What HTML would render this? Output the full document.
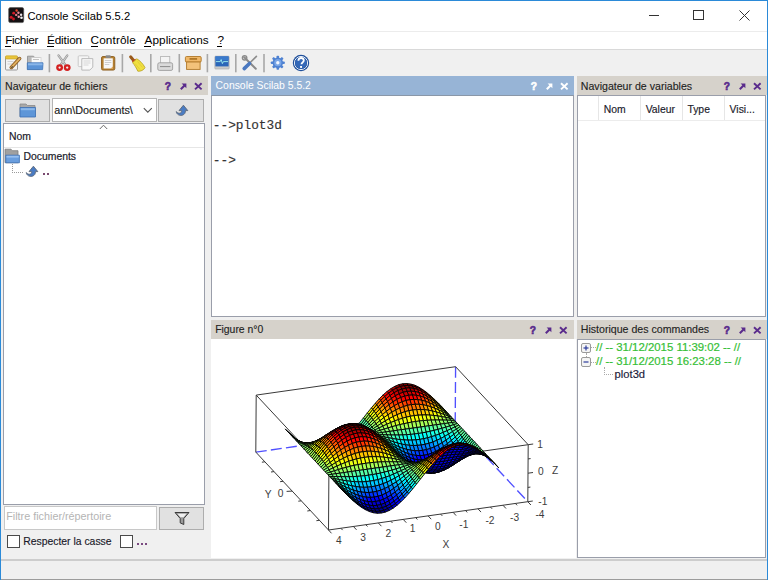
<!DOCTYPE html>
<html><head><meta charset="utf-8">
<style>
*{margin:0;padding:0;box-sizing:border-box}
html,body{width:768px;height:580px;overflow:hidden;background:#f0f0f0;font-family:"Liberation Sans",sans-serif}
body{position:relative}
.t{position:absolute;white-space:nowrap;line-height:1}
.b{position:absolute}
svg{position:absolute;overflow:visible}
</style></head><body>

<div class="b" style="left:0px;top:0px;width:768px;height:31px;background:#fff"></div>
<svg style="left:8px;top:6.5px" width="16" height="16" viewBox="0 0 16 16"><rect x="0.7" y="0.6" width="15" height="15" rx="1.6" fill="#141012" stroke="#5a5a5a" stroke-width="0.7"/><circle cx="5.7" cy="6.2" r="1.4" fill="#d81c28"/><circle cx="3.2" cy="10.2" r="1.5" fill="#d01824"/><circle cx="5.5" cy="12" r="1.4" fill="#c81420"/><circle cx="8.6" cy="3.5" r="1.2" fill="#e04a30"/><circle cx="10.4" cy="5.8" r="1.2" fill="#e88a98"/><circle cx="8.2" cy="7.9" r="1.2" fill="#e07888"/><circle cx="10.7" cy="9.7" r="1.2" fill="#eca0b0"/><circle cx="13.1" cy="7.7" r="1.2" fill="#e8e0e4"/><circle cx="13.5" cy="10.8" r="1.3" fill="#f4f4f4"/></svg>
<div class="t" style="left:27.50px;top:11.22px;font-size:11.20px;color:#000;font-family:'Liberation Sans',sans-serif;">Console Scilab 5.5.2</div>
<div class="b" style="left:649px;top:15px;width:10px;height:1px;background:#333"></div>
<div class="b" style="left:693px;top:10px;width:11px;height:10px;border:1px solid #333"></div>
<svg style="left:739px;top:10px" width="11" height="11" viewBox="0 0 11 11"><path d="M0.5 0.5L10.5 10.5M10.5 0.5L0.5 10.5" stroke="#333" stroke-width="1"/></svg>
<div class="b" style="left:0px;top:31px;width:768px;height:1px;background:#ececec"></div>
<div class="b" style="left:0px;top:32px;width:768px;height:17px;background:#fff"></div>
<div class="t" style="left:5.20px;top:34.61px;font-size:11.80px;color:#000;font-family:'Liberation Sans',sans-serif;letter-spacing:-0.38px">Fichier</div>
<div class="t" style="left:47.00px;top:34.61px;font-size:11.80px;color:#000;font-family:'Liberation Sans',sans-serif;letter-spacing:-0.16px">Édition</div>
<div class="t" style="left:90.60px;top:34.61px;font-size:11.80px;color:#000;font-family:'Liberation Sans',sans-serif;letter-spacing:0.1px">Contrôle</div>
<div class="t" style="left:144.50px;top:34.61px;font-size:11.80px;color:#000;font-family:'Liberation Sans',sans-serif;letter-spacing:0.05px">Applications</div>
<div class="t" style="left:217.50px;top:34.61px;font-size:11.80px;color:#000;font-family:'Liberation Sans',sans-serif;letter-spacing:0px">?</div>
<div class="b" style="left:5.2px;top:46px;width:6px;height:1px;background:#000"></div>
<div class="b" style="left:47px;top:46px;width:6.5px;height:1px;background:#000"></div>
<div class="b" style="left:90.6px;top:46px;width:7px;height:1px;background:#000"></div>
<div class="b" style="left:144.3px;top:46px;width:7px;height:1px;background:#000"></div>
<div class="b" style="left:217px;top:46px;width:5px;height:1px;background:#000"></div>
<div class="b" style="left:0px;top:49px;width:768px;height:1px;background:#d9d9d9"></div>
<svg class="abs" style="left:0;top:49px" width="320" height="27" viewBox="0 49 320 27">
<!-- new -->
<rect x="5.5" y="56.5" width="12" height="13.5" rx="1" fill="#f4f4f4" stroke="#9a9a9a"/>
<rect x="5.5" y="55.8" width="12" height="3.2" rx="1" fill="#e8c43a" stroke="#c8a020" stroke-width="0.6"/>
<path d="M7.5 61.5h6M7.5 64h5" stroke="#c8c8c8" stroke-width="0.8"/>
<path d="M19.6 58.6L11.3 67.4" stroke="#8a5a20" stroke-width="3.6" stroke-linecap="round"/>
<path d="M19.6 58.6L11.3 67.4" stroke="#e0b060" stroke-width="2" stroke-linecap="round"/>
<path d="M10.6 68.4l1.5-2.5 1 1z" fill="#333"/>
<!-- open -->
<path d="M27.5 56.2h6l1.5 1.5h4.5v11.8h-12z" fill="#b8b8b8" stroke="#8c8c8c" stroke-width="0.8"/>
<rect x="31.5" y="57.5" width="9.5" height="7" fill="#fafafa" stroke="#c8c8c8" stroke-width="0.6"/>
<path d="M33 59.5h6" stroke="#aaa" stroke-width="0.7"/>
<path d="M27.3 62.8h15.7l-0.4 6.8h-15.3z" fill="#5b93d6" stroke="#3e74b8" stroke-width="0.8"/>
<rect x="28" y="63.3" width="14.5" height="2" fill="#8ab6e8"/>
<!-- seps -->
<g fill="#a8a8a8"><rect x="48.6" y="54" width="1.6" height="18.3"/><rect x="121.6" y="54" width="1.6" height="18.3"/><rect x="150" y="54" width="1.6" height="18.3"/><rect x="178.5" y="54" width="1.6" height="18.3"/><rect x="206.6" y="54" width="1.6" height="18.3"/><rect x="235" y="54" width="1.6" height="18.3"/><rect x="263.2" y="54" width="1.6" height="18.3"/></g>
<!-- scissors -->
<path d="M58.5 55.5L65.5 65M67.3 55.5L60.5 65" stroke="#9a9a9a" stroke-width="2.2" stroke-linecap="round"/>
<path d="M58.5 55.5L65.5 65M67.3 55.5L60.5 65" stroke="#d8d8d8" stroke-width="0.9" stroke-linecap="round"/>
<circle cx="59.6" cy="67.6" r="2.3" fill="none" stroke="#d42020" stroke-width="2.3"/>
<circle cx="67.2" cy="67.6" r="2.3" fill="none" stroke="#d42020" stroke-width="2.3"/>
<!-- copy -->
<rect x="78.2" y="55.8" width="10.6" height="10.8" rx="1" fill="#f6f6f6" stroke="#c4c4c4" stroke-width="0.9"/>
<path d="M81.8 58.6h11v8.5l-3 3h-8z" fill="#f8f8f8" stroke="#b4b4b4" stroke-width="0.9"/>
<path d="M83.5 61h7M83.5 63h7M83.5 65h5" stroke="#c8c8c8" stroke-width="0.7"/>
<!-- paste -->
<rect x="101.5" y="56.5" width="13.3" height="13.6" rx="1.5" fill="#b58030" stroke="#8e6020" stroke-width="0.9"/>
<rect x="103.6" y="58.3" width="9.2" height="10.2" fill="#f8f8f8"/>
<rect x="105.5" y="55.3" width="5.3" height="2.8" rx="1" fill="#8a8a8a"/>
<path d="M104.8 60.5h6.5M104.8 62.5h6.5M104.8 64.5h4.5" stroke="#bbb" stroke-width="0.7"/>
<path d="M110.8 68.5l2-2v2z" fill="#e09030"/>
<!-- broom -->
<path d="M130.6 56.8L134.2 61.2" stroke="#9a5a1a" stroke-width="3" stroke-linecap="round"/>
<path d="M132 61.6l3.2-2.8 1.4 1.4-3.2 2.8z" fill="#c83820"/>
<path d="M132.6 62.6L136.8 58.8C139.6 60.4 143 63.6 145 67.6C144 70 140.6 71.6 137.8 71.2C136.6 68.4 134.6 65 132.6 62.6z" fill="#f0e040" stroke="#b8a020" stroke-width="0.8"/>
<path d="M135 63.5L140 69.5M137.5 61.5L142.5 67.5" stroke="#d8c030" stroke-width="0.6"/>
<!-- printer -->
<rect x="160.6" y="56.4" width="9.2" height="7" fill="#f4f4f4" stroke="#b0b0b0" stroke-width="0.8"/>
<rect x="157.8" y="62.8" width="14.8" height="7.6" rx="1.5" fill="#dadada" stroke="#9c9c9c" stroke-width="0.9"/>
<path d="M160 66.6h10.4" stroke="#8a8a8a" stroke-width="1"/>
<!-- box -->
<rect x="185.4" y="56.5" width="15.8" height="5.6" rx="1.2" fill="#f0b868" stroke="#b07828" stroke-width="0.9"/>
<rect x="186.6" y="62" width="13.5" height="7.4" fill="#f3c27a" stroke="#b07828" stroke-width="0.9"/>
<rect x="189.5" y="58" width="7.6" height="1.8" fill="#b07828"/>
<!-- monitor -->
<rect x="214.8" y="56.2" width="14.4" height="12.8" rx="0.8" fill="#c9c9c9" stroke="#a8a8a8" stroke-width="0.6"/>
<rect x="215.4" y="56.4" width="13.2" height="10" fill="#2c66b8"/>
<rect x="215.4" y="56.4" width="13.2" height="4" fill="#3a7acc"/>
<path d="M216 61.6h4.2l1-2 1.2 4 1-2h4.6" fill="none" stroke="#a0f0f0" stroke-width="0.9"/>
<!-- tools -->
<path d="M244.2 57.2L255.8 68.8" stroke="#8a8a8a" stroke-width="2" stroke-linecap="round"/>
<circle cx="244.6" cy="57.8" r="2.2" fill="none" stroke="#8a8a8a" stroke-width="1.4"/>
<path d="M256.4 56.4L250 62.8" stroke="#8c8c8c" stroke-width="1.6" stroke-linecap="round"/>
<path d="M249.5 63.5L244.2 68.6" stroke="#4a78c0" stroke-width="3.6" stroke-linecap="round"/>
<!-- gear -->
<g transform="translate(277.8 62.7)">
<circle r="5.2" fill="#4f82d2"/>
<g fill="#4f82d2"><rect x="-1.3" y="-7" width="2.6" height="14" rx="0.8"/><rect x="-1.3" y="-7" width="2.6" height="14" rx="0.8" transform="rotate(45)"/><rect x="-1.3" y="-7" width="2.6" height="14" rx="0.8" transform="rotate(90)"/><rect x="-1.3" y="-7" width="2.6" height="14" rx="0.8" transform="rotate(135)"/></g>
<circle r="3.6" fill="#7aa6e6"/>
<circle r="1.7" fill="#f2f6ff"/>
</g>
<!-- help -->
<circle cx="301" cy="63" r="8.2" fill="#1f4f9a"/>
<circle cx="301" cy="63" r="6.6" fill="none" stroke="#e8eef8" stroke-width="1"/>
<circle cx="301" cy="63" r="5.8" fill="#3468b8"/>
<path d="M298.4 60.8c0-1.8 1.2-2.8 2.7-2.8s2.7 1 2.7 2.5c0 1.8-2.3 2-2.3 3.8" fill="none" stroke="#fff" stroke-width="1.8"/>
<rect x="300.1" y="66" width="1.9" height="1.9" fill="#fff"/>
</svg>

<div class="b" style="left:1px;top:76px;width:207px;height:19px;background:#d6d2cb"></div>
<div class="t" style="left:5.00px;top:80.53px;font-size:10.60px;color:#222;font-family:'Liberation Sans',sans-serif;-webkit-text-stroke:0.12px #222">Navigateur de fichiers</div>
<svg style="left:163px;top:76px" width="42" height="19" viewBox="0 0 42 19"><text x="4.8" y="13.7" font-family="Liberation Sans" font-weight="bold" font-size="10.2" text-anchor="middle" fill="#5a2b8c" stroke="#5a2b8c" stroke-width="0.6">?</text><path d="M17.8 13.2L21.8 9.2" stroke="#5a2b8c" stroke-width="2"/><path d="M18.6 7.4h4.8v4.8z" fill="#5a2b8c"/><path d="M32 7.2L38.6 13.4M38.6 7.2L32 13.4" stroke="#5a2b8c" stroke-width="1.9"/></svg>
<div class="b" style="left:5px;top:99px;width:45px;height:23px;background:#e1e1e1;border:1px solid #adadad"></div>
<svg style="left:19px;top:103px" width="18" height="15" viewBox="0 0 18 15"><path d="M1 1h6l1.5 1.5H16v11H1z" fill="#a8a8a8" stroke="#8a8a8a" stroke-width="0.8"/><path d="M1 4.5h15.5v9.5H1z" fill="#5e96d8" stroke="#3c70b4" stroke-width="0.8"/><rect x="1.8" y="5.2" width="14" height="2" fill="#8cb8ea"/></svg>
<div class="b" style="left:52px;top:98px;width:105px;height:24px;background:#fff;border:1px solid #b4b4b4"></div>
<div class="t" style="left:54.20px;top:104.86px;font-size:10.80px;color:#1a1a1a;font-family:'Liberation Sans',sans-serif;-webkit-text-stroke:0.15px #1a1a1a">ann\Documents\</div>
<svg style="left:143px;top:107px" width="10" height="7" viewBox="0 0 10 7"><path d="M0.8 1.2L4.8 5.2L8.8 1.2" fill="none" stroke="#555" stroke-width="1.1"/></svg>
<div class="b" style="left:158px;top:99px;width:46px;height:23px;background:#e1e1e1;border:1px solid #adadad"></div>
<svg style="left:174px;top:103px" width="16" height="15" viewBox="0 0 16 15"><path d="M2.2 8.6c0.6 3 3.4 4.4 6.2 3.6c2-0.6 3.2-2.4 3-4.6h2.4L9.4 2.2L5 7.6h2.6c0.2 1.4-0.6 2.4-1.8 2.6c-1.4 0.2-2.6-0.4-3.6-1.6z" fill="#4a7cc4" stroke="#5c6878" stroke-width="0.9"/></svg>
<div class="b" style="left:3px;top:122.5px;width:202px;height:382.5px;background:#fff;border:1px solid #9a9eaa"></div>
<div class="b" style="left:4px;top:147px;width:200px;height:1px;background:#e6e6e6"></div>
<svg style="left:99px;top:124px" width="9" height="6" viewBox="0 0 9 6"><path d="M0.8 5L4.5 1.2L8.2 5" fill="none" stroke="#6a6a6a" stroke-width="1"/></svg>
<div class="t" style="left:9.00px;top:131.80px;font-size:10.40px;color:#1a1a2a;font-family:'Liberation Sans',sans-serif;-webkit-text-stroke:0.2px #1a1a2a">Nom</div>
<svg style="left:4px;top:148px" width="16" height="16" viewBox="0 0 16 16"><path d="M1 1.2h6l1.5 1.5H14v12H1z" fill="#a0a0a0" stroke="#7c7c7c" stroke-width="0.8"/><path d="M1.8 7.2h13.6v7.6H1.8z" fill="#6a9ede" stroke="#3c70b4" stroke-width="0.8"/><rect x="2.5" y="7.8" width="12.2" height="1.8" fill="#96bff0"/></svg>
<div class="t" style="left:23.50px;top:151.80px;font-size:10.40px;color:#1a1a2a;font-family:'Liberation Sans',sans-serif;-webkit-text-stroke:0.2px #1a1a2a">Documents</div>
<div class="b" style="left:12px;top:164px;width:11px;height:9px;border-left:1px dotted #9a9a9a;border-bottom:1px dotted #9a9a9a"></div>
<svg style="left:24px;top:164px" width="16" height="15" viewBox="0 0 16 15"><path d="M2.2 8.6c0.6 3 3.4 4.4 6.2 3.6c2-0.6 3.2-2.4 3-4.6h2.4L9.4 2.2L5 7.6h2.6c0.2 1.4-0.6 2.4-1.8 2.6c-1.4 0.2-2.6-0.4-3.6-1.6z" fill="#4a7cc4" stroke="#5c6878" stroke-width="0.9"/></svg>
<div class="b" style="left:43px;top:173.4px;width:2px;height:2px;background:#7a4a70"></div>
<div class="b" style="left:46.8px;top:173.4px;width:2px;height:2px;background:#7a4a70"></div>
<div class="b" style="left:4px;top:506px;width:153px;height:24px;background:#fff;border:1px solid #c8c8c8"></div>
<div class="t" style="left:6.20px;top:511.36px;font-size:10.80px;color:#b4b4b4;font-family:'Liberation Sans',sans-serif;">Filtre fichier/répertoire</div>
<div class="b" style="left:159px;top:507px;width:45px;height:23px;background:#e1e1e1;border:1px solid #adadad"></div>
<svg style="left:174px;top:511px" width="16" height="15" viewBox="0 0 16 15"><path d="M1 1.5h14l-5.2 6v6l-3.6-1.6v-4.4z" fill="#9a9a9a" stroke="#3c3c3c" stroke-width="1"/><path d="M3.5 2.8h9l-3 3.4h-3z" fill="#f0f0f0"/></svg>
<div class="b" style="left:7px;top:535px;width:13px;height:13px;background:#fff;border:1px solid #4a4a4a"></div>
<div class="t" style="left:23.20px;top:536.60px;font-size:10.40px;color:#1a1a2a;font-family:'Liberation Sans',sans-serif;-webkit-text-stroke:0.15px #1a1a2a">Respecter la casse</div>
<div class="b" style="left:120px;top:535px;width:13px;height:13px;background:#fff;border:1px solid #4a4a4a"></div>
<div class="b" style="left:137px;top:543px;width:2px;height:2px;background:#7a4a80"></div>
<div class="b" style="left:141px;top:543px;width:2px;height:2px;background:#7a4a80"></div>
<div class="b" style="left:145px;top:543px;width:2px;height:2px;background:#7a4a80"></div>
<div class="b" style="left:211px;top:76px;width:363px;height:19px;background:#97b4d6"></div>
<div class="t" style="left:215.60px;top:81.30px;font-size:10.40px;color:#fff;font-family:'Liberation Sans',sans-serif;">Console Scilab 5.5.2</div>
<svg style="left:529px;top:76px" width="42" height="19" viewBox="0 0 42 19"><text x="4.8" y="13.7" font-family="Liberation Sans" font-weight="bold" font-size="10.2" text-anchor="middle" fill="#ffffff" stroke="#ffffff" stroke-width="0.6">?</text><path d="M17.8 13.2L21.8 9.2" stroke="#ffffff" stroke-width="2"/><path d="M18.6 7.4h4.8v4.8z" fill="#ffffff"/><path d="M32 7.2L38.6 13.4M38.6 7.2L32 13.4" stroke="#ffffff" stroke-width="1.9"/></svg>
<div class="b" style="left:211px;top:95px;width:363px;height:222px;background:#fff;border:1px solid #9a9eaa;border-top:1px solid #8a97a8"></div>
<div class="t" style="left:212.80px;top:119.96px;font-size:12.80px;color:#333;font-family:'Liberation Mono',monospace;-webkit-text-stroke:0.15px #333">--&gt;plot3d</div>
<div class="t" style="left:212.80px;top:154.86px;font-size:12.80px;color:#333;font-family:'Liberation Mono',monospace;-webkit-text-stroke:0.15px #333">--&gt;</div>
<div class="b" style="left:577px;top:76px;width:190px;height:19px;background:#d6d2cb"></div>
<div class="t" style="left:580.80px;top:80.53px;font-size:10.60px;color:#222;font-family:'Liberation Sans',sans-serif;-webkit-text-stroke:0.12px #222">Navigateur de variables</div>
<svg style="left:722px;top:76px" width="42" height="19" viewBox="0 0 42 19"><text x="4.8" y="13.7" font-family="Liberation Sans" font-weight="bold" font-size="10.2" text-anchor="middle" fill="#5a2b8c" stroke="#5a2b8c" stroke-width="0.6">?</text><path d="M17.8 13.2L21.8 9.2" stroke="#5a2b8c" stroke-width="2"/><path d="M18.6 7.4h4.8v4.8z" fill="#5a2b8c"/><path d="M32 7.2L38.6 13.4M38.6 7.2L32 13.4" stroke="#5a2b8c" stroke-width="1.9"/></svg>
<div class="b" style="left:577px;top:95px;width:189px;height:222px;background:#fff;border:1px solid #9a9eaa"></div>
<div class="b" style="left:578px;top:120px;width:187px;height:1px;background:#ececec"></div>
<div class="b" style="left:598px;top:96px;width:1px;height:24px;background:#e6e6e6"></div>
<div class="b" style="left:640px;top:96px;width:1px;height:24px;background:#e6e6e6"></div>
<div class="b" style="left:682px;top:96px;width:1px;height:24px;background:#e6e6e6"></div>
<div class="b" style="left:724px;top:96px;width:1px;height:24px;background:#e6e6e6"></div>
<div class="t" style="left:603.70px;top:104.60px;font-size:10.40px;color:#1a1a2a;font-family:'Liberation Sans',sans-serif;-webkit-text-stroke:0.15px #1a1a2a">Nom</div>
<div class="t" style="left:645.70px;top:104.60px;font-size:10.40px;color:#1a1a2a;font-family:'Liberation Sans',sans-serif;-webkit-text-stroke:0.15px #1a1a2a">Valeur</div>
<div class="t" style="left:687.40px;top:104.60px;font-size:10.40px;color:#1a1a2a;font-family:'Liberation Sans',sans-serif;-webkit-text-stroke:0.15px #1a1a2a">Type</div>
<div class="t" style="left:729.60px;top:104.60px;font-size:10.40px;color:#1a1a2a;font-family:'Liberation Sans',sans-serif;-webkit-text-stroke:0.15px #1a1a2a">Visi...</div>
<div class="b" style="left:211px;top:320px;width:363px;height:19px;background:#d6d2cb"></div>
<div class="t" style="left:215.20px;top:324.80px;font-size:10.40px;color:#222;font-family:'Liberation Sans',sans-serif;-webkit-text-stroke:0.12px #222">Figure n°0</div>
<svg style="left:528px;top:320px" width="42" height="19" viewBox="0 0 42 19"><text x="4.8" y="13.7" font-family="Liberation Sans" font-weight="bold" font-size="10.2" text-anchor="middle" fill="#5a2b8c" stroke="#5a2b8c" stroke-width="0.6">?</text><path d="M17.8 13.2L21.8 9.2" stroke="#5a2b8c" stroke-width="2"/><path d="M18.6 7.4h4.8v4.8z" fill="#5a2b8c"/><path d="M32 7.2L38.6 13.4M38.6 7.2L32 13.4" stroke="#5a2b8c" stroke-width="1.9"/></svg>
<div class="b" style="left:211px;top:339px;width:365px;height:219px;background:#fff;overflow:hidden"><svg width="365" height="219" viewBox="211 339 365 219" style="left:0;top:0;overflow:hidden">
<g stroke="#5050ff" stroke-width="1.35" stroke-dasharray="11 4.2" fill="none"><path d="M255.8 452.1L455.2 423.7"/><path d="M455.2 423.7L527.8 501.7"/><path d="M455.6 366.7L455.2 423.7"/></g><g stroke="#3a3a3a" stroke-width="1" fill="none"><path d="M256.2 395.1L455.6 366.7"/><path d="M455.6 366.7L528.2 444.7"/><path d="M256.2 395.1L255.8 452.1"/><path d="M256.2 395.1L328.9 473.0"/><path d="M528.2 444.7L328.9 473.0"/><path d="M328.5 530.0L328.9 473.0"/></g>
<g stroke="#000" stroke-width="0.9" stroke-linejoin="round"><path d="M441.8 406.6L437.9 402.7L439.3 404.3L443.2 408.2Z" fill="#a8ff57"/><path d="M437.9 402.7L434.0 398.9L435.4 400.6L439.3 404.3Z" fill="#f9ff06"/><path d="M443.2 408.2L439.3 404.3L440.7 406.0L444.6 409.7Z" fill="#a8ff57"/><path d="M434.0 398.9L430.1 395.4L431.5 397.1L435.4 400.6Z" fill="#ffc400"/><path d="M439.3 404.3L435.4 400.6L436.9 402.4L440.7 406.0Z" fill="#f9ff06"/><path d="M444.6 409.7L440.7 406.0L442.2 407.8L446.1 411.2Z" fill="#a8ff57"/><path d="M430.1 395.4L426.2 392.1L427.7 393.9L431.5 397.1Z" fill="#ff7300"/><path d="M435.4 400.6L431.5 397.1L433.0 399.1L436.9 402.4Z" fill="#ffc400"/><path d="M440.7 406.0L436.9 402.4L438.3 404.5L442.2 407.8Z" fill="#e9ff16"/><path d="M426.2 392.1L422.3 389.3L423.8 391.0L427.7 393.9Z" fill="#ff3300"/><path d="M446.1 411.2L442.2 407.8L443.6 409.7L447.5 412.8Z" fill="#a8ff57"/><path d="M431.5 397.1L427.7 393.9L429.1 396.0L433.0 399.1Z" fill="#ff8400"/><path d="M436.9 402.4L433.0 399.1L434.4 401.4L438.3 404.5Z" fill="#ffc400"/><path d="M422.3 389.3L418.4 386.9L419.9 388.7L423.8 391.0Z" fill="#ff0200"/><path d="M442.2 407.8L438.3 404.5L439.7 406.7L443.6 409.7Z" fill="#e9ff16"/><path d="M427.7 393.9L423.8 391.0L425.2 393.3L429.1 396.0Z" fill="#ff4300"/><path d="M447.5 412.8L443.6 409.7L445.0 411.7L448.9 414.3Z" fill="#98ff67"/><path d="M433.0 399.1L429.1 396.0L430.5 398.5L434.4 401.4Z" fill="#ff8400"/><path d="M418.4 386.9L414.6 385.1L416.0 387.0L419.9 388.7Z" fill="#d00000"/><path d="M438.3 404.5L434.4 401.4L435.8 404.0L439.7 406.7Z" fill="#ffd500"/><path d="M423.8 391.0L419.9 388.7L421.3 391.1L425.2 393.3Z" fill="#ff0200"/><path d="M443.6 409.7L439.7 406.7L441.1 409.2L445.0 411.7Z" fill="#d9ff26"/><path d="M414.6 385.1L410.6 384.0L412.1 385.9L416.0 387.0Z" fill="#b00000"/><path d="M429.1 396.0L425.2 393.3L426.6 396.1L430.5 398.5Z" fill="#ff5300"/><path d="M448.9 414.3L445.0 411.7L446.4 413.8L450.3 415.8Z" fill="#98ff67"/><path d="M434.4 401.4L430.5 398.5L431.9 401.4L435.8 404.0Z" fill="#ffa400"/><path d="M419.9 388.7L416.0 387.0L417.4 389.4L421.3 391.1Z" fill="#e10000"/><path d="M410.6 384.0L406.7 383.5L408.2 385.4L412.1 385.9Z" fill="#900000"/><path d="M439.7 406.7L435.8 404.0L437.2 406.8L441.1 409.2Z" fill="#ffe500"/><path d="M425.2 393.3L421.3 391.1L422.7 394.0L426.6 396.1Z" fill="#ff2200"/><path d="M445.0 411.7L441.1 409.2L442.5 411.8L446.4 413.8Z" fill="#c8ff37"/><path d="M406.7 383.5L402.8 383.7L404.3 385.6L408.2 385.4Z" fill="#800000"/><path d="M416.0 387.0L412.1 385.9L413.5 388.4L417.4 389.4Z" fill="#b00000"/><path d="M430.5 398.5L426.6 396.1L428.0 399.2L431.9 401.4Z" fill="#ff6300"/><path d="M435.8 404.0L431.9 401.4L433.3 404.7L437.2 406.8Z" fill="#ffb400"/><path d="M450.3 415.8L446.4 413.8L447.9 415.9L451.8 417.4Z" fill="#98ff67"/><path d="M402.8 383.7L398.9 384.6L400.3 386.5L404.3 385.6Z" fill="#800000"/><path d="M421.3 391.1L417.4 389.4L418.8 392.5L422.7 394.0Z" fill="#f10000"/><path d="M412.1 385.9L408.2 385.4L409.6 387.9L413.5 388.4Z" fill="#a00000"/><path d="M441.1 409.2L437.2 406.8L438.6 409.9L442.5 411.8Z" fill="#f9ff06"/><path d="M398.9 384.6L395.0 386.2L396.4 388.1L400.3 386.5Z" fill="#900000"/><path d="M426.6 396.1L422.7 394.0L424.1 397.4L428.0 399.2Z" fill="#ff3300"/><path d="M417.4 389.4L413.5 388.4L414.9 391.5L418.8 392.5Z" fill="#d00000"/><path d="M446.4 413.8L442.5 411.8L444.0 414.5L447.9 415.9Z" fill="#b8ff47"/><path d="M395.0 386.2L391.1 388.5L392.5 390.3L396.4 388.1Z" fill="#b00000"/><path d="M431.9 401.4L428.0 399.2L429.4 402.8L433.3 404.7Z" fill="#ff8400"/><path d="M408.2 385.4L404.3 385.6L405.7 388.2L409.6 387.9Z" fill="#900000"/><path d="M391.1 388.5L387.1 391.4L388.6 393.2L392.5 390.3Z" fill="#d00000"/><path d="M437.2 406.8L433.3 404.7L434.7 408.2L438.6 409.9Z" fill="#ffd500"/><path d="M422.7 394.0L418.8 392.5L420.2 396.1L424.1 397.4Z" fill="#ff1200"/><path d="M387.1 391.4L383.2 394.8L384.6 396.6L388.6 393.2Z" fill="#ff0200"/><path d="M404.3 385.6L400.3 386.5L401.8 389.1L405.7 388.2Z" fill="#900000"/><path d="M451.8 417.4L447.9 415.9L449.3 418.1L453.2 418.9Z" fill="#88ff77"/><path d="M383.2 394.8L379.3 398.8L380.7 400.5L384.6 396.6Z" fill="#ff3300"/><path d="M413.5 388.4L409.6 387.9L411.0 391.2L414.9 391.5Z" fill="#b00000"/><path d="M359.5 422.8L355.6 427.7L357.0 429.1L361.0 424.3Z" fill="#06fff9"/><path d="M355.6 427.7L351.7 432.4L353.1 433.8L357.0 429.1Z" fill="#00c4ff"/><path d="M379.3 398.8L375.3 403.2L376.7 404.9L380.7 400.5Z" fill="#ff7300"/><path d="M363.5 417.8L359.5 422.8L361.0 424.3L364.9 419.3Z" fill="#57ffa8"/><path d="M367.4 412.8L363.5 417.8L364.9 419.3L368.9 414.3Z" fill="#a8ff57"/><path d="M351.7 432.4L347.7 436.8L349.1 438.1L353.1 433.8Z" fill="#0073ff"/><path d="M375.3 403.2L371.4 407.9L372.8 409.5L376.7 404.9Z" fill="#ffc400"/><path d="M371.4 407.9L367.4 412.8L368.9 414.3L372.8 409.5Z" fill="#f9ff06"/><path d="M442.5 411.8L438.6 409.9L440.1 413.1L444.0 414.5Z" fill="#e9ff16"/><path d="M347.7 436.8L343.8 440.7L345.2 442.0L349.1 438.1Z" fill="#0033ff"/><path d="M428.0 399.2L424.1 397.4L425.5 401.3L429.4 402.8Z" fill="#ff5300"/><path d="M343.8 440.7L339.8 444.2L341.3 445.4L345.2 442.0Z" fill="#0002ff"/><path d="M400.3 386.5L396.4 388.1L397.8 390.6L401.8 389.1Z" fill="#a00000"/><path d="M339.8 444.2L335.9 447.1L337.3 448.3L341.3 445.4Z" fill="#0000d0"/><path d="M433.3 404.7L429.4 402.8L430.8 406.8L434.7 408.2Z" fill="#ffa400"/><path d="M418.8 392.5L414.9 391.5L416.3 395.3L420.2 396.1Z" fill="#f10000"/><path d="M409.6 387.9L405.7 388.2L407.1 391.4L411.0 391.2Z" fill="#b00000"/><path d="M447.9 415.9L444.0 414.5L445.4 417.3L449.3 418.1Z" fill="#a8ff57"/><path d="M396.4 388.1L392.5 390.3L393.9 392.8L397.8 390.6Z" fill="#b00000"/><path d="M335.9 447.1L332.0 449.3L333.4 450.5L337.3 448.3Z" fill="#0000b0"/><path d="M438.6 409.9L434.7 408.2L436.2 412.0L440.1 413.1Z" fill="#fff500"/><path d="M424.1 397.4L420.2 396.1L421.6 400.2L425.5 401.3Z" fill="#ff3300"/><path d="M392.5 390.3L388.6 393.2L390.0 395.6L393.9 392.8Z" fill="#e10000"/><path d="M332.0 449.3L328.1 450.9L329.5 452.1L333.4 450.5Z" fill="#000090"/><path d="M405.7 388.2L401.8 389.1L403.2 392.3L407.1 391.4Z" fill="#b00000"/><path d="M388.6 393.2L384.6 396.6L386.0 398.9L390.0 395.6Z" fill="#ff0200"/><path d="M414.9 391.5L411.0 391.2L412.4 395.0L416.3 395.3Z" fill="#e10000"/><path d="M453.2 418.9L449.3 418.1L450.7 420.3L454.6 420.4Z" fill="#88ff77"/><path d="M429.4 402.8L425.5 401.3L426.9 405.6L430.8 406.8Z" fill="#ff8400"/><path d="M384.6 396.6L380.7 400.5L382.1 402.7L386.0 398.9Z" fill="#ff4300"/><path d="M444.0 414.5L440.1 413.1L441.5 416.6L445.4 417.3Z" fill="#c8ff37"/><path d="M380.7 400.5L376.7 404.9L378.2 406.9L382.1 402.7Z" fill="#ff8400"/><path d="M376.7 404.9L372.8 409.5L374.2 411.3L378.2 406.9Z" fill="#ffc400"/><path d="M361.0 424.3L357.0 429.1L358.5 430.3L362.4 425.6Z" fill="#06fff9"/><path d="M364.9 419.3L361.0 424.3L362.4 425.6L366.3 420.8Z" fill="#57ffa8"/><path d="M368.9 414.3L364.9 419.3L366.3 420.8L370.3 416.0Z" fill="#a8ff57"/><path d="M372.8 409.5L368.9 414.3L370.3 416.0L374.2 411.3Z" fill="#f9ff06"/><path d="M357.0 429.1L353.1 433.8L354.5 434.8L358.5 430.3Z" fill="#00c4ff"/><path d="M353.1 433.8L349.1 438.1L350.6 439.0L354.5 434.8Z" fill="#0084ff"/><path d="M328.1 450.9L324.1 451.8L325.6 453.0L329.5 452.1Z" fill="#000080"/><path d="M401.8 389.1L397.8 390.6L399.2 393.8L403.2 392.3Z" fill="#b00000"/><path d="M349.1 438.1L345.2 442.0L346.6 442.8L350.6 439.0Z" fill="#0043ff"/><path d="M420.2 396.1L416.3 395.3L417.7 399.6L421.6 400.2Z" fill="#ff2200"/><path d="M434.7 408.2L430.8 406.8L432.3 411.0L436.2 412.0Z" fill="#ffd500"/><path d="M345.2 442.0L341.3 445.4L342.7 446.1L346.6 442.8Z" fill="#0002ff"/><path d="M411.0 391.2L407.1 391.4L408.5 395.3L412.4 395.0Z" fill="#d00000"/><path d="M449.3 418.1L445.4 417.3L446.8 420.1L450.7 420.3Z" fill="#98ff67"/><path d="M397.8 390.6L393.9 392.8L395.3 395.8L399.2 393.8Z" fill="#d00000"/><path d="M341.3 445.4L337.3 448.3L338.8 448.9L342.7 446.1Z" fill="#0000e1"/><path d="M425.5 401.3L421.6 400.2L423.0 404.8L426.9 405.6Z" fill="#ff6300"/><path d="M324.1 451.8L320.2 452.0L321.7 453.2L325.6 453.0Z" fill="#000080"/><path d="M440.1 413.1L436.2 412.0L437.6 415.9L441.5 416.6Z" fill="#e9ff16"/><path d="M393.9 392.8L390.0 395.6L391.4 398.5L395.3 395.8Z" fill="#f10000"/><path d="M337.3 448.3L333.4 450.5L334.8 451.1L338.8 448.9Z" fill="#0000b0"/><path d="M416.3 395.3L412.4 395.0L413.8 399.4L417.7 399.6Z" fill="#ff0200"/><path d="M407.1 391.4L403.2 392.3L404.6 396.1L408.5 395.3Z" fill="#d00000"/><path d="M430.8 406.8L426.9 405.6L428.3 410.2L432.3 411.0Z" fill="#ffb400"/><path d="M390.0 395.6L386.0 398.9L387.5 401.6L391.4 398.5Z" fill="#ff2200"/><path d="M445.4 417.3L441.5 416.6L442.9 420.1L446.8 420.1Z" fill="#a8ff57"/><path d="M333.4 450.5L329.5 452.1L330.9 452.6L334.8 451.1Z" fill="#0000a0"/><path d="M386.0 398.9L382.1 402.7L383.5 405.2L387.5 401.6Z" fill="#ff5300"/><path d="M454.6 420.4L450.7 420.3L452.1 422.5L456.0 421.9Z" fill="#88ff77"/><path d="M320.2 452.0L316.3 451.6L317.8 452.8L321.7 453.2Z" fill="#000090"/><path d="M421.6 400.2L417.7 399.6L419.1 404.3L423.0 404.8Z" fill="#ff5300"/><path d="M382.1 402.7L378.2 406.9L379.6 409.2L383.5 405.2Z" fill="#ff8400"/><path d="M403.2 392.3L399.2 393.8L400.7 397.5L404.6 396.1Z" fill="#e10000"/><path d="M436.2 412.0L432.3 411.0L433.7 415.4L437.6 415.9Z" fill="#f9ff06"/><path d="M378.2 406.9L374.2 411.3L375.7 413.4L379.6 409.2Z" fill="#ffc400"/><path d="M374.2 411.3L370.3 416.0L371.7 417.8L375.7 413.4Z" fill="#e9ff16"/><path d="M370.3 416.0L366.3 420.8L367.8 422.4L371.7 417.8Z" fill="#a8ff57"/><path d="M412.4 395.0L408.5 395.3L409.9 399.7L413.8 399.4Z" fill="#ff0200"/><path d="M366.3 420.8L362.4 425.6L363.8 426.9L367.8 422.4Z" fill="#57ffa8"/><path d="M362.4 425.6L358.5 430.3L359.9 431.3L363.8 426.9Z" fill="#16ffe9"/><path d="M358.5 430.3L354.5 434.8L355.9 435.6L359.9 431.3Z" fill="#00c4ff"/><path d="M354.5 434.8L350.6 439.0L352.0 439.5L355.9 435.6Z" fill="#0084ff"/><path d="M329.5 452.1L325.6 453.0L327.0 453.5L330.9 452.6Z" fill="#000090"/><path d="M426.9 405.6L423.0 404.8L424.4 409.7L428.3 410.2Z" fill="#ffa400"/><path d="M399.2 393.8L395.3 395.8L396.7 399.5L400.7 397.5Z" fill="#f10000"/><path d="M350.6 439.0L346.6 442.8L348.1 443.1L352.0 439.5Z" fill="#0053ff"/><path d="M441.5 416.6L437.6 415.9L439.0 420.0L442.9 420.1Z" fill="#b8ff47"/><path d="M450.7 420.3L446.8 420.1L448.2 423.1L452.1 422.5Z" fill="#88ff77"/><path d="M346.6 442.8L342.7 446.1L344.1 446.2L348.1 443.1Z" fill="#0022ff"/><path d="M417.7 399.6L413.8 399.4L415.2 404.3L419.1 404.3Z" fill="#ff4300"/><path d="M316.3 451.6L312.4 450.4L313.9 451.6L317.8 452.8Z" fill="#0000b0"/><path d="M408.5 395.3L404.6 396.1L406.0 400.5L409.9 399.7Z" fill="#ff0200"/><path d="M432.3 411.0L428.3 410.2L429.7 415.1L433.7 415.4Z" fill="#ffe500"/><path d="M395.3 395.8L391.4 398.5L392.8 401.9L396.7 399.5Z" fill="#ff1200"/><path d="M342.7 446.1L338.8 448.9L340.2 448.9L344.1 446.2Z" fill="#0000f1"/><path d="M325.6 453.0L321.7 453.2L323.1 453.7L327.0 453.5Z" fill="#000090"/><path d="M391.4 398.5L387.5 401.6L388.9 404.8L392.8 401.9Z" fill="#ff3300"/><path d="M423.0 404.8L419.1 404.3L420.5 409.5L424.4 409.7Z" fill="#ff8400"/><path d="M446.8 420.1L442.9 420.1L444.3 423.6L448.2 423.1Z" fill="#88ff77"/><path d="M338.8 448.9L334.8 451.1L336.3 451.0L340.2 448.9Z" fill="#0000d0"/><path d="M437.6 415.9L433.7 415.4L435.1 420.0L439.0 420.0Z" fill="#c8ff37"/><path d="M404.6 396.1L400.7 397.5L402.1 401.8L406.0 400.5Z" fill="#ff0200"/><path d="M387.5 401.6L383.5 405.2L384.9 408.1L388.9 404.8Z" fill="#ff6300"/><path d="M413.8 399.4L409.9 399.7L411.3 404.6L415.2 404.3Z" fill="#ff3300"/><path d="M383.5 405.2L379.6 409.2L381.0 411.8L384.9 408.1Z" fill="#ffa400"/><path d="M456.0 421.9L452.1 422.5L453.5 424.7L457.5 423.5Z" fill="#77ff88"/><path d="M428.3 410.2L424.4 409.7L425.8 414.9L429.7 415.1Z" fill="#ffd500"/><path d="M312.4 450.4L308.5 448.6L310.0 449.9L313.9 451.6Z" fill="#0000d0"/><path d="M379.6 409.2L375.7 413.4L377.1 415.7L381.0 411.8Z" fill="#ffd500"/><path d="M321.7 453.2L317.8 452.8L319.2 453.3L323.1 453.7Z" fill="#0000a0"/><path d="M334.8 451.1L330.9 452.6L332.4 452.5L336.3 451.0Z" fill="#0000b0"/><path d="M375.7 413.4L371.7 417.8L373.1 419.7L377.1 415.7Z" fill="#e9ff16"/><path d="M400.7 397.5L396.7 399.5L398.1 403.6L402.1 401.8Z" fill="#ff2200"/><path d="M371.7 417.8L367.8 422.4L369.2 423.9L373.1 419.7Z" fill="#a8ff57"/><path d="M419.1 404.3L415.2 404.3L416.6 409.6L420.5 409.5Z" fill="#ff8400"/><path d="M367.8 422.4L363.8 426.9L365.3 428.1L369.2 423.9Z" fill="#57ffa8"/><path d="M442.9 420.1L439.0 420.0L440.4 424.2L444.3 423.6Z" fill="#98ff67"/><path d="M363.8 426.9L359.9 431.3L361.3 432.1L365.3 428.1Z" fill="#16ffe9"/><path d="M409.9 399.7L406.0 400.5L407.4 405.4L411.3 404.6Z" fill="#ff3300"/><path d="M433.7 415.4L429.7 415.1L431.1 420.1L435.1 420.0Z" fill="#d9ff26"/><path d="M359.9 431.3L355.9 435.6L357.4 436.0L361.3 432.1Z" fill="#00d4ff"/><path d="M452.1 422.5L448.2 423.1L449.6 426.0L453.5 424.7Z" fill="#77ff88"/><path d="M355.9 435.6L352.0 439.5L353.4 439.7L357.4 436.0Z" fill="#00a4ff"/><path d="M396.7 399.5L392.8 401.9L394.2 405.8L398.1 403.6Z" fill="#ff3300"/><path d="M330.9 452.6L327.0 453.5L328.4 453.3L332.4 452.5Z" fill="#0000b0"/><path d="M424.4 409.7L420.5 409.5L421.9 415.0L425.8 414.9Z" fill="#ffc400"/><path d="M352.0 439.5L348.1 443.1L349.5 443.0L353.4 439.7Z" fill="#0063ff"/><path d="M317.8 452.8L313.9 451.6L315.3 452.2L319.2 453.3Z" fill="#0000b0"/><path d="M392.8 401.9L388.9 404.8L390.3 408.4L394.2 405.8Z" fill="#ff5300"/><path d="M415.2 404.3L411.3 404.6L412.7 410.0L416.6 409.6Z" fill="#ff7300"/><path d="M406.0 400.5L402.1 401.8L403.5 406.6L407.4 405.4Z" fill="#ff4300"/><path d="M439.0 420.0L435.1 420.0L436.5 424.7L440.4 424.2Z" fill="#98ff67"/><path d="M348.1 443.1L344.1 446.2L345.6 445.9L349.5 443.0Z" fill="#0033ff"/><path d="M308.5 448.6L304.6 446.3L306.1 447.6L310.0 449.9Z" fill="#0002ff"/><path d="M448.2 423.1L444.3 423.6L445.7 427.2L449.6 426.0Z" fill="#77ff88"/><path d="M429.7 415.1L425.8 414.9L427.2 420.3L431.1 420.1Z" fill="#e9ff16"/><path d="M388.9 404.8L384.9 408.1L386.4 411.4L390.3 408.4Z" fill="#ff8400"/><path d="M327.0 453.5L323.1 453.7L324.5 453.6L328.4 453.3Z" fill="#0000e6"/><path d="M344.1 446.2L340.2 448.9L341.6 448.3L345.6 445.9Z" fill="#0012ff"/><path d="M420.5 409.5L416.6 409.6L418.0 415.2L421.9 415.0Z" fill="#ffc400"/><path d="M384.9 408.1L381.0 411.8L382.4 414.6L386.4 411.4Z" fill="#ffb400"/><path d="M402.1 401.8L398.1 403.6L399.6 408.1L403.5 406.6Z" fill="#ff5300"/><path d="M411.3 404.6L407.4 405.4L408.8 410.7L412.7 410.0Z" fill="#ff7300"/><path d="M457.5 423.5L453.5 424.7L455.0 426.9L458.9 425.0Z" fill="#77ff88"/><path d="M381.0 411.8L377.1 415.7L378.5 418.1L382.4 414.6Z" fill="#ffe500"/><path d="M435.1 420.0L431.1 420.1L432.6 425.3L436.5 424.7Z" fill="#98ff67"/><path d="M340.2 448.9L336.3 451.0L337.7 450.3L341.6 448.3Z" fill="#0000f1"/><path d="M444.3 423.6L440.4 424.2L441.8 428.3L445.7 427.2Z" fill="#67ff98"/><path d="M377.1 415.7L373.1 419.7L374.6 421.7L378.5 418.1Z" fill="#d9ff26"/><path d="M313.9 451.6L310.0 449.9L311.4 450.6L315.3 452.2Z" fill="#0000e1"/><path d="M425.8 414.9L421.9 415.0L423.3 420.6L427.2 420.3Z" fill="#e9ff16"/><path d="M373.1 419.7L369.2 423.9L370.6 425.4L374.6 421.7Z" fill="#98ff67"/><path d="M398.1 403.6L394.2 405.8L395.6 410.1L399.6 408.1Z" fill="#ff6300"/><path d="M323.1 453.7L319.2 453.3L320.6 453.2L324.5 453.6Z" fill="#0000e6"/><path d="M369.2 423.9L365.3 428.1L366.7 429.1L370.6 425.4Z" fill="#67ff98"/><path d="M453.5 424.7L449.6 426.0L451.0 428.8L455.0 426.9Z" fill="#67ff98"/><path d="M416.6 409.6L412.7 410.0L414.1 415.6L418.0 415.2Z" fill="#ffc400"/><path d="M336.3 451.0L332.4 452.5L333.8 451.7L337.7 450.3Z" fill="#0000e6"/><path d="M304.6 446.3L300.7 443.4L302.2 444.8L306.1 447.6Z" fill="#0033ff"/><path d="M365.3 428.1L361.3 432.1L362.7 432.8L366.7 429.1Z" fill="#26ffd9"/><path d="M407.4 405.4L403.5 406.6L404.9 411.7L408.8 410.7Z" fill="#ff8400"/><path d="M440.4 424.2L436.5 424.7L437.9 429.4L441.8 428.3Z" fill="#67ff98"/><path d="M394.2 405.8L390.3 408.4L391.7 412.3L395.6 410.1Z" fill="#ff8400"/><path d="M431.1 420.1L427.2 420.3L428.6 425.8L432.6 425.3Z" fill="#a8ff57"/><path d="M361.3 432.1L357.4 436.0L358.8 436.2L362.7 432.8Z" fill="#00e5ff"/><path d="M357.4 436.0L353.4 439.7L354.9 439.5L358.8 436.2Z" fill="#00b4ff"/><path d="M421.9 415.0L418.0 415.2L419.4 421.0L423.3 420.6Z" fill="#f9ff06"/><path d="M449.6 426.0L445.7 427.2L447.1 430.7L451.0 428.8Z" fill="#57ffa8"/><path d="M390.3 408.4L386.4 411.4L387.8 414.9L391.7 412.3Z" fill="#ffa400"/><path d="M332.4 452.5L328.4 453.3L329.9 452.5L333.8 451.7Z" fill="#0000e6"/><path d="M403.5 406.6L399.6 408.1L401.0 413.1L404.9 411.7Z" fill="#ff8400"/><path d="M353.4 439.7L349.5 443.0L350.9 442.5L354.9 439.5Z" fill="#0084ff"/><path d="M412.7 410.0L408.8 410.7L410.2 416.3L414.1 415.6Z" fill="#ffc400"/><path d="M319.2 453.3L315.3 452.2L316.7 452.2L320.6 453.2Z" fill="#0000e6"/><path d="M310.0 449.9L306.1 447.6L307.5 448.3L311.4 450.6Z" fill="#0000e6"/><path d="M436.5 424.7L432.6 425.3L434.0 430.4L437.9 429.4Z" fill="#67ff98"/><path d="M386.4 411.4L382.4 414.6L383.8 417.7L387.8 414.9Z" fill="#ffd500"/><path d="M427.2 420.3L423.3 420.6L424.7 426.4L428.6 425.8Z" fill="#a8ff57"/><path d="M349.5 443.0L345.6 445.9L347.0 445.1L350.9 442.5Z" fill="#0053ff"/><path d="M445.7 427.2L441.8 428.3L443.2 432.4L447.1 430.7Z" fill="#47ffb8"/><path d="M382.4 414.6L378.5 418.1L379.9 420.7L383.8 417.7Z" fill="#f9ff06"/><path d="M399.6 408.1L395.6 410.1L397.0 414.7L401.0 413.1Z" fill="#ffa400"/><path d="M418.0 415.2L414.1 415.6L415.5 421.5L419.4 421.0Z" fill="#f9ff06"/><path d="M458.9 425.0L455.0 426.9L456.4 429.1L460.3 426.5Z" fill="#77ff88"/><path d="M328.4 453.3L324.5 453.6L326.0 452.8L329.9 452.5Z" fill="#0000e6"/><path d="M300.7 443.4L296.9 440.2L298.3 441.5L302.2 444.8Z" fill="#0073ff"/><path d="M408.8 410.7L404.9 411.7L406.3 417.2L410.2 416.3Z" fill="#ffc400"/><path d="M345.6 445.9L341.6 448.3L343.1 447.3L347.0 445.1Z" fill="#0000e6"/><path d="M378.5 418.1L374.6 421.7L376.0 423.8L379.9 420.7Z" fill="#c8ff37"/><path d="M432.6 425.3L428.6 425.8L430.0 431.3L434.0 430.4Z" fill="#57ffa8"/><path d="M441.8 428.3L437.9 429.4L439.3 434.0L443.2 432.4Z" fill="#37ffc8"/><path d="M374.6 421.7L370.6 425.4L372.0 427.0L376.0 423.8Z" fill="#98ff67"/><path d="M395.6 410.1L391.7 412.3L393.1 416.6L397.0 414.7Z" fill="#ffb400"/><path d="M423.3 420.6L419.4 421.0L420.8 427.0L424.7 426.4Z" fill="#a8ff57"/><path d="M455.0 426.9L451.0 428.8L452.5 431.6L456.4 429.1Z" fill="#57ffa8"/><path d="M315.3 452.2L311.4 450.6L312.8 450.7L316.7 452.2Z" fill="#0000e6"/><path d="M341.6 448.3L337.7 450.3L339.2 449.0L343.1 447.3Z" fill="#0000e6"/><path d="M370.6 425.4L366.7 429.1L368.1 430.1L372.0 427.0Z" fill="#67ff98"/><path d="M414.1 415.6L410.2 416.3L411.6 422.1L415.5 421.5Z" fill="#f9ff06"/><path d="M404.9 411.7L401.0 413.1L402.4 418.3L406.3 417.2Z" fill="#ffc400"/><path d="M306.1 447.6L302.2 444.8L303.6 445.7L307.5 448.3Z" fill="#0000e6"/><path d="M391.7 412.3L387.8 414.9L389.2 418.7L393.1 416.6Z" fill="#ffd500"/><path d="M366.7 429.1L362.7 432.8L364.2 433.2L368.1 430.1Z" fill="#37ffc8"/><path d="M324.5 453.6L320.6 453.2L322.1 452.5L326.0 452.8Z" fill="#0000e6"/><path d="M451.0 428.8L447.1 430.7L448.5 434.1L452.5 431.6Z" fill="#37ffc8"/><path d="M428.6 425.8L424.7 426.4L426.1 432.2L430.0 431.3Z" fill="#57ffa8"/><path d="M437.9 429.4L434.0 430.4L435.4 435.5L439.3 434.0Z" fill="#26ffd9"/><path d="M362.7 432.8L358.8 436.2L360.2 436.2L364.2 433.2Z" fill="#06fff9"/><path d="M337.7 450.3L333.8 451.7L335.3 450.3L339.2 449.0Z" fill="#0000e6"/><path d="M419.4 421.0L415.5 421.5L416.9 427.5L420.8 427.0Z" fill="#a8ff57"/><path d="M387.8 414.9L383.8 417.7L385.3 420.9L389.2 418.7Z" fill="#fff500"/><path d="M401.0 413.1L397.0 414.7L398.4 419.6L402.4 418.3Z" fill="#ffd500"/><path d="M410.2 416.3L406.3 417.2L407.7 422.9L411.6 422.1Z" fill="#f9ff06"/><path d="M447.1 430.7L443.2 432.4L444.6 436.4L448.5 434.1Z" fill="#16ffe9"/><path d="M358.8 436.2L354.9 439.5L356.3 439.0L360.2 436.2Z" fill="#00d4ff"/><path d="M296.9 440.2L293.0 436.6L294.4 438.0L298.3 441.5Z" fill="#00c4ff"/><path d="M434.0 430.4L430.0 431.3L431.4 436.7L435.4 435.5Z" fill="#16ffe9"/><path d="M383.8 417.7L379.9 420.7L381.3 423.4L385.3 420.9Z" fill="#e9ff16"/><path d="M424.7 426.4L420.8 427.0L422.2 432.9L426.1 432.2Z" fill="#57ffa8"/><path d="M311.4 450.6L307.5 448.3L308.9 448.7L312.8 450.7Z" fill="#0000e6"/><path d="M354.9 439.5L350.9 442.5L352.4 441.6L356.3 439.0Z" fill="#00a4ff"/><path d="M333.8 451.7L329.9 452.5L331.3 451.1L335.3 450.3Z" fill="#0000e6"/><path d="M320.6 453.2L316.7 452.2L318.2 451.7L322.1 452.5Z" fill="#0000e6"/><path d="M397.0 414.7L393.1 416.6L394.5 421.0L398.4 419.6Z" fill="#ffe500"/><path d="M443.2 432.4L439.3 434.0L440.7 438.5L444.6 436.4Z" fill="#06fff9"/><path d="M415.5 421.5L411.6 422.1L413.0 428.1L416.9 427.5Z" fill="#a8ff57"/><path d="M460.3 426.5L456.4 429.1L457.8 431.2L461.7 428.1Z" fill="#67ff98"/><path d="M379.9 420.7L376.0 423.8L377.4 425.9L381.3 423.4Z" fill="#b8ff47"/><path d="M406.3 417.2L402.4 418.3L403.8 423.7L407.7 422.9Z" fill="#e9ff16"/><path d="M350.9 442.5L347.0 445.1L348.5 443.8L352.4 441.6Z" fill="#0000e6"/><path d="M302.2 444.8L298.3 441.5L299.7 442.6L303.6 445.7Z" fill="#0000e6"/><path d="M430.0 431.3L426.1 432.2L427.5 437.8L431.4 436.7Z" fill="#16ffe9"/><path d="M456.4 429.1L452.5 431.6L453.9 434.4L457.8 431.2Z" fill="#47ffb8"/><path d="M376.0 423.8L372.0 427.0L373.5 428.5L377.4 425.9Z" fill="#98ff67"/><path d="M420.8 427.0L416.9 427.5L418.3 433.5L422.2 432.9Z" fill="#57ffa8"/><path d="M393.1 416.6L389.2 418.7L390.6 422.6L394.5 421.0Z" fill="#f9ff06"/><path d="M439.3 434.0L435.4 435.5L436.8 440.3L440.7 438.5Z" fill="#00e5ff"/><path d="M329.9 452.5L326.0 452.8L327.4 451.5L331.3 451.1Z" fill="#0000e6"/><path d="M347.0 445.1L343.1 447.3L344.5 445.8L348.5 443.8Z" fill="#0000e6"/><path d="M411.6 422.1L407.7 422.9L409.1 428.6L413.0 428.1Z" fill="#a8ff57"/><path d="M452.5 431.6L448.5 434.1L449.9 437.3L453.9 434.4Z" fill="#16ffe9"/><path d="M372.0 427.0L368.1 430.1L369.5 431.1L373.5 428.5Z" fill="#67ff98"/><path d="M402.4 418.3L398.4 419.6L399.8 424.6L403.8 423.7Z" fill="#e9ff16"/><path d="M316.7 452.2L312.8 450.7L314.3 450.3L318.2 451.7Z" fill="#0000e6"/><path d="M389.2 418.7L385.3 420.9L386.7 424.3L390.6 422.6Z" fill="#e9ff16"/><path d="M426.1 432.2L422.2 432.9L423.6 438.7L427.5 437.8Z" fill="#06fff9"/><path d="M307.5 448.3L303.6 445.7L305.0 446.2L308.9 448.7Z" fill="#0000e6"/><path d="M293.0 436.6L289.1 432.8L290.5 434.3L294.4 438.0Z" fill="#06fff9"/><path d="M435.4 435.5L431.4 436.7L432.8 442.0L436.8 440.3Z" fill="#00d4ff"/><path d="M368.1 430.1L364.2 433.2L365.6 433.6L369.5 431.1Z" fill="#47ffb8"/><path d="M448.5 434.1L444.6 436.4L446.0 440.1L449.9 437.3Z" fill="#00f5ff"/><path d="M343.1 447.3L339.2 449.0L340.6 447.3L344.5 445.8Z" fill="#0000e6"/><path d="M416.9 427.5L413.0 428.1L414.4 434.0L418.3 433.5Z" fill="#57ffa8"/><path d="M326.0 452.8L322.1 452.5L323.5 451.3L327.4 451.5Z" fill="#0000e6"/><path d="M398.4 419.6L394.5 421.0L395.9 425.6L399.8 424.6Z" fill="#d9ff26"/><path d="M407.7 422.9L403.8 423.7L405.2 429.2L409.1 428.6Z" fill="#a8ff57"/><path d="M364.2 433.2L360.2 436.2L361.7 436.0L365.6 433.6Z" fill="#16ffe9"/><path d="M385.3 420.9L381.3 423.4L382.7 426.2L386.7 424.3Z" fill="#c8ff37"/><path d="M444.6 436.4L440.7 438.5L442.1 442.7L446.0 440.1Z" fill="#00d4ff"/><path d="M298.3 441.5L294.4 438.0L295.8 439.2L299.7 442.6Z" fill="#0000e6"/><path d="M431.4 436.7L427.5 437.8L428.9 443.3L432.8 442.0Z" fill="#00c4ff"/><path d="M422.2 432.9L418.3 433.5L419.7 439.4L423.6 438.7Z" fill="#06fff9"/><path d="M339.2 449.0L335.3 450.3L336.7 448.5L340.6 447.3Z" fill="#0000e6"/><path d="M360.2 436.2L356.3 439.0L357.8 438.3L361.7 436.0Z" fill="#00f5ff"/><path d="M381.3 423.4L377.4 425.9L378.8 428.1L382.7 426.2Z" fill="#a8ff57"/><path d="M413.0 428.1L409.1 428.6L410.5 434.4L414.4 434.0Z" fill="#57ffa8"/><path d="M440.7 438.5L436.8 440.3L438.2 445.0L442.1 442.7Z" fill="#00b4ff"/><path d="M461.7 428.1L457.8 431.2L459.2 433.3L463.2 429.6Z" fill="#67ff98"/><path d="M394.5 421.0L390.6 422.6L392.0 426.7L395.9 425.6Z" fill="#c8ff37"/><path d="M312.8 450.7L308.9 448.7L310.4 448.5L314.3 450.3Z" fill="#0000e6"/><path d="M403.8 423.7L399.8 424.6L401.2 429.7L405.2 429.2Z" fill="#a8ff57"/><path d="M356.3 439.0L352.4 441.6L353.8 440.4L357.8 438.3Z" fill="#0000e6"/><path d="M457.8 431.2L453.9 434.4L455.3 436.9L459.2 433.3Z" fill="#37ffc8"/><path d="M427.5 437.8L423.6 438.7L425.0 444.3L428.9 443.3Z" fill="#00c4ff"/><path d="M322.1 452.5L318.2 451.7L319.6 450.6L323.5 451.3Z" fill="#0000e6"/><path d="M303.6 445.7L299.7 442.6L301.1 443.4L305.0 446.2Z" fill="#0000e6"/><path d="M377.4 425.9L373.5 428.5L374.9 430.0L378.8 428.1Z" fill="#88ff77"/><path d="M335.3 450.3L331.3 451.1L332.8 449.3L336.7 448.5Z" fill="#0000e6"/><path d="M418.3 433.5L414.4 434.0L415.8 439.8L419.7 439.4Z" fill="#06fff9"/><path d="M436.8 440.3L432.8 442.0L434.2 446.9L438.2 445.0Z" fill="#00a4ff"/><path d="M453.9 434.4L449.9 437.3L451.4 440.4L455.3 436.9Z" fill="#06fff9"/><path d="M289.1 432.8L285.2 428.9L286.6 430.4L290.5 434.3Z" fill="#57ffa8"/><path d="M390.6 422.6L386.7 424.3L388.1 427.9L392.0 426.7Z" fill="#b8ff47"/><path d="M352.4 441.6L348.5 443.8L349.9 442.3L353.8 440.4Z" fill="#0000e6"/><path d="M409.1 428.6L405.2 429.2L406.6 434.7L410.5 434.4Z" fill="#57ffa8"/><path d="M449.9 437.3L446.0 440.1L447.4 443.7L451.4 440.4Z" fill="#00d4ff"/><path d="M373.5 428.5L369.5 431.1L371.0 432.0L374.9 430.0Z" fill="#77ff88"/><path d="M399.8 424.6L395.9 425.6L397.3 430.3L401.2 429.7Z" fill="#98ff67"/><path d="M423.6 438.7L419.7 439.4L421.1 445.0L425.0 444.3Z" fill="#00c4ff"/><path d="M432.8 442.0L428.9 443.3L430.3 448.5L434.2 446.9Z" fill="#0084ff"/><path d="M294.4 438.0L290.5 434.3L291.9 435.7L295.8 439.2Z" fill="#0000e6"/><path d="M446.0 440.1L442.1 442.7L443.5 446.6L447.4 443.7Z" fill="#00a4ff"/><path d="M331.3 451.1L327.4 451.5L328.9 449.6L332.8 449.3Z" fill="#0000e6"/><path d="M348.5 443.8L344.5 445.8L346.0 443.9L349.9 442.3Z" fill="#0000e6"/><path d="M386.7 424.3L382.7 426.2L384.2 429.1L388.1 427.9Z" fill="#a8ff57"/><path d="M414.4 434.0L410.5 434.4L411.9 440.1L415.8 439.8Z" fill="#06fff9"/><path d="M369.5 431.1L365.6 433.6L367.1 433.9L371.0 432.0Z" fill="#57ffa8"/><path d="M308.9 448.7L305.0 446.2L306.5 446.4L310.4 448.5Z" fill="#0000e6"/><path d="M318.2 451.7L314.3 450.3L315.7 449.5L319.6 450.6Z" fill="#0000e6"/><path d="M405.2 429.2L401.2 429.7L402.6 434.9L406.6 434.7Z" fill="#57ffa8"/><path d="M442.1 442.7L438.2 445.0L439.6 449.2L443.5 446.6Z" fill="#0084ff"/><path d="M395.9 425.6L392.0 426.7L393.4 430.9L397.3 430.3Z" fill="#98ff67"/><path d="M428.9 443.3L425.0 444.3L426.4 449.6L430.3 448.5Z" fill="#0084ff"/><path d="M365.6 433.6L361.7 436.0L363.1 435.7L367.1 433.9Z" fill="#37ffc8"/><path d="M299.7 442.6L295.8 439.2L297.3 440.2L301.1 443.4Z" fill="#0000e6"/><path d="M419.7 439.4L415.8 439.8L417.2 445.4L421.1 445.0Z" fill="#00c4ff"/><path d="M344.5 445.8L340.6 447.3L342.1 445.2L346.0 443.9Z" fill="#0000e6"/><path d="M382.7 426.2L378.8 428.1L380.2 430.3L384.2 429.1Z" fill="#98ff67"/><path d="M327.4 451.5L323.5 451.3L325.0 449.6L328.9 449.6Z" fill="#0000e6"/><path d="M438.2 445.0L434.2 446.9L435.6 451.5L439.6 449.2Z" fill="#0063ff"/><path d="M463.2 429.6L459.2 433.3L460.7 435.3L464.6 431.1Z" fill="#67ff98"/><path d="M410.5 434.4L406.6 434.7L407.9 440.1L411.9 440.1Z" fill="#16ffe9"/><path d="M459.2 433.3L455.3 436.9L456.7 439.4L460.7 435.3Z" fill="#26ffd9"/><path d="M361.7 436.0L357.8 438.3L359.2 437.4L363.1 435.7Z" fill="#16ffe9"/><path d="M392.0 426.7L388.1 427.9L389.5 431.4L393.4 430.9Z" fill="#98ff67"/><path d="M401.2 429.7L397.3 430.3L398.7 435.0L402.6 434.9Z" fill="#67ff98"/><path d="M455.3 436.9L451.4 440.4L452.8 443.3L456.7 439.4Z" fill="#00e5ff"/><path d="M378.8 428.1L374.9 430.0L376.3 431.5L380.2 430.3Z" fill="#88ff77"/><path d="M425.0 444.3L421.1 445.0L422.5 450.4L426.4 449.6Z" fill="#0073ff"/><path d="M340.6 447.3L336.7 448.5L338.2 446.3L342.1 445.2Z" fill="#0000e6"/><path d="M314.3 450.3L310.4 448.5L311.8 448.0L315.7 449.5Z" fill="#0000e6"/><path d="M434.2 446.9L430.3 448.5L431.7 453.2L435.6 451.5Z" fill="#0053ff"/><path d="M451.4 440.4L447.4 443.7L448.8 446.9L452.8 443.3Z" fill="#00b4ff"/><path d="M415.8 439.8L411.9 440.1L413.3 445.5L417.2 445.4Z" fill="#00c4ff"/><path d="M305.0 446.2L301.1 443.4L302.6 443.8L306.5 446.4Z" fill="#0000e6"/><path d="M290.5 434.3L286.6 430.4L288.1 432.0L291.9 435.7Z" fill="#57ffa8"/><path d="M357.8 438.3L353.8 440.4L355.3 439.0L359.2 437.4Z" fill="#0000e6"/><path d="M447.4 443.7L443.5 446.6L444.9 450.2L448.8 446.9Z" fill="#0084ff"/><path d="M406.6 434.7L402.6 434.9L404.0 439.9L407.9 440.1Z" fill="#16ffe9"/><path d="M323.5 451.3L319.6 450.6L321.1 449.1L325.0 449.6Z" fill="#0000e6"/><path d="M374.9 430.0L371.0 432.0L372.4 432.8L376.3 431.5Z" fill="#77ff88"/><path d="M388.1 427.9L384.2 429.1L385.6 432.0L389.5 431.4Z" fill="#88ff77"/><path d="M336.7 448.5L332.8 449.3L334.2 447.0L338.2 446.3Z" fill="#0000e6"/><path d="M397.3 430.3L393.4 430.9L394.8 435.0L398.7 435.0Z" fill="#67ff98"/><path d="M430.3 448.5L426.4 449.6L427.8 454.5L431.7 453.2Z" fill="#0043ff"/><path d="M421.1 445.0L417.2 445.4L418.6 450.7L422.5 450.4Z" fill="#0073ff"/><path d="M443.5 446.6L439.6 449.2L441.0 453.1L444.9 450.2Z" fill="#0053ff"/><path d="M295.8 439.2L291.9 435.7L293.4 436.9L297.3 440.2Z" fill="#0000e6"/><path d="M353.8 440.4L349.9 442.3L351.4 440.5L355.3 439.0Z" fill="#0000e6"/><path d="M411.9 440.1L407.9 440.1L409.4 445.3L413.3 445.5Z" fill="#00c4ff"/><path d="M371.0 432.0L367.1 433.9L368.5 434.0L372.4 432.8Z" fill="#67ff98"/><path d="M439.6 449.2L435.6 451.5L437.1 455.6L441.0 453.1Z" fill="#0033ff"/><path d="M310.4 448.5L306.5 446.4L307.9 446.2L311.8 448.0Z" fill="#0000e6"/><path d="M384.2 429.1L380.2 430.3L381.7 432.5L385.6 432.0Z" fill="#88ff77"/><path d="M402.6 434.9L398.7 435.0L400.1 439.6L404.0 439.9Z" fill="#26ffd9"/><path d="M426.4 449.6L422.5 450.4L423.9 455.3L427.8 454.5Z" fill="#0033ff"/><path d="M332.8 449.3L328.9 449.6L330.3 447.4L334.2 447.0Z" fill="#0000e6"/><path d="M349.9 442.3L346.0 443.9L347.4 441.8L351.4 440.5Z" fill="#0000e6"/><path d="M319.6 450.6L315.7 449.5L317.2 448.3L321.1 449.1Z" fill="#0000e6"/><path d="M393.4 430.9L389.5 431.4L390.9 435.0L394.8 435.0Z" fill="#67ff98"/><path d="M417.2 445.4L413.3 445.5L414.7 450.7L418.6 450.7Z" fill="#0084ff"/><path d="M301.1 443.4L297.3 440.2L298.7 441.0L302.6 443.8Z" fill="#0000e6"/><path d="M464.6 431.1L460.7 435.3L462.1 437.2L466.0 432.7Z" fill="#57ffa8"/><path d="M435.6 451.5L431.7 453.2L433.1 457.5L437.1 455.6Z" fill="#0022ff"/><path d="M367.1 433.9L363.1 435.7L364.6 435.2L368.5 434.0Z" fill="#57ffa8"/><path d="M460.7 435.3L456.7 439.4L458.1 441.6L462.1 437.2Z" fill="#16ffe9"/><path d="M456.7 439.4L452.8 443.3L454.2 445.9L458.1 441.6Z" fill="#00d4ff"/><path d="M407.9 440.1L404.0 439.9L405.4 444.8L409.4 445.3Z" fill="#00d4ff"/><path d="M380.2 430.3L376.3 431.5L377.8 433.1L381.7 432.5Z" fill="#88ff77"/><path d="M452.8 443.3L448.8 446.9L450.3 449.8L454.2 445.9Z" fill="#00a4ff"/><path d="M346.0 443.9L342.1 445.2L343.5 442.8L347.4 441.8Z" fill="#0000e6"/><path d="M422.5 450.4L418.6 450.7L420.0 455.6L423.9 455.3Z" fill="#0033ff"/><path d="M448.8 446.9L444.9 450.2L446.3 453.4L450.3 449.8Z" fill="#0063ff"/><path d="M431.7 453.2L427.8 454.5L429.2 458.9L433.1 457.5Z" fill="#0002ff"/><path d="M398.7 435.0L394.8 435.0L396.2 439.1L400.1 439.6Z" fill="#37ffc8"/><path d="M328.9 449.6L325.0 449.6L326.4 447.5L330.3 447.4Z" fill="#0000e6"/><path d="M363.1 435.7L359.2 437.4L360.7 436.4L364.6 435.2Z" fill="#0000e6"/><path d="M291.9 435.7L288.1 432.0L289.5 433.5L293.4 436.9Z" fill="#57ffa8"/><path d="M389.5 431.4L385.6 432.0L387.0 434.9L390.9 435.0Z" fill="#77ff88"/><path d="M413.3 445.5L409.4 445.3L410.8 450.2L414.7 450.7Z" fill="#0084ff"/><path d="M444.9 450.2L441.0 453.1L442.4 456.5L446.3 453.4Z" fill="#0033ff"/><path d="M306.5 446.4L302.6 443.8L304.0 444.0L307.9 446.2Z" fill="#0000e6"/><path d="M315.7 449.5L311.8 448.0L313.2 447.2L317.2 448.3Z" fill="#0000e6"/><path d="M376.3 431.5L372.4 432.8L373.8 433.6L377.8 433.1Z" fill="#77ff88"/><path d="M342.1 445.2L338.2 446.3L339.6 443.7L343.5 442.8Z" fill="#0000e6"/><path d="M441.0 453.1L437.1 455.6L438.5 459.2L442.4 456.5Z" fill="#0012ff"/><path d="M404.0 439.9L400.1 439.6L401.5 444.0L405.4 444.8Z" fill="#00e5ff"/><path d="M427.8 454.5L423.9 455.3L425.3 459.8L429.2 458.9Z" fill="#0002ff"/><path d="M359.2 437.4L355.3 439.0L356.7 437.5L360.7 436.4Z" fill="#0000e6"/><path d="M297.3 440.2L293.4 436.9L294.8 438.1L298.7 441.0Z" fill="#0000e6"/><path d="M418.6 450.7L414.7 450.7L416.1 455.4L420.0 455.6Z" fill="#0043ff"/><path d="M385.6 432.0L381.7 432.5L383.1 434.7L387.0 434.9Z" fill="#77ff88"/><path d="M325.0 449.6L321.1 449.1L322.5 447.3L326.4 447.5Z" fill="#0000e6"/><path d="M394.8 435.0L390.9 435.0L392.3 438.5L396.2 439.1Z" fill="#47ffb8"/><path d="M437.1 455.6L433.1 457.5L434.5 461.3L438.5 459.2Z" fill="#0000f1"/><path d="M372.4 432.8L368.5 434.0L369.9 434.2L373.8 433.6Z" fill="#77ff88"/><path d="M409.4 445.3L405.4 444.8L406.8 449.4L410.8 450.2Z" fill="#00a4ff"/><path d="M338.2 446.3L334.2 447.0L335.7 444.4L339.6 443.7Z" fill="#0000e6"/><path d="M355.3 439.0L351.4 440.5L352.8 438.5L356.7 437.5Z" fill="#0000e6"/><path d="M423.9 455.3L420.0 455.6L421.4 460.0L425.3 459.8Z" fill="#0002ff"/><path d="M466.0 432.7L462.1 437.2L463.5 439.0L467.4 434.2Z" fill="#57ffa8"/><path d="M311.8 448.0L307.9 446.2L309.3 445.7L313.2 447.2Z" fill="#0000e6"/><path d="M462.1 437.2L458.1 441.6L459.6 443.7L463.5 439.0Z" fill="#16ffe9"/><path d="M458.1 441.6L454.2 445.9L455.6 448.2L459.6 443.7Z" fill="#00c4ff"/><path d="M302.6 443.8L298.7 441.0L300.1 441.7L304.0 444.0Z" fill="#0000e6"/><path d="M400.1 439.6L396.2 439.1L397.6 443.0L401.5 444.0Z" fill="#06fff9"/><path d="M433.1 457.5L429.2 458.9L430.6 462.7L434.5 461.3Z" fill="#0000e1"/><path d="M454.2 445.9L450.3 449.8L451.7 452.3L455.6 448.2Z" fill="#0084ff"/><path d="M414.7 450.7L410.8 450.2L412.2 454.8L416.1 455.4Z" fill="#0053ff"/><path d="M381.7 432.5L377.8 433.1L379.2 434.6L383.1 434.7Z" fill="#77ff88"/><path d="M450.3 449.8L446.3 453.4L447.7 456.1L451.7 452.3Z" fill="#0053ff"/><path d="M368.5 434.0L364.6 435.2L366.0 434.7L369.9 434.2Z" fill="#77ff88"/><path d="M390.9 435.0L387.0 434.9L388.4 437.7L392.3 438.5Z" fill="#57ffa8"/><path d="M321.1 449.1L317.2 448.3L318.6 446.7L322.5 447.3Z" fill="#0000e6"/><path d="M351.4 440.5L347.4 441.8L348.9 439.4L352.8 438.5Z" fill="#0000e6"/><path d="M334.2 447.0L330.3 447.4L331.8 444.8L335.7 444.4Z" fill="#0000e6"/><path d="M446.3 453.4L442.4 456.5L443.8 459.5L447.7 456.1Z" fill="#0022ff"/><path d="M293.4 436.9L289.5 433.5L290.9 435.0L294.8 438.1Z" fill="#57ffa8"/><path d="M405.4 444.8L401.5 444.0L402.9 448.3L406.8 449.4Z" fill="#00b4ff"/><path d="M429.2 458.9L425.3 459.8L426.7 463.6L430.6 462.7Z" fill="#0000d0"/><path d="M420.0 455.6L416.1 455.4L417.5 459.7L421.4 460.0Z" fill="#0002ff"/><path d="M442.4 456.5L438.5 459.2L439.9 462.2L443.8 459.5Z" fill="#0000f1"/><path d="M364.6 435.2L360.7 436.4L362.1 435.3L366.0 434.7Z" fill="#0000e6"/><path d="M377.8 433.1L373.8 433.6L375.3 434.5L379.2 434.6Z" fill="#88ff77"/><path d="M396.2 439.1L392.3 438.5L393.7 441.9L397.6 443.0Z" fill="#16ffe9"/><path d="M347.4 441.8L343.5 442.8L345.0 440.2L348.9 439.4Z" fill="#0000e6"/><path d="M307.9 446.2L304.0 444.0L305.5 444.0L309.3 445.7Z" fill="#0000e6"/><path d="M410.8 450.2L406.8 449.4L408.3 453.7L412.2 454.8Z" fill="#0063ff"/><path d="M438.5 459.2L434.5 461.3L436.0 464.4L439.9 462.2Z" fill="#0000d0"/><path d="M330.3 447.4L326.4 447.5L327.9 445.1L331.8 444.8Z" fill="#0000e6"/><path d="M387.0 434.9L383.1 434.7L384.5 437.0L388.4 437.7Z" fill="#67ff98"/><path d="M317.2 448.3L313.2 447.2L314.7 446.0L318.6 446.7Z" fill="#0000e6"/><path d="M298.7 441.0L294.8 438.1L296.2 439.2L300.1 441.7Z" fill="#0000e6"/><path d="M425.3 459.8L421.4 460.0L422.8 463.9L426.7 463.6Z" fill="#0000d0"/><path d="M401.5 444.0L397.6 443.0L399.0 446.8L402.9 448.3Z" fill="#00d4ff"/><path d="M416.1 455.4L412.2 454.8L413.6 458.9L417.5 459.7Z" fill="#0022ff"/><path d="M360.7 436.4L356.7 437.5L358.2 435.9L362.1 435.3Z" fill="#0000e6"/><path d="M343.5 442.8L339.6 443.7L341.1 441.0L345.0 440.2Z" fill="#0000e6"/><path d="M434.5 461.3L430.6 462.7L432.0 466.0L436.0 464.4Z" fill="#0000b0"/><path d="M373.8 433.6L369.9 434.2L371.4 434.3L375.3 434.5Z" fill="#88ff77"/><path d="M463.5 439.0L459.6 443.7L461.0 445.5L464.9 440.7Z" fill="#06fff9"/><path d="M467.4 434.2L463.5 439.0L464.9 440.7L468.9 435.7Z" fill="#57ffa8"/><path d="M459.6 443.7L455.6 448.2L457.0 450.2L461.0 445.5Z" fill="#00c4ff"/><path d="M455.6 448.2L451.7 452.3L453.1 454.5L457.0 450.2Z" fill="#0084ff"/><path d="M392.3 438.5L388.4 437.7L389.8 440.6L393.7 441.9Z" fill="#37ffc8"/><path d="M326.4 447.5L322.5 447.3L324.0 445.1L327.9 445.1Z" fill="#0000e6"/><path d="M451.7 452.3L447.7 456.1L449.2 458.4L453.1 454.5Z" fill="#0043ff"/><path d="M406.8 449.4L402.9 448.3L404.4 452.2L408.3 453.7Z" fill="#0084ff"/><path d="M383.1 434.7L379.2 434.6L380.6 436.1L384.5 437.0Z" fill="#77ff88"/><path d="M304.0 444.0L300.1 441.7L301.6 442.2L305.5 444.0Z" fill="#0000e6"/><path d="M421.4 460.0L417.5 459.7L418.9 463.5L422.8 463.9Z" fill="#0000e1"/><path d="M447.7 456.1L443.8 459.5L445.2 461.8L449.2 458.4Z" fill="#0002ff"/><path d="M313.2 447.2L309.3 445.7L310.8 445.0L314.7 446.0Z" fill="#0000e6"/><path d="M356.7 437.5L352.8 438.5L354.3 436.4L358.2 435.9Z" fill="#0000e6"/><path d="M430.6 462.7L426.7 463.6L428.1 466.9L432.0 466.0Z" fill="#0000b0"/><path d="M339.6 443.7L335.7 444.4L337.2 441.6L341.1 441.0Z" fill="#0000e6"/><path d="M369.9 434.2L366.0 434.7L367.4 434.3L371.4 434.3Z" fill="#0000e6"/><path d="M443.8 459.5L439.9 462.2L441.3 464.7L445.2 461.8Z" fill="#0000e1"/><path d="M294.8 438.1L290.9 435.0L292.3 436.6L296.2 439.2Z" fill="#67ff98"/><path d="M412.2 454.8L408.3 453.7L409.7 457.6L413.6 458.9Z" fill="#0033ff"/><path d="M397.6 443.0L393.7 441.9L395.1 445.1L399.0 446.8Z" fill="#00f5ff"/><path d="M322.5 447.3L318.6 446.7L320.0 444.9L324.0 445.1Z" fill="#0000e6"/><path d="M439.9 462.2L436.0 464.4L437.4 466.9L441.3 464.7Z" fill="#0000b0"/><path d="M352.8 438.5L348.9 439.4L350.4 437.0L354.3 436.4Z" fill="#0000e6"/><path d="M379.2 434.6L375.3 434.5L376.7 435.3L380.6 436.1Z" fill="#88ff77"/><path d="M388.4 437.7L384.5 437.0L385.9 439.1L389.8 440.6Z" fill="#57ffa8"/><path d="M426.7 463.6L422.8 463.9L424.2 467.1L428.1 466.9Z" fill="#0000b0"/><path d="M335.7 444.4L331.8 444.8L333.2 442.1L337.2 441.6Z" fill="#0000e6"/><path d="M417.5 459.7L413.6 458.9L415.0 462.5L418.9 463.5Z" fill="#0000f1"/><path d="M402.9 448.3L399.0 446.8L400.5 450.3L404.4 452.2Z" fill="#00a4ff"/><path d="M366.0 434.7L362.1 435.3L363.5 434.2L367.4 434.3Z" fill="#0000e6"/><path d="M309.3 445.7L305.5 444.0L306.9 443.8L310.8 445.0Z" fill="#0000e6"/><path d="M300.1 441.7L296.2 439.2L297.7 440.2L301.6 442.2Z" fill="#0000e6"/><path d="M436.0 464.4L432.0 466.0L433.5 468.5L437.4 466.9Z" fill="#0000a0"/><path d="M408.3 453.7L404.4 452.2L405.8 455.8L409.7 457.6Z" fill="#0053ff"/><path d="M348.9 439.4L345.0 440.2L346.4 437.5L350.4 437.0Z" fill="#0000e6"/><path d="M393.7 441.9L389.8 440.6L391.2 443.3L395.1 445.1Z" fill="#16ffe9"/><path d="M318.6 446.7L314.7 446.0L316.1 444.6L320.0 444.9Z" fill="#0000e6"/><path d="M464.9 440.7L461.0 445.5L462.4 447.2L466.4 442.3Z" fill="#06fff9"/><path d="M461.0 445.5L457.0 450.2L458.5 451.9L462.4 447.2Z" fill="#00c4ff"/><path d="M468.9 435.7L464.9 440.7L466.4 442.3L470.3 437.3Z" fill="#57ffa8"/><path d="M457.0 450.2L453.1 454.5L454.5 456.2L458.5 451.9Z" fill="#0073ff"/><path d="M331.8 444.8L327.9 445.1L329.3 442.5L333.2 442.1Z" fill="#0000e6"/><path d="M422.8 463.9L418.9 463.5L420.3 466.6L424.2 467.1Z" fill="#0000b0"/><path d="M375.3 434.5L371.4 434.3L372.8 434.5L376.7 435.3Z" fill="#98ff67"/><path d="M453.1 454.5L449.2 458.4L450.6 460.2L454.5 456.2Z" fill="#0033ff"/><path d="M384.5 437.0L380.6 436.1L382.0 437.7L385.9 439.1Z" fill="#77ff88"/><path d="M432.0 466.0L428.1 466.9L429.5 469.4L433.5 468.5Z" fill="#000090"/><path d="M362.1 435.3L358.2 435.9L359.6 434.2L363.5 434.2Z" fill="#0000e6"/><path d="M449.2 458.4L445.2 461.8L446.7 463.6L450.6 460.2Z" fill="#0002ff"/><path d="M413.6 458.9L409.7 457.6L411.1 461.0L415.0 462.5Z" fill="#0012ff"/><path d="M399.0 446.8L395.1 445.1L396.6 448.2L400.5 450.3Z" fill="#00d4ff"/><path d="M345.0 440.2L341.1 441.0L342.5 438.1L346.4 437.5Z" fill="#0000e6"/><path d="M305.5 444.0L301.6 442.2L303.0 442.5L306.9 443.8Z" fill="#0000e6"/><path d="M445.2 461.8L441.3 464.7L442.7 466.5L446.7 463.6Z" fill="#0000d0"/><path d="M296.2 439.2L292.3 436.6L293.8 438.1L297.7 440.2Z" fill="#67ff98"/><path d="M327.9 445.1L324.0 445.1L325.4 442.8L329.3 442.5Z" fill="#0000e6"/><path d="M314.7 446.0L310.8 445.0L312.2 444.1L316.1 444.6Z" fill="#0000e6"/><path d="M428.1 466.9L424.2 467.1L425.6 469.6L429.5 469.4Z" fill="#000090"/><path d="M404.4 452.2L400.5 450.3L401.9 453.6L405.8 455.8Z" fill="#0084ff"/><path d="M371.4 434.3L367.4 434.3L368.9 433.8L372.8 434.5Z" fill="#0000e6"/><path d="M441.3 464.7L437.4 466.9L438.8 468.8L442.7 466.5Z" fill="#0000b0"/><path d="M389.8 440.6L385.9 439.1L387.4 441.3L391.2 443.3Z" fill="#47ffb8"/><path d="M418.9 463.5L415.0 462.5L416.4 465.6L420.3 466.6Z" fill="#0000d0"/><path d="M358.2 435.9L354.3 436.4L355.7 434.3L359.6 434.2Z" fill="#0000e6"/><path d="M380.6 436.1L376.7 435.3L378.1 436.2L382.0 437.7Z" fill="#88ff77"/><path d="M341.1 441.0L337.2 441.6L338.6 438.6L342.5 438.1Z" fill="#0000e6"/><path d="M409.7 457.6L405.8 455.8L407.2 459.0L411.1 461.0Z" fill="#0033ff"/><path d="M437.4 466.9L433.5 468.5L434.9 470.4L438.8 468.8Z" fill="#000090"/><path d="M395.1 445.1L391.2 443.3L392.7 445.8L396.6 448.2Z" fill="#06fff9"/><path d="M324.0 445.1L320.0 444.9L321.5 442.9L325.4 442.8Z" fill="#0000e6"/><path d="M301.6 442.2L297.7 440.2L299.1 441.1L303.0 442.5Z" fill="#47ffb8"/><path d="M354.3 436.4L350.4 437.0L351.8 434.5L355.7 434.3Z" fill="#0000e6"/><path d="M424.2 467.1L420.3 466.6L421.7 469.2L425.6 469.6Z" fill="#0000a0"/><path d="M310.8 445.0L306.9 443.8L308.3 443.5L312.2 444.1Z" fill="#0000e6"/><path d="M367.4 434.3L363.5 434.2L365.0 433.2L368.9 433.8Z" fill="#0000e6"/><path d="M466.4 442.3L462.4 447.2L463.8 448.6L467.8 443.7Z" fill="#06fff9"/><path d="M462.4 447.2L458.5 451.9L459.9 453.2L463.8 448.6Z" fill="#00c4ff"/><path d="M470.3 437.3L466.4 442.3L467.8 443.7L471.7 438.8Z" fill="#57ffa8"/><path d="M458.5 451.9L454.5 456.2L456.0 457.6L459.9 453.2Z" fill="#0073ff"/><path d="M337.2 441.6L333.2 442.1L334.7 439.2L338.6 438.6Z" fill="#0000e6"/><path d="M415.0 462.5L411.1 461.0L412.5 463.9L416.4 465.6Z" fill="#0000f1"/><path d="M433.5 468.5L429.5 469.4L431.0 471.3L434.9 470.4Z" fill="#000080"/><path d="M454.5 456.2L450.6 460.2L452.0 461.5L456.0 457.6Z" fill="#0033ff"/><path d="M385.9 439.1L382.0 437.7L383.5 439.2L387.4 441.3Z" fill="#67ff98"/><path d="M400.5 450.3L396.6 448.2L398.0 451.1L401.9 453.6Z" fill="#00b4ff"/><path d="M376.7 435.3L372.8 434.5L374.2 434.8L378.1 436.2Z" fill="#a8ff57"/><path d="M450.6 460.2L446.7 463.6L448.1 464.9L452.0 461.5Z" fill="#0002ff"/><path d="M320.0 444.9L316.1 444.6L317.6 443.0L321.5 442.9Z" fill="#0000e6"/><path d="M350.4 437.0L346.4 437.5L347.9 434.8L351.8 434.5Z" fill="#0000e6"/><path d="M446.7 463.6L442.7 466.5L444.2 467.8L448.1 464.9Z" fill="#0000d0"/><path d="M405.8 455.8L401.9 453.6L403.3 456.5L407.2 459.0Z" fill="#0063ff"/><path d="M363.5 434.2L359.6 434.2L361.1 432.7L365.0 433.2Z" fill="#0000e6"/><path d="M333.2 442.1L329.3 442.5L330.8 439.8L334.7 439.2Z" fill="#0000e6"/><path d="M420.3 466.6L416.4 465.6L417.8 468.0L421.7 469.2Z" fill="#0000b0"/><path d="M297.7 440.2L293.8 438.1L295.2 439.6L299.1 441.1Z" fill="#67ff98"/><path d="M429.5 469.4L425.6 469.6L427.0 471.5L431.0 471.3Z" fill="#000080"/><path d="M306.9 443.8L303.0 442.5L304.4 442.8L308.3 443.5Z" fill="#0000e6"/><path d="M391.2 443.3L387.4 441.3L388.8 443.3L392.7 445.8Z" fill="#37ffc8"/><path d="M442.7 466.5L438.8 468.8L440.2 470.0L444.2 467.8Z" fill="#0000b0"/><path d="M411.1 461.0L407.2 459.0L408.6 461.7L412.5 463.9Z" fill="#0022ff"/><path d="M372.8 434.5L368.9 433.8L370.3 433.5L374.2 434.8Z" fill="#0000e6"/><path d="M382.0 437.7L378.1 436.2L379.6 437.1L383.5 439.2Z" fill="#98ff67"/><path d="M346.4 437.5L342.5 438.1L344.0 435.2L347.9 434.8Z" fill="#0000e6"/><path d="M316.1 444.6L312.2 444.1L313.7 443.1L317.6 443.0Z" fill="#0000e6"/><path d="M396.6 448.2L392.7 445.8L394.1 448.3L398.0 451.1Z" fill="#00e5ff"/><path d="M438.8 468.8L434.9 470.4L436.3 471.6L440.2 470.0Z" fill="#000090"/><path d="M329.3 442.5L325.4 442.8L326.9 440.3L330.8 439.8Z" fill="#0000e6"/><path d="M359.6 434.2L355.7 434.3L357.2 432.4L361.1 432.7Z" fill="#0000e6"/><path d="M425.6 469.6L421.7 469.2L423.1 471.0L427.0 471.5Z" fill="#000090"/><path d="M416.4 465.6L412.5 463.9L413.9 466.3L417.8 468.0Z" fill="#0000e1"/><path d="M303.0 442.5L299.1 441.1L300.5 442.0L304.4 442.8Z" fill="#57ffa8"/><path d="M401.9 453.6L398.0 451.1L399.4 453.7L403.3 456.5Z" fill="#00a4ff"/><path d="M467.8 443.7L463.8 448.6L465.3 449.8L469.2 445.1Z" fill="#06fff9"/><path d="M471.7 438.8L467.8 443.7L469.2 445.1L473.2 440.3Z" fill="#57ffa8"/><path d="M463.8 448.6L459.9 453.2L461.3 454.3L465.3 449.8Z" fill="#00c4ff"/><path d="M342.5 438.1L338.6 438.6L340.1 435.7L344.0 435.2Z" fill="#0000e6"/><path d="M459.9 453.2L456.0 457.6L457.4 458.5L461.3 454.3Z" fill="#0084ff"/><path d="M387.4 441.3L383.5 439.2L384.9 440.7L388.8 443.3Z" fill="#67ff98"/><path d="M434.9 470.4L431.0 471.3L432.4 472.5L436.3 471.6Z" fill="#000080"/><path d="M456.0 457.6L452.0 461.5L453.4 462.3L457.4 458.5Z" fill="#0043ff"/><path d="M312.2 444.1L308.3 443.5L309.8 443.0L313.7 443.1Z" fill="#0000e6"/><path d="M368.9 433.8L365.0 433.2L366.4 432.3L370.3 433.5Z" fill="#0000e6"/><path d="M325.4 442.8L321.5 442.9L323.0 440.9L326.9 440.3Z" fill="#0000e6"/><path d="M378.1 436.2L374.2 434.8L375.7 435.1L379.6 437.1Z" fill="#b8ff47"/><path d="M452.0 461.5L448.1 464.9L449.5 465.6L453.4 462.3Z" fill="#0002ff"/><path d="M407.2 459.0L403.3 456.5L404.7 459.0L408.6 461.7Z" fill="#0053ff"/><path d="M355.7 434.3L351.8 434.5L353.3 432.2L357.2 432.4Z" fill="#0000e6"/><path d="M421.7 469.2L417.8 468.0L419.2 469.9L423.1 471.0Z" fill="#0000b0"/><path d="M448.1 464.9L444.2 467.8L445.6 468.4L449.5 465.6Z" fill="#0000e1"/><path d="M392.7 445.8L388.8 443.3L390.2 445.3L394.1 448.3Z" fill="#26ffd9"/><path d="M338.6 438.6L334.7 439.2L336.2 436.3L340.1 435.7Z" fill="#0000e6"/><path d="M431.0 471.3L427.0 471.5L428.5 472.7L432.4 472.5Z" fill="#000080"/><path d="M299.1 441.1L295.2 439.6L296.6 441.1L300.5 442.0Z" fill="#77ff88"/><path d="M412.5 463.9L408.6 461.7L410.0 464.0L413.9 466.3Z" fill="#0002ff"/><path d="M321.5 442.9L317.6 443.0L319.0 441.4L323.0 440.9Z" fill="#0000e6"/><path d="M444.2 467.8L440.2 470.0L441.7 470.5L445.6 468.4Z" fill="#0000b0"/><path d="M308.3 443.5L304.4 442.8L305.9 442.9L309.8 443.0Z" fill="#0000e6"/><path d="M365.0 433.2L361.1 432.7L362.5 431.3L366.4 432.3Z" fill="#0000e6"/><path d="M398.0 451.1L394.1 448.3L395.5 450.5L399.4 453.7Z" fill="#00d4ff"/><path d="M351.8 434.5L347.9 434.8L349.3 432.2L353.3 432.2Z" fill="#0000e6"/><path d="M383.5 439.2L379.6 437.1L381.0 438.1L384.9 440.7Z" fill="#98ff67"/><path d="M374.2 434.8L370.3 433.5L371.8 433.3L375.7 435.1Z" fill="#0000e6"/><path d="M334.7 439.2L330.8 439.8L332.2 437.0L336.2 436.3Z" fill="#0000e6"/><path d="M440.2 470.0L436.3 471.6L437.7 472.1L441.7 470.5Z" fill="#0000a0"/><path d="M427.0 471.5L423.1 471.0L424.6 472.2L428.5 472.7Z" fill="#000090"/><path d="M417.8 468.0L413.9 466.3L415.3 468.1L419.2 469.9Z" fill="#0000d0"/><path d="M403.3 456.5L399.4 453.7L400.8 456.0L404.7 459.0Z" fill="#0084ff"/><path d="M317.6 443.0L313.7 443.1L315.1 442.0L319.0 441.4Z" fill="#0000e6"/><path d="M473.2 440.3L469.2 445.1L470.6 446.4L474.6 441.8Z" fill="#57ffa8"/><path d="M304.4 442.8L300.5 442.0L302.0 442.8L305.9 442.9Z" fill="#67ff98"/><path d="M388.8 443.3L384.9 440.7L386.3 442.3L390.2 445.3Z" fill="#67ff98"/><path d="M469.2 445.1L465.3 449.8L466.7 450.8L470.6 446.4Z" fill="#16ffe9"/><path d="M347.9 434.8L344.0 435.2L345.4 432.5L349.3 432.2Z" fill="#0000e6"/><path d="M465.3 449.8L461.3 454.3L462.8 455.0L466.7 450.8Z" fill="#00c4ff"/><path d="M361.1 432.7L357.2 432.4L358.6 430.5L362.5 431.3Z" fill="#0000e6"/><path d="M461.3 454.3L457.4 458.5L458.8 459.0L462.8 455.0Z" fill="#0084ff"/><path d="M436.3 471.6L432.4 472.5L433.8 473.0L437.7 472.1Z" fill="#000090"/><path d="M330.8 439.8L326.9 440.3L328.3 437.9L332.2 437.0Z" fill="#0000e6"/><path d="M408.6 461.7L404.7 459.0L406.1 461.2L410.0 464.0Z" fill="#0043ff"/><path d="M457.4 458.5L453.4 462.3L454.9 462.6L458.8 459.0Z" fill="#0053ff"/><path d="M379.6 437.1L375.7 435.1L377.1 435.6L381.0 438.1Z" fill="#0000e6"/><path d="M453.4 462.3L449.5 465.6L451.0 465.7L454.9 462.6Z" fill="#0022ff"/><path d="M370.3 433.5L366.4 432.3L367.9 431.6L371.8 433.3Z" fill="#0000e6"/><path d="M394.1 448.3L390.2 445.3L391.6 447.2L395.5 450.5Z" fill="#16ffe9"/><path d="M313.7 443.1L309.8 443.0L311.2 442.5L315.1 442.0Z" fill="#0000e6"/><path d="M423.1 471.0L419.2 469.9L420.7 471.1L424.6 472.2Z" fill="#0000b0"/><path d="M344.0 435.2L340.1 435.7L341.5 432.9L345.4 432.5Z" fill="#0000e6"/><path d="M449.5 465.6L445.6 468.4L447.0 468.4L451.0 465.7Z" fill="#0000f1"/><path d="M413.9 466.3L410.0 464.0L411.4 465.8L415.3 468.1Z" fill="#0002ff"/><path d="M300.5 442.0L296.6 441.1L298.0 442.7L302.0 442.8Z" fill="#77ff88"/><path d="M326.9 440.3L323.0 440.9L324.4 438.8L328.3 437.9Z" fill="#0000e6"/><path d="M432.4 472.5L428.5 472.7L429.9 473.2L433.8 473.0Z" fill="#000090"/><path d="M357.2 432.4L353.3 432.2L354.7 430.0L358.6 430.5Z" fill="#0000e6"/><path d="M399.4 453.7L395.5 450.5L396.9 452.6L400.8 456.0Z" fill="#00c4ff"/><path d="M445.6 468.4L441.7 470.5L443.1 470.4L447.0 468.4Z" fill="#0000d0"/><path d="M384.9 440.7L381.0 438.1L382.4 439.2L386.3 442.3Z" fill="#98ff67"/><path d="M309.8 443.0L305.9 442.9L307.3 443.1L311.2 442.5Z" fill="#0000e6"/><path d="M340.1 435.7L336.2 436.3L337.6 433.6L341.5 432.9Z" fill="#0000e6"/><path d="M404.7 459.0L400.8 456.0L402.2 458.0L406.1 461.2Z" fill="#0084ff"/><path d="M323.0 440.9L319.0 441.4L320.5 439.8L324.4 438.8Z" fill="#0000e6"/><path d="M366.4 432.3L362.5 431.3L364.0 430.1L367.9 431.6Z" fill="#0000e6"/><path d="M419.2 469.9L415.3 468.1L416.8 469.3L420.7 471.1Z" fill="#0000d0"/><path d="M375.7 435.1L371.8 433.3L373.2 433.3L377.1 435.6Z" fill="#0000e6"/><path d="M428.5 472.7L424.6 472.2L426.0 472.8L429.9 473.2Z" fill="#0000a0"/><path d="M441.7 470.5L437.7 472.1L439.2 471.9L443.1 470.4Z" fill="#0000b0"/><path d="M353.3 432.2L349.3 432.2L350.8 429.8L354.7 430.0Z" fill="#0000e6"/><path d="M390.2 445.3L386.3 442.3L387.7 443.8L391.6 447.2Z" fill="#57ffa8"/><path d="M474.6 441.8L470.6 446.4L472.1 447.5L476.0 443.4Z" fill="#57ffa8"/><path d="M470.6 446.4L466.7 450.8L468.1 451.6L472.1 447.5Z" fill="#16ffe9"/><path d="M305.9 442.9L302.0 442.8L303.4 443.7L307.3 443.1Z" fill="#77ff88"/><path d="M410.0 464.0L406.1 461.2L407.6 462.9L411.4 465.8Z" fill="#0033ff"/><path d="M466.7 450.8L462.8 455.0L464.2 455.5L468.1 451.6Z" fill="#00d4ff"/><path d="M336.2 436.3L332.2 437.0L333.7 434.4L337.6 433.6Z" fill="#0000e6"/><path d="M319.0 441.4L315.1 442.0L316.6 440.9L320.5 439.8Z" fill="#0000e6"/><path d="M462.8 455.0L458.8 459.0L460.3 459.2L464.2 455.5Z" fill="#00a4ff"/><path d="M437.7 472.1L433.8 473.0L435.3 472.8L439.2 471.9Z" fill="#0000b0"/><path d="M395.5 450.5L391.6 447.2L393.0 449.0L396.9 452.6Z" fill="#16ffe9"/><path d="M458.8 459.0L454.9 462.6L456.3 462.5L460.3 459.2Z" fill="#0063ff"/><path d="M381.0 438.1L377.1 435.6L378.5 436.2L382.4 439.2Z" fill="#0000e6"/><path d="M362.5 431.3L358.6 430.5L360.1 429.0L364.0 430.1Z" fill="#0000e6"/><path d="M349.3 432.2L345.4 432.5L346.9 429.9L350.8 429.8Z" fill="#0000e6"/><path d="M424.6 472.2L420.7 471.1L422.1 471.7L426.0 472.8Z" fill="#0000b0"/><path d="M454.9 462.6L451.0 465.7L452.4 465.4L456.3 462.5Z" fill="#0033ff"/><path d="M371.8 433.3L367.9 431.6L369.3 431.1L373.2 433.3Z" fill="#0000e6"/><path d="M415.3 468.1L411.4 465.8L412.9 467.0L416.8 469.3Z" fill="#0002ff"/><path d="M332.2 437.0L328.3 437.9L329.8 435.5L333.7 434.4Z" fill="#0000e6"/><path d="M302.0 442.8L298.0 442.7L299.5 444.2L303.4 443.7Z" fill="#77ff88"/><path d="M315.1 442.0L311.2 442.5L312.7 442.0L316.6 440.9Z" fill="#0000e6"/><path d="M400.8 456.0L396.9 452.6L398.4 454.4L402.2 458.0Z" fill="#00c4ff"/><path d="M433.8 473.0L429.9 473.2L431.3 473.0L435.3 472.8Z" fill="#0000e6"/><path d="M451.0 465.7L447.0 468.4L448.5 467.8L452.4 465.4Z" fill="#0012ff"/><path d="M386.3 442.3L382.4 439.2L383.9 440.4L387.7 443.8Z" fill="#a8ff57"/><path d="M345.4 432.5L341.5 432.9L343.0 430.3L346.9 429.9Z" fill="#0000e6"/><path d="M406.1 461.2L402.2 458.0L403.7 459.7L407.6 462.9Z" fill="#0073ff"/><path d="M328.3 437.9L324.4 438.8L325.9 436.8L329.8 435.5Z" fill="#0000e6"/><path d="M447.0 468.4L443.1 470.4L444.5 469.8L448.5 467.8Z" fill="#0000f1"/><path d="M358.6 430.5L354.7 430.0L356.2 428.2L360.1 429.0Z" fill="#0000e6"/><path d="M311.2 442.5L307.3 443.1L308.7 443.3L312.7 442.0Z" fill="#88ff77"/><path d="M420.7 471.1L416.8 469.3L418.2 470.0L422.1 471.7Z" fill="#0000e1"/><path d="M377.1 435.6L373.2 433.3L374.6 433.5L378.5 436.2Z" fill="#0000e6"/><path d="M391.6 447.2L387.7 443.8L389.2 445.3L393.0 449.0Z" fill="#57ffa8"/><path d="M429.9 473.2L426.0 472.8L427.4 472.7L431.3 473.0Z" fill="#0000e6"/><path d="M476.0 443.4L472.1 447.5L473.5 448.6L477.4 444.9Z" fill="#67ff98"/><path d="M367.9 431.6L364.0 430.1L365.4 429.3L369.3 431.1Z" fill="#0000e6"/><path d="M443.1 470.4L439.2 471.9L440.6 471.2L444.5 469.8Z" fill="#0000e6"/><path d="M411.4 465.8L407.6 462.9L409.0 464.2L412.9 467.0Z" fill="#0033ff"/><path d="M324.4 438.8L320.5 439.8L321.9 438.3L325.9 436.8Z" fill="#0000e6"/><path d="M472.1 447.5L468.1 451.6L469.6 452.2L473.5 448.6Z" fill="#26ffd9"/><path d="M341.5 432.9L337.6 433.6L339.1 431.0L343.0 430.3Z" fill="#0000e6"/><path d="M307.3 443.1L303.4 443.7L304.8 444.5L308.7 443.3Z" fill="#88ff77"/><path d="M468.1 451.6L464.2 455.5L465.6 455.7L469.6 452.2Z" fill="#00e5ff"/><path d="M396.9 452.6L393.0 449.0L394.5 450.7L398.4 454.4Z" fill="#06fff9"/><path d="M354.7 430.0L350.8 429.8L352.3 427.7L356.2 428.2Z" fill="#0000e6"/><path d="M464.2 455.5L460.3 459.2L461.7 459.0L465.6 455.7Z" fill="#00b4ff"/><path d="M382.4 439.2L378.5 436.2L380.0 437.1L383.9 440.4Z" fill="#0000e6"/><path d="M439.2 471.9L435.3 472.8L436.7 472.0L440.6 471.2Z" fill="#0000e6"/><path d="M320.5 439.8L316.6 440.9L318.0 439.9L321.9 438.3Z" fill="#0000e6"/><path d="M460.3 459.2L456.3 462.5L457.8 461.9L461.7 459.0Z" fill="#0084ff"/><path d="M337.6 433.6L333.7 434.4L335.1 432.0L339.1 431.0Z" fill="#0000e6"/><path d="M402.2 458.0L398.4 454.4L399.8 456.1L403.7 459.7Z" fill="#00c4ff"/><path d="M426.0 472.8L422.1 471.7L423.5 471.7L427.4 472.7Z" fill="#0000e6"/><path d="M416.8 469.3L412.9 467.0L414.3 467.8L418.2 470.0Z" fill="#0000e6"/><path d="M303.4 443.7L299.5 444.2L300.9 445.7L304.8 444.5Z" fill="#88ff77"/><path d="M364.0 430.1L360.1 429.0L361.5 427.8L365.4 429.3Z" fill="#0000e6"/><path d="M456.3 462.5L452.4 465.4L453.8 464.5L457.8 461.9Z" fill="#0053ff"/><path d="M373.2 433.3L369.3 431.1L370.7 430.9L374.6 433.5Z" fill="#0000e6"/><path d="M387.7 443.8L383.9 440.4L385.3 441.6L389.2 445.3Z" fill="#a8ff57"/><path d="M316.6 440.9L312.7 442.0L314.1 441.6L318.0 439.9Z" fill="#0000e6"/><path d="M350.8 429.8L346.9 429.9L348.3 427.7L352.3 427.7Z" fill="#0000e6"/><path d="M435.3 472.8L431.3 473.0L432.8 472.3L436.7 472.0Z" fill="#0000e6"/><path d="M407.6 462.9L403.7 459.7L405.1 461.0L409.0 464.2Z" fill="#0073ff"/><path d="M452.4 465.4L448.5 467.8L449.9 466.8L453.8 464.5Z" fill="#0000e6"/><path d="M333.7 434.4L329.8 435.5L331.2 433.4L335.1 432.0Z" fill="#0000e6"/><path d="M393.0 449.0L389.2 445.3L390.6 446.9L394.5 450.7Z" fill="#57ffa8"/><path d="M312.7 442.0L308.7 443.3L310.2 443.4L314.1 441.6Z" fill="#a8ff57"/><path d="M422.1 471.7L418.2 470.0L419.6 470.2L423.5 471.7Z" fill="#0000e6"/><path d="M448.5 467.8L444.5 469.8L446.0 468.5L449.9 466.8Z" fill="#0000e6"/><path d="M477.4 444.9L473.5 448.6L474.9 449.6L478.9 446.4Z" fill="#67ff98"/><path d="M378.5 436.2L374.6 433.5L376.1 433.9L380.0 437.1Z" fill="#0000e6"/><path d="M360.1 429.0L356.2 428.2L357.6 426.7L361.5 427.8Z" fill="#0000e6"/><path d="M329.8 435.5L325.9 436.8L327.3 435.0L331.2 433.4Z" fill="#0000e6"/><path d="M346.9 429.9L343.0 430.3L344.4 428.0L348.3 427.7Z" fill="#0000e6"/><path d="M412.9 467.0L409.0 464.2L410.4 465.1L414.3 467.8Z" fill="#0000e6"/><path d="M473.5 448.6L469.6 452.2L471.0 452.7L474.9 449.6Z" fill="#37ffc8"/><path d="M431.3 473.0L427.4 472.7L428.9 472.0L432.8 472.3Z" fill="#0000e6"/><path d="M369.3 431.1L365.4 429.3L366.9 428.7L370.7 430.9Z" fill="#0000e6"/><path d="M398.4 454.4L394.5 450.7L395.9 452.3L399.8 456.1Z" fill="#06fff9"/><path d="M308.7 443.3L304.8 444.5L306.2 445.3L310.2 443.4Z" fill="#98ff67"/><path d="M469.6 452.2L465.6 455.7L467.1 455.7L471.0 452.7Z" fill="#06fff9"/><path d="M444.5 469.8L440.6 471.2L442.1 469.8L446.0 468.5Z" fill="#0000e6"/><path d="M325.9 436.8L321.9 438.3L323.4 436.9L327.3 435.0Z" fill="#0000e6"/><path d="M383.9 440.4L380.0 437.1L381.4 438.1L385.3 441.6Z" fill="#0000e6"/><path d="M465.6 455.7L461.7 459.0L463.1 458.5L467.1 455.7Z" fill="#00d4ff"/><path d="M343.0 430.3L339.1 431.0L340.5 428.8L344.4 428.0Z" fill="#0000e6"/><path d="M403.7 459.7L399.8 456.1L401.2 457.5L405.1 461.0Z" fill="#00c4ff"/><path d="M304.8 444.5L300.9 445.7L302.3 447.3L306.2 445.3Z" fill="#88ff77"/><path d="M356.2 428.2L352.3 427.7L353.7 426.0L357.6 426.7Z" fill="#0000e6"/><path d="M418.2 470.0L414.3 467.8L415.7 468.1L419.6 470.2Z" fill="#0000e6"/><path d="M461.7 459.0L457.8 461.9L459.2 461.1L463.1 458.5Z" fill="#00a4ff"/><path d="M440.6 471.2L436.7 472.0L438.1 470.6L442.1 469.8Z" fill="#0000e6"/><path d="M321.9 438.3L318.0 439.9L319.5 439.0L323.4 436.9Z" fill="#0000e6"/><path d="M427.4 472.7L423.5 471.7L425.0 471.2L428.9 472.0Z" fill="#0000e6"/><path d="M389.2 445.3L385.3 441.6L386.7 443.0L390.6 446.9Z" fill="#a8ff57"/><path d="M374.6 433.5L370.7 430.9L372.2 431.1L376.1 433.9Z" fill="#0000e6"/><path d="M365.4 429.3L361.5 427.8L363.0 426.9L366.9 428.7Z" fill="#0000e6"/><path d="M457.8 461.9L453.8 464.5L455.3 463.3L459.2 461.1Z" fill="#0000e6"/><path d="M409.0 464.2L405.1 461.0L406.5 462.1L410.4 465.1Z" fill="#0000e6"/><path d="M339.1 431.0L335.1 432.0L336.6 429.9L340.5 428.8Z" fill="#0000e6"/><path d="M318.0 439.9L314.1 441.6L315.5 441.3L319.5 439.0Z" fill="#e9ff16"/><path d="M394.5 450.7L390.6 446.9L392.0 448.4L395.9 452.3Z" fill="#57ffa8"/><path d="M436.7 472.0L432.8 472.3L434.2 470.9L438.1 470.6Z" fill="#0000e6"/><path d="M352.3 427.7L348.3 427.7L349.8 425.8L353.7 426.0Z" fill="#0000e6"/><path d="M453.8 464.5L449.9 466.8L451.4 465.3L455.3 463.3Z" fill="#0000e6"/><path d="M478.9 446.4L474.9 449.6L476.4 450.5L480.3 448.0Z" fill="#67ff98"/><path d="M335.1 432.0L331.2 433.4L332.7 431.5L336.6 429.9Z" fill="#0000e6"/><path d="M380.0 437.1L376.1 433.9L377.5 434.7L381.4 438.1Z" fill="#0000e6"/><path d="M314.1 441.6L310.2 443.4L311.6 443.7L315.5 441.3Z" fill="#c8ff37"/><path d="M423.5 471.7L419.6 470.2L421.1 469.8L425.0 471.2Z" fill="#0000e6"/><path d="M414.3 467.8L410.4 465.1L411.8 465.7L415.7 468.1Z" fill="#0000e6"/><path d="M399.8 456.1L395.9 452.3L397.3 453.8L401.2 457.5Z" fill="#06fff9"/><path d="M474.9 449.6L471.0 452.7L472.4 453.1L476.4 450.5Z" fill="#47ffb8"/><path d="M449.9 466.8L446.0 468.5L447.4 466.8L451.4 465.3Z" fill="#0000e6"/><path d="M361.5 427.8L357.6 426.7L359.1 425.6L363.0 426.9Z" fill="#0000e6"/><path d="M370.7 430.9L366.9 428.7L368.3 428.6L372.2 431.1Z" fill="#0000e6"/><path d="M310.2 443.4L306.2 445.3L307.7 446.2L311.6 443.7Z" fill="#a8ff57"/><path d="M331.2 433.4L327.3 435.0L328.8 433.4L332.7 431.5Z" fill="#0000e6"/><path d="M432.8 472.3L428.9 472.0L430.3 470.7L434.2 470.9Z" fill="#0000e6"/><path d="M471.0 452.7L467.1 455.7L468.5 455.5L472.4 453.1Z" fill="#16ffe9"/><path d="M348.3 427.7L344.4 428.0L345.9 426.1L349.8 425.8Z" fill="#0000e6"/><path d="M385.3 441.6L381.4 438.1L382.8 439.3L386.7 443.0Z" fill="#0000e6"/><path d="M405.1 461.0L401.2 457.5L402.6 458.7L406.5 462.1Z" fill="#0000e6"/><path d="M446.0 468.5L442.1 469.8L443.5 468.0L447.4 466.8Z" fill="#0000e6"/><path d="M306.2 445.3L302.3 447.3L303.7 448.8L307.7 446.2Z" fill="#88ff77"/><path d="M467.1 455.7L463.1 458.5L464.6 457.8L468.5 455.5Z" fill="#00f5ff"/><path d="M327.3 435.0L323.4 436.9L324.8 435.7L328.8 433.4Z" fill="#0000e6"/><path d="M390.6 446.9L386.7 443.0L388.1 444.5L392.0 448.4Z" fill="#a8ff57"/><path d="M419.6 470.2L415.7 468.1L417.2 468.0L421.1 469.8Z" fill="#0000e6"/><path d="M344.4 428.0L340.5 428.8L342.0 426.9L345.9 426.1Z" fill="#0000e6"/><path d="M376.1 433.9L372.2 431.1L373.6 431.6L377.5 434.7Z" fill="#0000e6"/><path d="M463.1 458.5L459.2 461.1L460.7 459.9L464.6 457.8Z" fill="#0000e6"/><path d="M357.6 426.7L353.7 426.0L355.2 424.8L359.1 425.6Z" fill="#0000e6"/><path d="M428.9 472.0L425.0 471.2L426.4 470.1L430.3 470.7Z" fill="#0000e6"/><path d="M323.4 436.9L319.5 439.0L320.9 438.3L324.8 435.7Z" fill="#0000e6"/><path d="M410.4 465.1L406.5 462.1L408.0 462.8L411.8 465.7Z" fill="#0000e6"/><path d="M442.1 469.8L438.1 470.6L439.6 468.8L443.5 468.0Z" fill="#0000e6"/><path d="M366.9 428.7L363.0 426.9L364.4 426.6L368.3 428.6Z" fill="#0000e6"/><path d="M395.9 452.3L392.0 448.4L393.4 449.9L397.3 453.8Z" fill="#57ffa8"/><path d="M459.2 461.1L455.3 463.3L456.7 461.8L460.7 459.9Z" fill="#0000e6"/><path d="M319.5 439.0L315.5 441.3L317.0 441.1L320.9 438.3Z" fill="#fff500"/><path d="M480.3 448.0L476.4 450.5L477.8 451.4L481.7 449.5Z" fill="#77ff88"/><path d="M340.5 428.8L336.6 429.9L338.0 428.2L342.0 426.9Z" fill="#0000e6"/><path d="M381.4 438.1L377.5 434.7L378.9 435.7L382.8 439.3Z" fill="#0000e6"/><path d="M401.2 457.5L397.3 453.8L398.8 455.1L402.6 458.7Z" fill="#0000e6"/><path d="M438.1 470.6L434.2 470.9L435.7 469.1L439.6 468.8Z" fill="#0000e6"/><path d="M315.5 441.3L311.6 443.7L313.0 444.0L317.0 441.1Z" fill="#e9ff16"/><path d="M353.7 426.0L349.8 425.8L351.2 424.5L355.2 424.8Z" fill="#0000e6"/><path d="M455.3 463.3L451.4 465.3L452.8 463.4L456.7 461.8Z" fill="#0000e6"/><path d="M476.4 450.5L472.4 453.1L473.9 453.3L477.8 451.4Z" fill="#57ffa8"/><path d="M415.7 468.1L411.8 465.7L413.3 465.8L417.2 468.0Z" fill="#0000e6"/><path d="M425.0 471.2L421.1 469.8L422.5 469.0L426.4 470.1Z" fill="#0000e6"/><path d="M336.6 429.9L332.7 431.5L334.1 430.0L338.0 428.2Z" fill="#0000e6"/><path d="M311.6 443.7L307.7 446.2L309.1 447.2L313.0 444.0Z" fill="#b8ff47"/><path d="M386.7 443.0L382.8 439.3L384.3 440.7L388.1 444.5Z" fill="#f9ff06"/><path d="M372.2 431.1L368.3 428.6L369.7 428.9L373.6 431.6Z" fill="#0000e6"/><path d="M363.0 426.9L359.1 425.6L360.5 425.1L364.4 426.6Z" fill="#0000e6"/><path d="M472.4 453.1L468.5 455.5L469.9 455.2L473.9 453.3Z" fill="#37ffc8"/><path d="M406.5 462.1L402.6 458.7L404.1 459.7L408.0 462.8Z" fill="#0000e6"/><path d="M451.4 465.3L447.4 466.8L448.9 464.7L452.8 463.4Z" fill="#0000e6"/><path d="M307.7 446.2L303.7 448.8L305.2 450.3L309.1 447.2Z" fill="#98ff67"/><path d="M332.7 431.5L328.8 433.4L330.2 432.2L334.1 430.0Z" fill="#0000e6"/><path d="M434.2 470.9L430.3 470.7L431.8 469.0L435.7 469.1Z" fill="#0000e6"/><path d="M349.8 425.8L345.9 426.1L347.3 424.8L351.2 424.5Z" fill="#0000e6"/><path d="M392.0 448.4L388.1 444.5L389.6 446.1L393.4 449.9Z" fill="#a8ff57"/><path d="M468.5 455.5L464.6 457.8L466.0 456.9L469.9 455.2Z" fill="#16ffe9"/><path d="M447.4 466.8L443.5 468.0L445.0 465.8L448.9 464.7Z" fill="#0000e6"/><path d="M377.5 434.7L373.6 431.6L375.0 432.5L378.9 435.7Z" fill="#0000e6"/><path d="M328.8 433.4L324.8 435.7L326.3 434.8L330.2 432.2Z" fill="#0000e6"/><path d="M421.1 469.8L417.2 468.0L418.6 467.5L422.5 469.0Z" fill="#0000e6"/><path d="M411.8 465.7L408.0 462.8L409.4 463.3L413.3 465.8Z" fill="#0000e6"/><path d="M397.3 453.8L393.4 449.9L394.9 451.4L398.8 455.1Z" fill="#57ffa8"/><path d="M359.1 425.6L355.2 424.8L356.6 424.1L360.5 425.1Z" fill="#0000e6"/><path d="M464.6 457.8L460.7 459.9L462.1 458.5L466.0 456.9Z" fill="#0000e6"/><path d="M345.9 426.1L342.0 426.9L343.4 425.6L347.3 424.8Z" fill="#0000e6"/><path d="M324.8 435.7L320.9 438.3L322.3 437.8L326.3 434.8Z" fill="#ffa400"/><path d="M368.3 428.6L364.4 426.6L365.8 426.7L369.7 428.9Z" fill="#0000e6"/><path d="M430.3 470.7L426.4 470.1L427.9 468.6L431.8 469.0Z" fill="#0000e6"/><path d="M481.7 449.5L477.8 451.4L479.2 452.3L483.1 451.0Z" fill="#77ff88"/><path d="M382.8 439.3L378.9 435.7L380.4 437.1L384.3 440.7Z" fill="#ffc400"/><path d="M443.5 468.0L439.6 468.8L441.1 466.5L445.0 465.8Z" fill="#0000e6"/><path d="M320.9 438.3L317.0 441.1L318.4 441.0L322.3 437.8Z" fill="#ffd500"/><path d="M402.6 458.7L398.8 455.1L400.2 456.4L404.1 459.7Z" fill="#0000e6"/><path d="M460.7 459.9L456.7 461.8L458.2 460.0L462.1 458.5Z" fill="#0000e6"/><path d="M342.0 426.9L338.0 428.2L339.5 427.0L343.4 425.6Z" fill="#0000e6"/><path d="M317.0 441.1L313.0 444.0L314.5 444.5L318.4 441.0Z" fill="#f9ff06"/><path d="M477.8 451.4L473.9 453.3L475.3 453.5L479.2 452.3Z" fill="#67ff98"/><path d="M388.1 444.5L384.3 440.7L385.7 442.3L389.6 446.1Z" fill="#f9ff06"/><path d="M417.2 468.0L413.3 465.8L414.7 465.7L418.6 467.5Z" fill="#0000e6"/><path d="M355.2 424.8L351.2 424.5L352.7 423.7L356.6 424.1Z" fill="#0000e6"/><path d="M313.0 444.0L309.1 447.2L310.5 448.2L314.5 444.5Z" fill="#c8ff37"/><path d="M373.6 431.6L369.7 428.9L371.2 429.7L375.0 432.5Z" fill="#0000e6"/><path d="M439.6 468.8L435.7 469.1L437.1 466.9L441.1 466.5Z" fill="#0000e6"/><path d="M456.7 461.8L452.8 463.4L454.3 461.2L458.2 460.0Z" fill="#0000e6"/><path d="M426.4 470.1L422.5 469.0L424.0 467.8L427.9 468.6Z" fill="#0000e6"/><path d="M408.0 462.8L404.1 459.7L405.5 460.5L409.4 463.3Z" fill="#0000e6"/><path d="M309.1 447.2L305.2 450.3L306.6 451.9L310.5 448.2Z" fill="#98ff67"/><path d="M338.0 428.2L334.1 430.0L335.6 429.0L339.5 427.0Z" fill="#0000e6"/><path d="M364.4 426.6L360.5 425.1L361.9 425.1L365.8 426.7Z" fill="#0000e6"/><path d="M473.9 453.3L469.9 455.2L471.4 454.7L475.3 453.5Z" fill="#57ffa8"/><path d="M393.4 449.9L389.6 446.1L391.0 447.8L394.9 451.4Z" fill="#a8ff57"/><path d="M452.8 463.4L448.9 464.7L450.3 462.3L454.3 461.2Z" fill="#0000e6"/><path d="M334.1 430.0L330.2 432.2L331.6 431.4L335.6 429.0Z" fill="#0000e6"/><path d="M378.9 435.7L375.0 432.5L376.5 433.9L380.4 437.1Z" fill="#ff7300"/><path d="M351.2 424.5L347.3 424.8L348.8 424.0L352.7 423.7Z" fill="#0000e6"/><path d="M435.7 469.1L431.8 469.0L433.2 466.9L437.1 466.9Z" fill="#0000e6"/><path d="M469.9 455.2L466.0 456.9L467.5 455.9L471.4 454.7Z" fill="#0000e6"/><path d="M398.8 455.1L394.9 451.4L396.3 453.0L400.2 456.4Z" fill="#57ffa8"/><path d="M413.3 465.8L409.4 463.3L410.8 463.5L414.7 465.7Z" fill="#0000e6"/><path d="M330.2 432.2L326.3 434.8L327.7 434.3L331.6 431.4Z" fill="#ff5300"/><path d="M422.5 469.0L418.6 467.5L420.1 466.6L424.0 467.8Z" fill="#0000e6"/><path d="M483.1 451.0L479.2 452.3L480.7 453.1L484.6 452.6Z" fill="#77ff88"/><path d="M369.7 428.9L365.8 426.7L367.3 427.4L371.2 429.7Z" fill="#0000e6"/><path d="M360.5 425.1L356.6 424.1L358.0 424.0L361.9 425.1Z" fill="#0000e6"/><path d="M384.3 440.7L380.4 437.1L381.8 438.8L385.7 442.3Z" fill="#ffc400"/><path d="M448.9 464.7L445.0 465.8L446.4 463.2L450.3 462.3Z" fill="#0000e6"/><path d="M326.3 434.8L322.3 437.8L323.8 437.6L327.7 434.3Z" fill="#ff8400"/><path d="M466.0 456.9L462.1 458.5L463.5 457.0L467.5 455.9Z" fill="#0000e6"/><path d="M347.3 424.8L343.4 425.6L344.9 424.8L348.8 424.0Z" fill="#0000e6"/><path d="M404.1 459.7L400.2 456.4L401.6 457.6L405.5 460.5Z" fill="#0000e6"/><path d="M322.3 437.8L318.4 441.0L319.8 441.3L323.8 437.6Z" fill="#ffb400"/><path d="M431.8 469.0L427.9 468.6L429.3 466.7L433.2 466.9Z" fill="#0000e6"/><path d="M389.6 446.1L385.7 442.3L387.1 444.2L391.0 447.8Z" fill="#f9ff06"/><path d="M318.4 441.0L314.5 444.5L315.9 445.2L319.8 441.3Z" fill="#ffe500"/><path d="M479.2 452.3L475.3 453.5L476.7 453.7L480.7 453.1Z" fill="#77ff88"/><path d="M445.0 465.8L441.1 466.5L442.5 463.9L446.4 463.2Z" fill="#0000e6"/><path d="M314.5 444.5L310.5 448.2L312.0 449.2L315.9 445.2Z" fill="#d9ff26"/><path d="M462.1 458.5L458.2 460.0L459.6 458.0L463.5 457.0Z" fill="#0000e6"/><path d="M375.0 432.5L371.2 429.7L372.6 431.0L376.5 433.9Z" fill="#ff3300"/><path d="M343.4 425.6L339.5 427.0L340.9 426.3L344.9 424.8Z" fill="#0000e6"/><path d="M418.6 467.5L414.7 465.7L416.2 465.2L420.1 466.6Z" fill="#0000e6"/><path d="M310.5 448.2L306.6 451.9L308.0 453.4L312.0 449.2Z" fill="#98ff67"/><path d="M356.6 424.1L352.7 423.7L354.1 423.6L358.0 424.0Z" fill="#0000e6"/><path d="M394.9 451.4L391.0 447.8L392.4 449.6L396.3 453.0Z" fill="#a8ff57"/><path d="M409.4 463.3L405.5 460.5L406.9 461.2L410.8 463.5Z" fill="#0000e6"/><path d="M365.8 426.7L361.9 425.1L363.4 425.7L367.3 427.4Z" fill="#e10000"/><path d="M475.3 453.5L471.4 454.7L472.8 454.2L476.7 453.7Z" fill="#77ff88"/><path d="M427.9 468.6L424.0 467.8L425.4 466.2L429.3 466.7Z" fill="#0000e6"/><path d="M339.5 427.0L335.6 429.0L337.0 428.4L340.9 426.3Z" fill="#f10000"/><path d="M458.2 460.0L454.3 461.2L455.7 458.9L459.6 458.0Z" fill="#0000e6"/><path d="M380.4 437.1L376.5 433.9L377.9 435.6L381.8 438.8Z" fill="#ff7300"/><path d="M441.1 466.5L437.1 466.9L438.6 464.3L442.5 463.9Z" fill="#0000e6"/><path d="M400.2 456.4L396.3 453.0L397.7 454.5L401.6 457.6Z" fill="#57ffa8"/><path d="M335.6 429.0L331.6 431.4L333.1 431.0L337.0 428.4Z" fill="#ff1200"/><path d="M352.7 423.7L348.8 424.0L350.2 423.8L354.1 423.6Z" fill="#0000e6"/><path d="M385.7 442.3L381.8 438.8L383.2 440.8L387.1 444.2Z" fill="#ffc400"/><path d="M471.4 454.7L467.5 455.9L468.9 454.8L472.8 454.2Z" fill="#0000e6"/><path d="M484.6 452.6L480.7 453.1L482.1 453.9L486.0 454.1Z" fill="#88ff77"/><path d="M454.3 461.2L450.3 462.3L451.8 459.7L455.7 458.9Z" fill="#0000e6"/><path d="M371.2 429.7L367.3 427.4L368.7 428.7L372.6 431.0Z" fill="#ff0200"/><path d="M414.7 465.7L410.8 463.5L412.3 463.5L416.2 465.2Z" fill="#0000e6"/><path d="M331.6 431.4L327.7 434.3L329.1 434.2L333.1 431.0Z" fill="#ff3300"/><path d="M361.9 425.1L358.0 424.0L359.5 424.5L363.4 425.7Z" fill="#b00000"/><path d="M437.1 466.9L433.2 466.9L434.7 464.6L438.6 464.3Z" fill="#0000e6"/><path d="M424.0 467.8L420.1 466.6L421.5 465.5L425.4 466.2Z" fill="#0000e6"/><path d="M405.5 460.5L401.6 457.6L403.0 458.6L406.9 461.2Z" fill="#0000e6"/><path d="M327.7 434.3L323.8 437.6L325.2 437.8L329.1 434.2Z" fill="#ff6300"/><path d="M391.0 447.8L387.1 444.2L388.5 446.2L392.4 449.6Z" fill="#e9ff16"/><path d="M348.8 424.0L344.9 424.8L346.3 424.7L350.2 423.8Z" fill="#b00000"/><path d="M323.8 437.6L319.8 441.3L321.3 441.7L325.2 437.8Z" fill="#ffa400"/><path d="M467.5 455.9L463.5 457.0L465.0 455.3L468.9 454.8Z" fill="#0000e6"/><path d="M450.3 462.3L446.4 463.2L447.9 460.4L451.8 459.7Z" fill="#0000e6"/><path d="M319.8 441.3L315.9 445.2L317.3 446.0L321.3 441.7Z" fill="#ffd500"/><path d="M376.5 433.9L372.6 431.0L374.0 432.8L377.9 435.6Z" fill="#ff3300"/><path d="M480.7 453.1L476.7 453.7L478.2 453.8L482.1 453.9Z" fill="#88ff77"/><path d="M315.9 445.2L312.0 449.2L313.4 450.4L317.3 446.0Z" fill="#e9ff16"/><path d="M312.0 449.2L308.0 453.4L309.5 454.9L313.4 450.4Z" fill="#a8ff57"/><path d="M396.3 453.0L392.4 449.6L393.8 451.5L397.7 454.5Z" fill="#a8ff57"/><path d="M433.2 466.9L429.3 466.7L430.8 464.6L434.7 464.6Z" fill="#0000e6"/><path d="M344.9 424.8L340.9 426.3L342.4 426.2L346.3 424.7Z" fill="#b00000"/><path d="M358.0 424.0L354.1 423.6L355.6 424.1L359.5 424.5Z" fill="#a00000"/><path d="M410.8 463.5L406.9 461.2L408.4 461.6L412.3 463.5Z" fill="#0000e6"/><path d="M367.3 427.4L363.4 425.7L364.8 426.9L368.7 428.7Z" fill="#d00000"/><path d="M420.1 466.6L416.2 465.2L417.6 464.5L421.5 465.5Z" fill="#0000e6"/><path d="M463.5 457.0L459.6 458.0L461.1 455.9L465.0 455.3Z" fill="#0000e6"/><path d="M381.8 438.8L377.9 435.6L379.3 437.7L383.2 440.8Z" fill="#ff8400"/><path d="M446.4 463.2L442.5 463.9L444.0 461.1L447.9 460.4Z" fill="#0000e6"/><path d="M476.7 453.7L472.8 454.2L474.3 453.7L478.2 453.8Z" fill="#0000e6"/><path d="M401.6 457.6L397.7 454.5L399.1 456.0L403.0 458.6Z" fill="#67ff98"/><path d="M340.9 426.3L337.0 428.4L338.4 428.4L342.4 426.2Z" fill="#d00000"/><path d="M387.1 444.2L383.2 440.8L384.6 443.1L388.5 446.2Z" fill="#ffc400"/><path d="M429.3 466.7L425.4 466.2L426.9 464.4L430.8 464.6Z" fill="#0000e6"/><path d="M354.1 423.6L350.2 423.8L351.6 424.3L355.6 424.1Z" fill="#900000"/><path d="M459.6 458.0L455.7 458.9L457.2 456.5L461.1 455.9Z" fill="#0000e6"/><path d="M486.0 454.1L482.1 453.9L483.5 454.8L487.4 455.6Z" fill="#88ff77"/><path d="M372.6 431.0L368.7 428.7L370.1 430.5L374.0 432.8Z" fill="#ff0200"/><path d="M337.0 428.4L333.1 431.0L334.5 431.2L338.4 428.4Z" fill="#f10000"/><path d="M442.5 463.9L438.6 464.3L440.1 461.6L444.0 461.1Z" fill="#0000e6"/><path d="M363.4 425.7L359.5 424.5L360.9 425.7L364.8 426.9Z" fill="#b00000"/><path d="M472.8 454.2L468.9 454.8L470.4 453.7L474.3 453.7Z" fill="#0000e6"/><path d="M392.4 449.6L388.5 446.2L389.9 448.5L393.8 451.5Z" fill="#e9ff16"/><path d="M416.2 465.2L412.3 463.5L413.7 463.3L417.6 464.5Z" fill="#0000e6"/><path d="M333.1 431.0L329.1 434.2L330.6 434.5L334.5 431.2Z" fill="#ff2200"/><path d="M406.9 461.2L403.0 458.6L404.5 459.6L408.4 461.6Z" fill="#0000e6"/><path d="M329.1 434.2L325.2 437.8L326.6 438.3L330.6 434.5Z" fill="#ff5300"/><path d="M377.9 435.6L374.0 432.8L375.4 435.1L379.3 437.7Z" fill="#ff4300"/><path d="M455.7 458.9L451.8 459.7L453.3 457.0L457.2 456.5Z" fill="#0000e6"/><path d="M350.2 423.8L346.3 424.7L347.7 425.2L351.6 424.3Z" fill="#900000"/><path d="M325.2 437.8L321.3 441.7L322.7 442.5L326.6 438.3Z" fill="#ff8400"/><path d="M425.4 466.2L421.5 465.5L423.0 464.1L426.9 464.4Z" fill="#0000e6"/><path d="M321.3 441.7L317.3 446.0L318.8 447.0L322.7 442.5Z" fill="#ffc400"/><path d="M438.6 464.3L434.7 464.6L436.1 461.9L440.1 461.6Z" fill="#0000e6"/><path d="M317.3 446.0L313.4 450.4L314.8 451.7L318.8 447.0Z" fill="#e9ff16"/><path d="M397.7 454.5L393.8 451.5L395.3 453.4L399.1 456.0Z" fill="#98ff67"/><path d="M482.1 453.9L478.2 453.8L479.6 454.0L483.5 454.8Z" fill="#98ff67"/><path d="M313.4 450.4L309.5 454.9L310.9 456.5L314.8 451.7Z" fill="#a8ff57"/><path d="M468.9 454.8L465.0 455.3L466.4 453.7L470.4 453.7Z" fill="#0000e6"/><path d="M383.2 440.8L379.3 437.7L380.7 440.3L384.6 443.1Z" fill="#ff8400"/><path d="M368.7 428.7L364.8 426.9L366.2 428.7L370.1 430.5Z" fill="#d00000"/><path d="M359.5 424.5L355.6 424.1L357.0 425.2L360.9 425.7Z" fill="#900000"/><path d="M346.3 424.7L342.4 426.2L343.8 426.8L347.7 425.2Z" fill="#a00000"/><path d="M451.8 459.7L447.9 460.4L449.3 457.6L453.3 457.0Z" fill="#0000e6"/><path d="M412.3 463.5L408.4 461.6L409.8 462.0L413.7 463.3Z" fill="#0000e6"/><path d="M403.0 458.6L399.1 456.0L400.6 457.6L404.5 459.6Z" fill="#67ff98"/><path d="M434.7 464.6L430.8 464.6L432.2 462.2L436.1 461.9Z" fill="#0000e6"/><path d="M388.5 446.2L384.6 443.1L386.1 445.7L389.9 448.5Z" fill="#ffd500"/><path d="M421.5 465.5L417.6 464.5L419.0 463.6L423.0 464.1Z" fill="#0000e6"/><path d="M478.2 453.8L474.3 453.7L475.7 453.3L479.6 454.0Z" fill="#0000e6"/><path d="M342.4 426.2L338.4 428.4L339.9 429.0L343.8 426.8Z" fill="#b00000"/><path d="M465.0 455.3L461.1 455.9L462.5 453.8L466.4 453.7Z" fill="#0000e6"/><path d="M374.0 432.8L370.1 430.5L371.5 432.9L375.4 435.1Z" fill="#ff0200"/><path d="M487.4 455.6L483.5 454.8L484.9 455.7L488.8 457.1Z" fill="#88ff77"/><path d="M355.6 424.1L351.6 424.3L353.1 425.4L357.0 425.2Z" fill="#800000"/><path d="M447.9 460.4L444.0 461.1L445.4 458.1L449.3 457.6Z" fill="#0000e6"/><path d="M393.8 451.5L389.9 448.5L391.4 450.9L395.3 453.4Z" fill="#d9ff26"/><path d="M338.4 428.4L334.5 431.2L336.0 431.9L339.9 429.0Z" fill="#e10000"/><path d="M364.8 426.9L360.9 425.7L362.3 427.6L366.2 428.7Z" fill="#b00000"/><path d="M430.8 464.6L426.9 464.4L428.3 462.4L432.2 462.2Z" fill="#0000e6"/><path d="M379.3 437.7L375.4 435.1L376.9 437.8L380.7 440.3Z" fill="#ff5300"/><path d="M334.5 431.2L330.6 434.5L332.0 435.3L336.0 431.9Z" fill="#ff0200"/><path d="M408.4 461.6L404.5 459.6L405.9 460.6L409.8 462.0Z" fill="#47ffb8"/><path d="M461.1 455.9L457.2 456.5L458.6 454.0L462.5 453.8Z" fill="#0000e6"/><path d="M417.6 464.5L413.7 463.3L415.1 463.0L419.0 463.6Z" fill="#0000e6"/><path d="M474.3 453.7L470.4 453.7L471.8 452.7L475.7 453.3Z" fill="#0000e6"/><path d="M330.6 434.5L326.6 438.3L328.1 439.2L332.0 435.3Z" fill="#ff4300"/><path d="M351.6 424.3L347.7 425.2L349.2 426.4L353.1 425.4Z" fill="#800000"/><path d="M399.1 456.0L395.3 453.4L396.7 455.5L400.6 457.6Z" fill="#98ff67"/><path d="M326.6 438.3L322.7 442.5L324.1 443.5L328.1 439.2Z" fill="#ff8400"/><path d="M444.0 461.1L440.1 461.6L441.5 458.7L445.4 458.1Z" fill="#0000e6"/><path d="M322.7 442.5L318.8 447.0L320.2 448.2L324.1 443.5Z" fill="#ffc400"/><path d="M314.8 451.7L310.9 456.5L312.3 458.0L316.3 453.0Z" fill="#a8ff57"/><path d="M318.8 447.0L314.8 451.7L316.3 453.0L320.2 448.2Z" fill="#f9ff06"/><path d="M384.6 443.1L380.7 440.3L382.2 443.2L386.1 445.7Z" fill="#ffa400"/><path d="M483.5 454.8L479.6 454.0L481.0 454.3L484.9 455.7Z" fill="#a8ff57"/><path d="M370.1 430.5L366.2 428.7L367.6 431.2L371.5 432.9Z" fill="#e10000"/><path d="M360.9 425.7L357.0 425.2L358.4 427.1L362.3 427.6Z" fill="#900000"/><path d="M426.9 464.4L423.0 464.1L424.4 462.5L428.3 462.4Z" fill="#0000e6"/><path d="M457.2 456.5L453.3 457.0L454.7 454.3L458.6 454.0Z" fill="#0000e6"/><path d="M347.7 425.2L343.8 426.8L345.2 428.0L349.2 426.4Z" fill="#900000"/><path d="M389.9 448.5L386.1 445.7L387.5 448.6L391.4 450.9Z" fill="#ffe500"/><path d="M470.4 453.7L466.4 453.7L467.9 452.2L471.8 452.7Z" fill="#0000e6"/><path d="M440.1 461.6L436.1 461.9L437.6 459.2L441.5 458.7Z" fill="#0000e6"/><path d="M404.5 459.6L400.6 457.6L402.0 459.1L405.9 460.6Z" fill="#67ff98"/><path d="M413.7 463.3L409.8 462.0L411.2 462.2L415.1 463.0Z" fill="#0000e6"/><path d="M375.4 435.1L371.5 432.9L373.0 435.8L376.9 437.8Z" fill="#ff2200"/><path d="M343.8 426.8L339.9 429.0L341.3 430.2L345.2 428.0Z" fill="#b00000"/><path d="M395.3 453.4L391.4 450.9L392.8 453.5L396.7 455.5Z" fill="#c8ff37"/><path d="M479.6 454.0L475.7 453.3L477.1 452.9L481.0 454.3Z" fill="#0000e6"/><path d="M357.0 425.2L353.1 425.4L354.5 427.3L358.4 427.1Z" fill="#800000"/><path d="M488.8 457.1L484.9 455.7L486.4 456.6L490.3 458.7Z" fill="#98ff67"/><path d="M366.2 428.7L362.3 427.6L363.7 430.1L367.6 431.2Z" fill="#b00000"/><path d="M453.3 457.0L449.3 457.6L450.8 454.7L454.7 454.3Z" fill="#0000e6"/><path d="M423.0 464.1L419.0 463.6L420.5 462.6L424.4 462.5Z" fill="#0000e6"/><path d="M380.7 440.3L376.9 437.8L378.3 441.0L382.2 443.2Z" fill="#ff6300"/><path d="M339.9 429.0L336.0 431.9L337.4 433.1L341.3 430.2Z" fill="#d00000"/><path d="M436.1 461.9L432.2 462.2L433.7 459.8L437.6 459.2Z" fill="#0000e6"/><path d="M466.4 453.7L462.5 453.8L464.0 451.8L467.9 452.2Z" fill="#0000e6"/><path d="M336.0 431.9L332.0 435.3L333.4 436.6L337.4 433.1Z" fill="#ff0200"/><path d="M409.8 462.0L405.9 460.6L407.3 461.4L411.2 462.2Z" fill="#57ffa8"/><path d="M386.1 445.7L382.2 443.2L383.6 446.4L387.5 448.6Z" fill="#ffb400"/><path d="M400.6 457.6L396.7 455.5L398.1 457.6L402.0 459.1Z" fill="#98ff67"/><path d="M332.0 435.3L328.1 439.2L329.5 440.5L333.4 436.6Z" fill="#ff3300"/><path d="M353.1 425.4L349.2 426.4L350.6 428.2L354.5 427.3Z" fill="#800000"/><path d="M371.5 432.9L367.6 431.2L369.1 434.2L373.0 435.8Z" fill="#f10000"/><path d="M449.3 457.6L445.4 458.1L446.9 455.2L450.8 454.7Z" fill="#0000e6"/><path d="M328.1 439.2L324.1 443.5L325.6 444.9L329.5 440.5Z" fill="#ff7300"/><path d="M316.3 453.0L312.3 458.0L313.7 459.5L317.7 454.5Z" fill="#a8ff57"/><path d="M324.1 443.5L320.2 448.2L321.6 449.6L325.6 444.9Z" fill="#ffc400"/><path d="M320.2 448.2L316.3 453.0L317.7 454.5L321.6 449.6Z" fill="#f9ff06"/><path d="M419.0 463.6L415.1 463.0L416.6 462.5L420.5 462.6Z" fill="#0000e6"/><path d="M475.7 453.3L471.8 452.7L473.2 451.8L477.1 452.9Z" fill="#0000e6"/><path d="M362.3 427.6L358.4 427.1L359.8 429.7L363.7 430.1Z" fill="#a00000"/><path d="M432.2 462.2L428.3 462.4L429.8 460.3L433.7 459.8Z" fill="#0000e6"/><path d="M484.9 455.7L481.0 454.3L482.5 454.6L486.4 456.6Z" fill="#b8ff47"/><path d="M462.5 453.8L458.6 454.0L460.1 451.7L464.0 451.8Z" fill="#0000e6"/><path d="M391.4 450.9L387.5 448.6L388.9 451.6L392.8 453.5Z" fill="#f9ff06"/><path d="M349.2 426.4L345.2 428.0L346.7 429.8L350.6 428.2Z" fill="#900000"/><path d="M376.9 437.8L373.0 435.8L374.4 439.2L378.3 441.0Z" fill="#ff3300"/><path d="M445.4 458.1L441.5 458.7L443.0 455.8L446.9 455.2Z" fill="#0000e6"/><path d="M405.9 460.6L402.0 459.1L403.4 460.6L407.3 461.4Z" fill="#77ff88"/><path d="M428.3 462.4L424.4 462.5L425.9 460.9L429.8 460.3Z" fill="#0000e6"/><path d="M367.6 431.2L363.7 430.1L365.2 433.3L369.1 434.2Z" fill="#d00000"/><path d="M396.7 455.5L392.8 453.5L394.2 456.2L398.1 457.6Z" fill="#b8ff47"/><path d="M345.2 428.0L341.3 430.2L342.7 432.1L346.7 429.8Z" fill="#b00000"/><path d="M415.1 463.0L411.2 462.2L412.7 462.4L416.6 462.5Z" fill="#0000e6"/><path d="M382.2 443.2L378.3 441.0L379.7 444.6L383.6 446.4Z" fill="#ff8400"/><path d="M358.4 427.1L354.5 427.3L355.9 429.9L359.8 429.7Z" fill="#900000"/><path d="M471.8 452.7L467.9 452.2L469.3 450.8L473.2 451.8Z" fill="#0000e6"/><path d="M458.6 454.0L454.7 454.3L456.2 451.7L460.1 451.7Z" fill="#0000e6"/><path d="M490.3 458.7L486.4 456.6L487.8 457.6L491.7 460.2Z" fill="#98ff67"/><path d="M341.3 430.2L337.4 433.1L338.8 434.9L342.7 432.1Z" fill="#d00000"/><path d="M481.0 454.3L477.1 452.9L478.6 452.7L482.5 454.6Z" fill="#0000e6"/><path d="M441.5 458.7L437.6 459.2L439.1 456.5L443.0 455.8Z" fill="#0000e6"/><path d="M387.5 448.6L383.6 446.4L385.0 449.9L388.9 451.6Z" fill="#ffd500"/><path d="M373.0 435.8L369.1 434.2L370.5 437.9L374.4 439.2Z" fill="#ff1200"/><path d="M337.4 433.1L333.4 436.6L334.9 438.4L338.8 434.9Z" fill="#ff0200"/><path d="M424.4 462.5L420.5 462.6L421.9 461.5L425.9 460.9Z" fill="#0000e6"/><path d="M354.5 427.3L350.6 428.2L352.0 430.8L355.9 429.9Z" fill="#900000"/><path d="M402.0 459.1L398.1 457.6L399.5 459.8L403.4 460.6Z" fill="#88ff77"/><path d="M333.4 436.6L329.5 440.5L330.9 442.3L334.9 438.4Z" fill="#ff3300"/><path d="M411.2 462.2L407.3 461.4L408.8 462.3L412.7 462.4Z" fill="#67ff98"/><path d="M363.7 430.1L359.8 429.7L361.2 432.9L365.2 433.3Z" fill="#b00000"/><path d="M454.7 454.3L450.8 454.7L452.3 451.9L456.2 451.7Z" fill="#0000e6"/><path d="M329.5 440.5L325.6 444.9L327.0 446.6L330.9 442.3Z" fill="#ff7300"/><path d="M317.7 454.5L313.7 459.5L315.2 461.0L319.1 456.1Z" fill="#a8ff57"/><path d="M325.6 444.9L321.6 449.6L323.0 451.2L327.0 446.6Z" fill="#ffc400"/><path d="M321.6 449.6L317.7 454.5L319.1 456.1L323.0 451.2Z" fill="#f9ff06"/><path d="M467.9 452.2L464.0 451.8L465.4 450.0L469.3 450.8Z" fill="#0000e6"/><path d="M392.8 453.5L388.9 451.6L390.3 454.9L394.2 456.2Z" fill="#e9ff16"/><path d="M437.6 459.2L433.7 459.8L435.1 457.4L439.1 456.5Z" fill="#0000e6"/><path d="M378.3 441.0L374.4 439.2L375.8 443.1L379.7 444.6Z" fill="#ff5300"/><path d="M350.6 428.2L346.7 429.8L348.1 432.3L352.0 430.8Z" fill="#a00000"/><path d="M486.4 456.6L482.5 454.6L483.9 455.1L487.8 457.6Z" fill="#0000e6"/><path d="M477.1 452.9L473.2 451.8L474.7 451.1L478.6 452.7Z" fill="#0000e6"/><path d="M420.5 462.6L416.6 462.5L418.0 462.0L421.9 461.5Z" fill="#0000e6"/><path d="M383.6 446.4L379.7 444.6L381.1 448.5L385.0 449.9Z" fill="#ffa400"/><path d="M369.1 434.2L365.2 433.3L366.6 437.0L370.5 437.9Z" fill="#f10000"/><path d="M450.8 454.7L446.9 455.2L448.3 452.4L452.3 451.9Z" fill="#0000e6"/><path d="M359.8 429.7L355.9 429.9L357.3 433.1L361.2 432.9Z" fill="#b00000"/><path d="M398.1 457.6L394.2 456.2L395.6 459.0L399.5 459.8Z" fill="#a8ff57"/><path d="M407.3 461.4L403.4 460.6L404.9 462.2L408.8 462.3Z" fill="#77ff88"/><path d="M433.7 459.8L429.8 460.3L431.2 458.3L435.1 457.4Z" fill="#0000e6"/><path d="M346.7 429.8L342.7 432.1L344.2 434.5L348.1 432.3Z" fill="#b00000"/><path d="M464.0 451.8L460.1 451.7L461.5 449.5L465.4 450.0Z" fill="#0000e6"/><path d="M388.9 451.6L385.0 449.9L386.4 453.7L390.3 454.9Z" fill="#fff500"/><path d="M374.4 439.2L370.5 437.9L371.9 442.0L375.8 443.1Z" fill="#ff3300"/><path d="M491.7 460.2L487.8 457.6L489.2 458.7L493.1 461.7Z" fill="#98ff67"/><path d="M342.7 432.1L338.8 434.9L340.2 437.3L344.2 434.5Z" fill="#e10000"/><path d="M416.6 462.5L412.7 462.4L414.1 462.6L418.0 462.0Z" fill="#0000e6"/><path d="M446.9 455.2L443.0 455.8L444.4 453.0L448.3 452.4Z" fill="#0000e6"/><path d="M355.9 429.9L352.0 430.8L353.4 434.0L357.3 433.1Z" fill="#b00000"/><path d="M429.8 460.3L425.9 460.9L427.3 459.3L431.2 458.3Z" fill="#0000e6"/><path d="M473.2 451.8L469.3 450.8L470.8 449.6L474.7 451.1Z" fill="#0000e6"/><path d="M338.8 434.9L334.9 438.4L336.3 440.6L340.2 437.3Z" fill="#ff0200"/><path d="M365.2 433.3L361.2 432.9L362.7 436.7L366.6 437.0Z" fill="#e10000"/><path d="M482.5 454.6L478.6 452.7L480.0 452.7L483.9 455.1Z" fill="#0000e6"/><path d="M403.4 460.6L399.5 459.8L400.9 462.0L404.9 462.2Z" fill="#88ff77"/><path d="M379.7 444.6L375.8 443.1L377.2 447.4L381.1 448.5Z" fill="#ff8400"/><path d="M334.9 438.4L330.9 442.3L332.4 444.4L336.3 440.6Z" fill="#ff4300"/><path d="M460.1 451.7L456.2 451.7L457.6 449.3L461.5 449.5Z" fill="#0000e6"/><path d="M394.2 456.2L390.3 454.9L391.7 458.3L395.6 459.0Z" fill="#c8ff37"/><path d="M330.9 442.3L327.0 446.6L328.4 448.6L332.4 444.4Z" fill="#ff8400"/><path d="M327.0 446.6L323.0 451.2L324.5 453.1L328.4 448.6Z" fill="#ffc400"/><path d="M319.1 456.1L315.2 461.0L316.6 462.6L320.5 457.8Z" fill="#a8ff57"/><path d="M323.0 451.2L319.1 456.1L320.5 457.8L324.5 453.1Z" fill="#f9ff06"/><path d="M412.7 462.4L408.8 462.3L410.2 463.1L414.1 462.6Z" fill="#77ff88"/><path d="M352.0 430.8L348.1 432.3L349.5 435.5L353.4 434.0Z" fill="#b00000"/><path d="M443.0 455.8L439.1 456.5L440.5 453.9L444.4 453.0Z" fill="#0000e6"/><path d="M425.9 460.9L421.9 461.5L423.4 460.4L427.3 459.3Z" fill="#0000e6"/><path d="M370.5 437.9L366.6 437.0L368.0 441.3L371.9 442.0Z" fill="#ff2200"/><path d="M385.0 449.9L381.1 448.5L382.5 452.7L386.4 453.7Z" fill="#ffd500"/><path d="M361.2 432.9L357.3 433.1L358.7 437.0L362.7 436.7Z" fill="#d00000"/><path d="M487.8 457.6L483.9 455.1L485.3 455.7L489.2 458.7Z" fill="#0000e6"/><path d="M469.3 450.8L465.4 450.0L466.9 448.5L470.8 449.6Z" fill="#0000e6"/><path d="M399.5 459.8L395.6 459.0L397.0 461.9L400.9 462.0Z" fill="#98ff67"/><path d="M456.2 451.7L452.3 451.9L453.7 449.4L457.6 449.3Z" fill="#0000e6"/><path d="M348.1 432.3L344.2 434.5L345.6 437.6L349.5 435.5Z" fill="#d00000"/><path d="M375.8 443.1L371.9 442.0L373.3 446.5L377.2 447.4Z" fill="#ff6300"/><path d="M478.6 452.7L474.7 451.1L476.1 450.6L480.0 452.7Z" fill="#0000e6"/><path d="M439.1 456.5L435.1 457.4L436.6 455.0L440.5 453.9Z" fill="#0000e6"/><path d="M390.3 454.9L386.4 453.7L387.8 457.7L391.7 458.3Z" fill="#e9ff16"/><path d="M408.8 462.3L404.9 462.2L406.3 463.7L410.2 463.1Z" fill="#77ff88"/><path d="M421.9 461.5L418.0 462.0L419.5 461.5L423.4 460.4Z" fill="#0000e6"/><path d="M344.2 434.5L340.2 437.3L341.6 440.2L345.6 437.6Z" fill="#f10000"/><path d="M366.6 437.0L362.7 436.7L364.1 441.1L368.0 441.3Z" fill="#ff0200"/><path d="M357.3 433.1L353.4 434.0L354.8 437.9L358.7 437.0Z" fill="#d00000"/><path d="M381.1 448.5L377.2 447.4L378.6 452.0L382.5 452.7Z" fill="#ffb400"/><path d="M493.1 461.7L489.2 458.7L490.7 459.9L494.6 463.3Z" fill="#a8ff57"/><path d="M340.2 437.3L336.3 440.6L337.7 443.4L341.6 440.2Z" fill="#ff2200"/><path d="M452.3 451.9L448.3 452.4L449.8 449.8L453.7 449.4Z" fill="#0000e6"/><path d="M435.1 457.4L431.2 458.3L432.7 456.3L436.6 455.0Z" fill="#0000e6"/><path d="M465.4 450.0L461.5 449.5L463.0 447.6L466.9 448.5Z" fill="#0000e6"/><path d="M395.6 459.0L391.7 458.3L393.1 461.8L397.0 461.9Z" fill="#a8ff57"/><path d="M418.0 462.0L414.1 462.6L415.5 462.7L419.5 461.5Z" fill="#88ff77"/><path d="M336.3 440.6L332.4 444.4L333.8 447.0L337.7 443.4Z" fill="#ff5300"/><path d="M404.9 462.2L400.9 462.0L402.4 464.2L406.3 463.7Z" fill="#88ff77"/><path d="M371.9 442.0L368.0 441.3L369.4 446.1L373.3 446.5Z" fill="#ff5300"/><path d="M332.4 444.4L328.4 448.6L329.8 450.9L333.8 447.0Z" fill="#ff8400"/><path d="M353.4 434.0L349.5 435.5L350.9 439.3L354.8 437.9Z" fill="#e10000"/><path d="M386.4 453.7L382.5 452.7L383.9 457.2L387.8 457.7Z" fill="#f9ff06"/><path d="M483.9 455.1L480.0 452.7L481.5 452.9L485.3 455.7Z" fill="#0000e6"/><path d="M328.4 448.6L324.5 453.1L325.9 455.1L329.8 450.9Z" fill="#ffc400"/><path d="M324.5 453.1L320.5 457.8L322.0 459.6L325.9 455.1Z" fill="#e9ff16"/><path d="M474.7 451.1L470.8 449.6L472.2 448.7L476.1 450.6Z" fill="#0000e6"/><path d="M320.5 457.8L316.6 462.6L318.0 464.1L322.0 459.6Z" fill="#a8ff57"/><path d="M362.7 436.7L358.7 437.0L360.1 441.5L364.1 441.1Z" fill="#ff0200"/><path d="M431.2 458.3L427.3 459.3L428.7 457.7L432.7 456.3Z" fill="#0000e6"/><path d="M448.3 452.4L444.4 453.0L445.9 450.5L449.8 449.8Z" fill="#0000e6"/><path d="M377.2 447.4L373.3 446.5L374.7 451.5L378.6 452.0Z" fill="#ffa400"/><path d="M414.1 462.6L410.2 463.1L411.6 464.0L415.5 462.7Z" fill="#88ff77"/><path d="M349.5 435.5L345.6 437.6L347.0 441.2L350.9 439.3Z" fill="#f10000"/><path d="M391.7 458.3L387.8 457.7L389.2 461.8L393.1 461.8Z" fill="#b8ff47"/><path d="M461.5 449.5L457.6 449.3L459.1 447.2L463.0 447.6Z" fill="#0000e6"/><path d="M400.9 462.0L397.0 461.9L398.5 464.8L402.4 464.2Z" fill="#88ff77"/><path d="M368.0 441.3L364.1 441.1L365.5 446.0L369.4 446.1Z" fill="#ff4300"/><path d="M489.2 458.7L485.3 455.7L486.8 456.5L490.7 459.9Z" fill="#0000e6"/><path d="M427.3 459.3L423.4 460.4L424.8 459.3L428.7 457.7Z" fill="#0000e6"/><path d="M358.7 437.0L354.8 437.9L356.2 442.3L360.1 441.5Z" fill="#ff0200"/><path d="M382.5 452.7L378.6 452.0L380.0 456.8L383.9 457.2Z" fill="#ffe500"/><path d="M345.6 437.6L341.6 440.2L343.1 443.6L347.0 441.2Z" fill="#ff1200"/><path d="M444.4 453.0L440.5 453.9L442.0 451.5L445.9 450.5Z" fill="#0000e6"/><path d="M410.2 463.1L406.3 463.7L407.7 465.2L411.6 464.0Z" fill="#88ff77"/><path d="M470.8 449.6L466.9 448.5L468.3 447.2L472.2 448.7Z" fill="#0000e6"/><path d="M480.0 452.7L476.1 450.6L477.6 450.4L481.5 452.9Z" fill="#0000e6"/><path d="M341.6 440.2L337.7 443.4L339.1 446.6L343.1 443.6Z" fill="#ff3300"/><path d="M373.3 446.5L369.4 446.1L370.8 451.2L374.7 451.5Z" fill="#ff8400"/><path d="M397.0 461.9L393.1 461.8L394.5 465.4L398.5 464.8Z" fill="#88ff77"/><path d="M494.6 463.3L490.7 459.9L492.1 461.1L496.0 464.8Z" fill="#a8ff57"/><path d="M423.4 460.4L419.5 461.5L420.9 461.1L424.8 459.3Z" fill="#0000e6"/><path d="M457.6 449.3L453.7 449.4L455.2 447.1L459.1 447.2Z" fill="#0000e6"/><path d="M387.8 457.7L383.9 457.2L385.3 461.8L389.2 461.8Z" fill="#c8ff37"/><path d="M354.8 437.9L350.9 439.3L352.3 443.5L356.2 442.3Z" fill="#ff0200"/><path d="M337.7 443.4L333.8 447.0L335.2 449.9L339.1 446.6Z" fill="#ff6300"/><path d="M364.1 441.1L360.1 441.5L361.6 446.4L365.5 446.0Z" fill="#ff3300"/><path d="M440.5 453.9L436.6 455.0L438.0 452.9L442.0 451.5Z" fill="#0000e6"/><path d="M333.8 447.0L329.8 450.9L331.3 453.5L335.2 449.9Z" fill="#ffa400"/><path d="M406.3 463.7L402.4 464.2L403.8 466.5L407.7 465.2Z" fill="#77ff88"/><path d="M378.6 452.0L374.7 451.5L376.1 456.7L380.0 456.8Z" fill="#ffd500"/><path d="M329.8 450.9L325.9 455.1L327.3 457.4L331.3 453.5Z" fill="#ffd500"/><path d="M325.9 455.1L322.0 459.6L323.4 461.5L327.3 457.4Z" fill="#e9ff16"/><path d="M419.5 461.5L415.5 462.7L417.0 462.9L420.9 461.1Z" fill="#a8ff57"/><path d="M350.9 439.3L347.0 441.2L348.4 445.3L352.3 443.5Z" fill="#ff2200"/><path d="M322.0 459.6L318.0 464.1L319.4 465.6L323.4 461.5Z" fill="#a8ff57"/><path d="M485.3 455.7L481.5 452.9L482.9 453.4L486.8 456.5Z" fill="#0000e6"/><path d="M369.4 446.1L365.5 446.0L366.9 451.3L370.8 451.2Z" fill="#ff8400"/><path d="M393.1 461.8L389.2 461.8L390.6 465.9L394.5 465.4Z" fill="#98ff67"/><path d="M466.9 448.5L463.0 447.6L464.4 446.1L468.3 447.2Z" fill="#0000e6"/><path d="M436.6 455.0L432.7 456.3L434.1 454.5L438.0 452.9Z" fill="#0000e6"/><path d="M453.7 449.4L449.8 449.8L451.2 447.5L455.2 447.1Z" fill="#0000e6"/><path d="M360.1 441.5L356.2 442.3L357.6 447.1L361.6 446.4Z" fill="#ff3300"/><path d="M383.9 457.2L380.0 456.8L381.4 461.9L385.3 461.8Z" fill="#d9ff26"/><path d="M402.4 464.2L398.5 464.8L399.9 467.7L403.8 466.5Z" fill="#77ff88"/><path d="M476.1 450.6L472.2 448.7L473.7 448.2L477.6 450.4Z" fill="#0000e6"/><path d="M347.0 441.2L343.1 443.6L344.5 447.5L348.4 445.3Z" fill="#ff3300"/><path d="M415.5 462.7L411.6 464.0L413.1 464.8L417.0 462.9Z" fill="#98ff67"/><path d="M374.7 451.5L370.8 451.2L372.2 456.7L376.1 456.7Z" fill="#ffc400"/><path d="M432.7 456.3L428.7 457.7L430.2 456.3L434.1 454.5Z" fill="#0000e6"/><path d="M490.7 459.9L486.8 456.5L488.2 457.5L492.1 461.1Z" fill="#0000e6"/><path d="M343.1 443.6L339.1 446.6L340.5 450.1L344.5 447.5Z" fill="#ff5300"/><path d="M365.5 446.0L361.6 446.4L363.0 451.7L366.9 451.3Z" fill="#ff7300"/><path d="M356.2 442.3L352.3 443.5L353.7 448.3L357.6 447.1Z" fill="#ff4300"/><path d="M389.2 461.8L385.3 461.8L386.7 466.5L390.6 465.9Z" fill="#98ff67"/><path d="M449.8 449.8L445.9 450.5L447.3 448.3L451.2 447.5Z" fill="#0000e6"/><path d="M398.5 464.8L394.5 465.4L396.0 468.9L399.9 467.7Z" fill="#77ff88"/><path d="M411.6 464.0L407.7 465.2L409.1 466.7L413.1 464.8Z" fill="#88ff77"/><path d="M463.0 447.6L459.1 447.2L460.5 445.5L464.4 446.1Z" fill="#0000e6"/><path d="M380.0 456.8L376.1 456.7L377.5 462.1L381.4 461.9Z" fill="#e9ff16"/><path d="M339.1 446.6L335.2 449.9L336.6 453.1L340.5 450.1Z" fill="#ff8400"/><path d="M428.7 457.7L424.8 459.3L426.3 458.4L430.2 456.3Z" fill="#0000e6"/><path d="M496.0 464.8L492.1 461.1L493.5 462.5L497.4 466.3Z" fill="#a8ff57"/><path d="M481.5 452.9L477.6 450.4L479.0 450.6L482.9 453.4Z" fill="#0000e6"/><path d="M370.8 451.2L366.9 451.3L368.3 456.9L372.2 456.7Z" fill="#ffc400"/><path d="M335.2 449.9L331.3 453.5L332.7 456.4L336.6 453.1Z" fill="#ffb400"/><path d="M352.3 443.5L348.4 445.3L349.8 449.9L353.7 448.3Z" fill="#ff5300"/><path d="M472.2 448.7L468.3 447.2L469.8 446.4L473.7 448.2Z" fill="#0000e6"/><path d="M445.9 450.5L442.0 451.5L443.4 449.4L447.3 448.3Z" fill="#0000e6"/><path d="M361.6 446.4L357.6 447.1L359.0 452.4L363.0 451.7Z" fill="#ff7300"/><path d="M407.7 465.2L403.8 466.5L405.2 468.7L409.1 466.7Z" fill="#77ff88"/><path d="M331.3 453.5L327.3 457.4L328.7 459.8L332.7 456.4Z" fill="#ffe500"/><path d="M385.3 461.8L381.4 461.9L382.8 467.0L386.7 466.5Z" fill="#98ff67"/><path d="M394.5 465.4L390.6 465.9L392.0 470.1L396.0 468.9Z" fill="#67ff98"/><path d="M424.8 459.3L420.9 461.1L422.3 460.7L426.3 458.4Z" fill="#e9ff16"/><path d="M327.3 457.4L323.4 461.5L324.8 463.5L328.7 459.8Z" fill="#d9ff26"/><path d="M376.1 456.7L372.2 456.7L373.6 462.4L377.5 462.1Z" fill="#e9ff16"/><path d="M323.4 461.5L319.4 465.6L320.9 467.2L324.8 463.5Z" fill="#98ff67"/><path d="M348.4 445.3L344.5 447.5L345.9 451.8L349.8 449.9Z" fill="#ff6300"/><path d="M459.1 447.2L455.2 447.1L456.6 445.3L460.5 445.5Z" fill="#0000e6"/><path d="M403.8 466.5L399.9 467.7L401.3 470.6L405.2 468.7Z" fill="#67ff98"/><path d="M442.0 451.5L438.0 452.9L439.5 451.0L443.4 449.4Z" fill="#0000e6"/><path d="M366.9 451.3L363.0 451.7L364.3 457.4L368.3 456.9Z" fill="#ffc400"/><path d="M486.8 456.5L482.9 453.4L484.3 454.2L488.2 457.5Z" fill="#0000e6"/><path d="M420.9 461.1L417.0 462.9L418.4 463.2L422.3 460.7Z" fill="#c8ff37"/><path d="M357.6 447.1L353.7 448.3L355.1 453.5L359.0 452.4Z" fill="#ff8400"/><path d="M390.6 465.9L386.7 466.5L388.1 471.2L392.0 470.1Z" fill="#67ff98"/><path d="M344.5 447.5L340.5 450.1L341.9 454.1L345.9 451.8Z" fill="#ff8400"/><path d="M381.4 461.9L377.5 462.1L378.9 467.6L382.8 467.0Z" fill="#a8ff57"/><path d="M468.3 447.2L464.4 446.1L465.9 445.1L469.8 446.4Z" fill="#0000e6"/><path d="M477.6 450.4L473.7 448.2L475.1 448.1L479.0 450.6Z" fill="#0000e6"/><path d="M417.0 462.9L413.1 464.8L414.5 465.7L418.4 463.2Z" fill="#a8ff57"/><path d="M372.2 456.7L368.3 456.9L369.7 462.8L373.6 462.4Z" fill="#f9ff06"/><path d="M399.9 467.7L396.0 468.9L397.4 472.4L401.3 470.6Z" fill="#57ffa8"/><path d="M438.0 452.9L434.1 454.5L435.6 452.9L439.5 451.0Z" fill="#0000e6"/><path d="M455.2 447.1L451.2 447.5L452.7 445.6L456.6 445.3Z" fill="#0000e6"/><path d="M340.5 450.1L336.6 453.1L338.0 456.6L341.9 454.1Z" fill="#ffa400"/><path d="M492.1 461.1L488.2 457.5L489.6 458.7L493.5 462.5Z" fill="#0000e6"/><path d="M353.7 448.3L349.8 449.9L351.2 454.8L355.1 453.5Z" fill="#ff8400"/><path d="M363.0 451.7L359.0 452.4L360.4 458.1L364.3 457.4Z" fill="#ffc400"/><path d="M386.7 466.5L382.8 467.0L384.2 472.2L388.1 471.2Z" fill="#67ff98"/><path d="M413.1 464.8L409.1 466.7L410.6 468.3L414.5 465.7Z" fill="#88ff77"/><path d="M336.6 453.1L332.7 456.4L334.1 459.4L338.0 456.6Z" fill="#ffd500"/><path d="M377.5 462.1L373.6 462.4L375.0 468.1L378.9 467.6Z" fill="#a8ff57"/><path d="M434.1 454.5L430.2 456.3L431.6 455.2L435.6 452.9Z" fill="#0000e6"/><path d="M396.0 468.9L392.0 470.1L393.4 474.2L397.4 472.4Z" fill="#47ffb8"/><path d="M497.4 466.3L493.5 462.5L494.9 464.0L498.8 467.9Z" fill="#a8ff57"/><path d="M332.7 456.4L328.7 459.8L330.2 462.4L334.1 459.4Z" fill="#f9ff06"/><path d="M349.8 449.9L345.9 451.8L347.3 456.4L351.2 454.8Z" fill="#ffa400"/><path d="M368.3 456.9L364.3 457.4L365.7 463.3L369.7 462.8Z" fill="#f9ff06"/><path d="M451.2 447.5L447.3 448.3L448.8 446.4L452.7 445.6Z" fill="#0000e6"/><path d="M409.1 466.7L405.2 468.7L406.6 470.9L410.6 468.3Z" fill="#77ff88"/><path d="M482.9 453.4L479.0 450.6L480.4 451.1L484.3 454.2Z" fill="#0000e6"/><path d="M464.4 446.1L460.5 445.5L462.0 444.3L465.9 445.1Z" fill="#0000e6"/><path d="M359.0 452.4L355.1 453.5L356.5 458.9L360.4 458.1Z" fill="#ffc400"/><path d="M328.7 459.8L324.8 463.5L326.2 465.5L330.2 462.4Z" fill="#c8ff37"/><path d="M430.2 456.3L426.3 458.4L427.7 457.7L431.6 455.2Z" fill="#0000e6"/><path d="M382.8 467.0L378.9 467.6L380.3 473.1L384.2 472.2Z" fill="#57ffa8"/><path d="M473.7 448.2L469.8 446.4L471.2 446.1L475.1 448.1Z" fill="#0000e6"/><path d="M392.0 470.1L388.1 471.2L389.5 475.8L393.4 474.2Z" fill="#37ffc8"/><path d="M324.8 463.5L320.9 467.2L322.3 468.7L326.2 465.5Z" fill="#98ff67"/><path d="M345.9 451.8L341.9 454.1L343.4 458.3L347.3 456.4Z" fill="#ffb400"/><path d="M373.6 462.4L369.7 462.8L371.1 468.7L375.0 468.1Z" fill="#a8ff57"/><path d="M405.2 468.7L401.3 470.6L402.7 473.4L406.6 470.9Z" fill="#57ffa8"/><path d="M426.3 458.4L422.3 460.7L423.8 460.5L427.7 457.7Z" fill="#fff500"/><path d="M447.3 448.3L443.4 449.4L444.9 447.7L448.8 446.4Z" fill="#0000e6"/><path d="M364.3 457.4L360.4 458.1L361.8 463.9L365.7 463.3Z" fill="#f9ff06"/><path d="M355.1 453.5L351.2 454.8L352.6 460.0L356.5 458.9Z" fill="#ffc400"/><path d="M488.2 457.5L484.3 454.2L485.8 455.2L489.6 458.7Z" fill="#0000e6"/><path d="M341.9 454.1L338.0 456.6L339.4 460.4L343.4 458.3Z" fill="#ffd500"/><path d="M401.3 470.6L397.4 472.4L398.8 475.8L402.7 473.4Z" fill="#37ffc8"/><path d="M422.3 460.7L418.4 463.2L419.9 463.5L423.8 460.5Z" fill="#e9ff16"/><path d="M378.9 467.6L375.0 468.1L376.4 473.9L380.3 473.1Z" fill="#57ffa8"/><path d="M388.1 471.2L384.2 472.2L385.6 477.2L389.5 475.8Z" fill="#26ffd9"/><path d="M460.5 445.5L456.6 445.3L458.1 444.0L462.0 444.3Z" fill="#0000e6"/><path d="M369.7 462.8L365.7 463.3L367.1 469.3L371.1 468.7Z" fill="#a8ff57"/><path d="M443.4 449.4L439.5 451.0L440.9 449.5L444.9 447.7Z" fill="#0000e6"/><path d="M338.0 456.6L334.1 459.4L335.5 462.7L339.4 460.4Z" fill="#fff500"/><path d="M418.4 463.2L414.5 465.7L415.9 466.6L419.9 463.5Z" fill="#b8ff47"/><path d="M351.2 454.8L347.3 456.4L348.7 461.3L352.6 460.0Z" fill="#ffd500"/><path d="M493.5 462.5L489.6 458.7L491.1 460.2L494.9 464.0Z" fill="#f9ff06"/><path d="M479.0 450.6L475.1 448.1L476.5 448.4L480.4 451.1Z" fill="#0000e6"/><path d="M360.4 458.1L356.5 458.9L357.9 464.6L361.8 463.9Z" fill="#f9ff06"/><path d="M397.4 472.4L393.4 474.2L394.9 478.1L398.8 475.8Z" fill="#16ffe9"/><path d="M469.8 446.4L465.9 445.1L467.3 444.5L471.2 446.1Z" fill="#0000e6"/><path d="M384.2 472.2L380.3 473.1L381.7 478.5L385.6 477.2Z" fill="#16ffe9"/><path d="M414.5 465.7L410.6 468.3L412.0 469.8L415.9 466.6Z" fill="#98ff67"/><path d="M334.1 459.4L330.2 462.4L331.6 465.1L335.5 462.7Z" fill="#e9ff16"/><path d="M375.0 468.1L371.1 468.7L372.4 474.6L376.4 473.9Z" fill="#57ffa8"/><path d="M439.5 451.0L435.6 452.9L437.0 451.7L440.9 449.5Z" fill="#0000e6"/><path d="M456.6 445.3L452.7 445.6L454.1 444.2L458.1 444.0Z" fill="#0000e6"/><path d="M347.3 456.4L343.4 458.3L344.8 462.7L348.7 461.3Z" fill="#ffe500"/><path d="M393.4 474.2L389.5 475.8L390.9 480.2L394.9 478.1Z" fill="#06fff9"/><path d="M365.7 463.3L361.8 463.9L363.2 469.8L367.1 469.3Z" fill="#a8ff57"/><path d="M410.6 468.3L406.6 470.9L408.1 473.0L412.0 469.8Z" fill="#67ff98"/><path d="M330.2 462.4L326.2 465.5L327.6 467.6L331.6 465.1Z" fill="#b8ff47"/><path d="M356.5 458.9L352.6 460.0L354.0 465.4L357.9 464.6Z" fill="#e9ff16"/><path d="M484.3 454.2L480.4 451.1L481.9 452.0L485.8 455.2Z" fill="#0000e6"/><path d="M435.6 452.9L431.6 455.2L433.1 454.3L437.0 451.7Z" fill="#0000e6"/><path d="M380.3 473.1L376.4 473.9L377.8 479.6L381.7 478.5Z" fill="#16ffe9"/><path d="M406.6 470.9L402.7 473.4L404.1 476.1L408.1 473.0Z" fill="#47ffb8"/><path d="M326.2 465.5L322.3 468.7L323.7 470.2L327.6 467.6Z" fill="#98ff67"/><path d="M371.1 468.7L367.1 469.3L368.5 475.2L372.4 474.6Z" fill="#57ffa8"/><path d="M343.4 458.3L339.4 460.4L340.8 464.4L344.8 462.7Z" fill="#f9ff06"/><path d="M389.5 475.8L385.6 477.2L387.0 482.1L390.9 480.2Z" fill="#00e5ff"/><path d="M465.9 445.1L462.0 444.3L463.4 443.6L467.3 444.5Z" fill="#0000e6"/><path d="M452.7 445.6L448.8 446.4L450.2 445.1L454.1 444.2Z" fill="#0000e6"/><path d="M431.6 455.2L427.7 457.7L429.2 457.3L433.1 454.3Z" fill="#ffa400"/><path d="M475.1 448.1L471.2 446.1L472.6 446.2L476.5 448.4Z" fill="#0000e6"/><path d="M361.8 463.9L357.9 464.6L359.3 470.4L363.2 469.8Z" fill="#a8ff57"/><path d="M402.7 473.4L398.8 475.8L400.2 479.1L404.1 476.1Z" fill="#16ffe9"/><path d="M352.6 460.0L348.7 461.3L350.1 466.3L354.0 465.4Z" fill="#e9ff16"/><path d="M489.6 458.7L485.8 455.2L487.2 456.6L491.1 460.2Z" fill="#ffc400"/><path d="M427.7 457.7L423.8 460.5L425.2 460.5L429.2 457.3Z" fill="#ffd500"/><path d="M339.4 460.4L335.5 462.7L336.9 466.1L340.8 464.4Z" fill="#e9ff16"/><path d="M376.4 473.9L372.4 474.6L373.8 480.5L377.8 479.6Z" fill="#06fff9"/><path d="M385.6 477.2L381.7 478.5L383.1 483.7L387.0 482.1Z" fill="#00d4ff"/><path d="M398.8 475.8L394.9 478.1L396.3 481.9L400.2 479.1Z" fill="#00f5ff"/><path d="M367.1 469.3L363.2 469.8L364.6 475.7L368.5 475.2Z" fill="#57ffa8"/><path d="M448.8 446.4L444.9 447.7L446.3 446.5L450.2 445.1Z" fill="#0000e6"/><path d="M423.8 460.5L419.9 463.5L421.3 464.0L425.2 460.5Z" fill="#f9ff06"/><path d="M348.7 461.3L344.8 462.7L346.2 467.4L350.1 466.3Z" fill="#d9ff26"/><path d="M357.9 464.6L354.0 465.4L355.4 470.9L359.3 470.4Z" fill="#a8ff57"/><path d="M335.5 462.7L331.6 465.1L333.0 467.9L336.9 466.1Z" fill="#c8ff37"/><path d="M462.0 444.3L458.1 444.0L459.5 443.2L463.4 443.6Z" fill="#0000e6"/><path d="M419.9 463.5L415.9 466.6L417.4 467.6L421.3 464.0Z" fill="#c8ff37"/><path d="M394.9 478.1L390.9 480.2L392.3 484.4L396.3 481.9Z" fill="#00d4ff"/><path d="M480.4 451.1L476.5 448.4L478.0 449.2L481.9 452.0Z" fill="#0000e6"/><path d="M381.7 478.5L377.8 479.6L379.2 485.0L383.1 483.7Z" fill="#00c4ff"/><path d="M372.4 474.6L368.5 475.2L369.9 481.1L373.8 480.5Z" fill="#06fff9"/><path d="M415.9 466.6L412.0 469.8L413.4 471.3L417.4 467.6Z" fill="#98ff67"/><path d="M444.9 447.7L440.9 449.5L442.4 448.4L446.3 446.5Z" fill="#0000e6"/><path d="M471.2 446.1L467.3 444.5L468.7 444.5L472.6 446.2Z" fill="#0000e6"/><path d="M331.6 465.1L327.6 467.6L329.1 469.8L333.0 467.9Z" fill="#a8ff57"/><path d="M363.2 469.8L359.3 470.4L360.7 476.1L364.6 475.7Z" fill="#57ffa8"/><path d="M390.9 480.2L387.0 482.1L388.4 486.7L392.3 484.4Z" fill="#00b4ff"/><path d="M412.0 469.8L408.1 473.0L409.5 475.1L413.4 471.3Z" fill="#67ff98"/><path d="M344.8 462.7L340.8 464.4L342.2 468.4L346.2 467.4Z" fill="#c8ff37"/><path d="M354.0 465.4L350.1 466.3L351.5 471.5L355.4 470.9Z" fill="#a8ff57"/><path d="M408.1 473.0L404.1 476.1L405.5 478.7L409.5 475.1Z" fill="#37ffc8"/><path d="M440.9 449.5L437.0 451.7L438.5 450.9L442.4 448.4Z" fill="#0000e6"/><path d="M377.8 479.6L373.8 480.5L375.2 486.1L379.2 485.0Z" fill="#00c4ff"/><path d="M485.8 455.2L481.9 452.0L483.3 453.3L487.2 456.6Z" fill="#ff7300"/><path d="M458.1 444.0L454.1 444.2L455.6 443.4L459.5 443.2Z" fill="#0000e6"/><path d="M327.6 467.6L323.7 470.2L325.1 471.8L329.1 469.8Z" fill="#88ff77"/><path d="M368.5 475.2L364.6 475.7L366.0 481.6L369.9 481.1Z" fill="#06fff9"/><path d="M387.0 482.1L383.1 483.7L384.5 488.6L388.4 486.7Z" fill="#00a4ff"/><path d="M404.1 476.1L400.2 479.1L401.6 482.2L405.5 478.7Z" fill="#06fff9"/><path d="M340.8 464.4L336.9 466.1L338.3 469.6L342.2 468.4Z" fill="#b8ff47"/><path d="M437.0 451.7L433.1 454.3L434.5 453.8L438.5 450.9Z" fill="#ff5300"/><path d="M359.3 470.4L355.4 470.9L356.8 476.4L360.7 476.1Z" fill="#57ffa8"/><path d="M400.2 479.1L396.3 481.9L397.7 485.4L401.6 482.2Z" fill="#00d4ff"/><path d="M350.1 466.3L346.2 467.4L347.6 472.0L351.5 471.5Z" fill="#98ff67"/><path d="M476.5 448.4L472.6 446.2L474.1 446.9L478.0 449.2Z" fill="#0000e6"/><path d="M467.3 444.5L463.4 443.6L464.8 443.5L468.7 444.5Z" fill="#0000e6"/><path d="M373.8 480.5L369.9 481.1L371.3 486.8L375.2 486.1Z" fill="#00c4ff"/><path d="M433.1 454.3L429.2 457.3L430.6 457.1L434.5 453.8Z" fill="#ff8400"/><path d="M383.1 483.7L379.2 485.0L380.6 490.2L384.5 488.6Z" fill="#0084ff"/><path d="M454.1 444.2L450.2 445.1L451.7 444.3L455.6 443.4Z" fill="#0000e6"/><path d="M396.3 481.9L392.3 484.4L393.7 488.4L397.7 485.4Z" fill="#00a4ff"/><path d="M336.9 466.1L333.0 467.9L334.4 470.8L338.3 469.6Z" fill="#a8ff57"/><path d="M364.6 475.7L360.7 476.1L362.1 481.8L366.0 481.6Z" fill="#06fff9"/><path d="M429.2 457.3L425.2 460.5L426.7 460.7L430.6 457.1Z" fill="#ffb400"/><path d="M425.2 460.5L421.3 464.0L422.7 464.6L426.7 460.7Z" fill="#ffe500"/><path d="M355.4 470.9L351.5 471.5L352.9 476.6L356.8 476.4Z" fill="#57ffa8"/><path d="M392.3 484.4L388.4 486.7L389.8 491.0L393.7 488.4Z" fill="#0084ff"/><path d="M346.2 467.4L342.2 468.4L343.7 472.6L347.6 472.0Z" fill="#98ff67"/><path d="M379.2 485.0L375.2 486.1L376.6 491.4L380.6 490.2Z" fill="#0084ff"/><path d="M421.3 464.0L417.4 467.6L418.8 468.7L422.7 464.6Z" fill="#d9ff26"/><path d="M481.9 452.0L478.0 449.2L479.4 450.5L483.3 453.3Z" fill="#ff3300"/><path d="M450.2 445.1L446.3 446.5L447.8 445.8L451.7 444.3Z" fill="#0000e6"/><path d="M369.9 481.1L366.0 481.6L367.4 487.2L371.3 486.8Z" fill="#00c4ff"/><path d="M333.0 467.9L329.1 469.8L330.5 472.0L334.4 470.8Z" fill="#98ff67"/><path d="M417.4 467.6L413.4 471.3L414.8 472.9L418.8 468.7Z" fill="#98ff67"/><path d="M463.4 443.6L459.5 443.2L460.9 443.0L464.8 443.5Z" fill="#0000e6"/><path d="M388.4 486.7L384.5 488.6L385.9 493.2L389.8 491.0Z" fill="#0063ff"/><path d="M413.4 471.3L409.5 475.1L410.9 477.0L414.8 472.9Z" fill="#67ff98"/><path d="M360.7 476.1L356.8 476.4L358.2 481.8L362.1 481.8Z" fill="#16ffe9"/><path d="M472.6 446.2L468.7 444.5L470.2 445.1L474.1 446.9Z" fill="#e10000"/><path d="M409.5 475.1L405.5 478.7L407.0 481.1L410.9 477.0Z" fill="#26ffd9"/><path d="M342.2 468.4L338.3 469.6L339.7 473.2L343.7 472.6Z" fill="#98ff67"/><path d="M446.3 446.5L442.4 448.4L443.8 447.9L447.8 445.8Z" fill="#f10000"/><path d="M351.5 471.5L347.6 472.0L349.0 476.7L352.9 476.6Z" fill="#67ff98"/><path d="M405.5 478.7L401.6 482.2L403.0 485.0L407.0 481.1Z" fill="#00e5ff"/><path d="M329.1 469.8L325.1 471.8L326.6 473.3L330.5 472.0Z" fill="#88ff77"/><path d="M375.2 486.1L371.3 486.8L372.7 492.1L376.6 491.4Z" fill="#0073ff"/><path d="M384.5 488.6L380.6 490.2L382.0 495.0L385.9 493.2Z" fill="#0053ff"/><path d="M401.6 482.2L397.7 485.4L399.1 488.7L403.0 485.0Z" fill="#00b4ff"/><path d="M366.0 481.6L362.1 481.8L363.5 487.3L367.4 487.2Z" fill="#00c4ff"/><path d="M442.4 448.4L438.5 450.9L439.9 450.5L443.8 447.9Z" fill="#ff1200"/><path d="M459.5 443.2L455.6 443.4L457.0 443.3L460.9 443.0Z" fill="#0000e6"/><path d="M397.7 485.4L393.7 488.4L395.2 492.0L399.1 488.7Z" fill="#0084ff"/><path d="M356.8 476.4L352.9 476.6L354.3 481.7L358.2 481.8Z" fill="#16ffe9"/><path d="M338.3 469.6L334.4 470.8L335.8 473.7L339.7 473.2Z" fill="#88ff77"/><path d="M478.0 449.2L474.1 446.9L475.5 448.1L479.4 450.5Z" fill="#ff0200"/><path d="M438.5 450.9L434.5 453.8L436.0 453.7L439.9 450.5Z" fill="#ff3300"/><path d="M347.6 472.0L343.7 472.6L345.1 476.7L349.0 476.7Z" fill="#67ff98"/><path d="M380.6 490.2L376.6 491.4L378.0 496.3L382.0 495.0Z" fill="#0043ff"/><path d="M371.3 486.8L367.4 487.2L368.8 492.5L372.7 492.1Z" fill="#0073ff"/><path d="M393.7 488.4L389.8 491.0L391.2 494.9L395.2 492.0Z" fill="#0053ff"/><path d="M468.7 444.5L464.8 443.5L466.3 444.0L470.2 445.1Z" fill="#b00000"/><path d="M434.5 453.8L430.6 457.1L432.0 457.2L436.0 453.7Z" fill="#ff6300"/><path d="M362.1 481.8L358.2 481.8L359.6 487.0L363.5 487.3Z" fill="#00c4ff"/><path d="M455.6 443.4L451.7 444.3L453.1 444.2L457.0 443.3Z" fill="#b00000"/><path d="M389.8 491.0L385.9 493.2L387.3 497.3L391.2 494.9Z" fill="#0033ff"/><path d="M430.6 457.1L426.7 460.7L428.1 461.2L432.0 457.2Z" fill="#ffa400"/><path d="M334.4 470.8L330.5 472.0L331.9 474.3L335.8 473.7Z" fill="#88ff77"/><path d="M426.7 460.7L422.7 464.6L424.2 465.4L428.1 461.2Z" fill="#ffd500"/><path d="M352.9 476.6L349.0 476.7L350.4 481.3L354.3 481.7Z" fill="#26ffd9"/><path d="M376.6 491.4L372.7 492.1L374.1 497.1L378.0 496.3Z" fill="#0033ff"/><path d="M422.7 464.6L418.8 468.7L420.2 469.9L424.2 465.4Z" fill="#e9ff16"/><path d="M343.7 472.6L339.7 473.2L341.2 476.7L345.1 476.7Z" fill="#67ff98"/><path d="M418.8 468.7L414.8 472.9L416.3 474.4L420.2 469.9Z" fill="#a8ff57"/><path d="M367.4 487.2L363.5 487.3L364.9 492.4L368.8 492.5Z" fill="#0084ff"/><path d="M414.8 472.9L410.9 477.0L412.3 478.9L416.3 474.4Z" fill="#57ffa8"/><path d="M385.9 493.2L382.0 495.0L383.4 499.3L387.3 497.3Z" fill="#0022ff"/><path d="M410.9 477.0L407.0 481.1L408.4 483.4L412.3 478.9Z" fill="#16ffe9"/><path d="M451.7 444.3L447.8 445.8L449.2 445.7L453.1 444.2Z" fill="#b00000"/><path d="M464.8 443.5L460.9 443.0L462.4 443.5L466.3 444.0Z" fill="#a00000"/><path d="M407.0 481.1L403.0 485.0L404.4 487.6L408.4 483.4Z" fill="#00d4ff"/><path d="M474.1 446.9L470.2 445.1L471.6 446.4L475.5 448.1Z" fill="#d00000"/><path d="M358.2 481.8L354.3 481.7L355.7 486.5L359.6 487.0Z" fill="#00d4ff"/><path d="M330.5 472.0L326.6 473.3L328.0 474.8L331.9 474.3Z" fill="#88ff77"/><path d="M403.0 485.0L399.1 488.7L400.5 491.6L404.4 487.6Z" fill="#00a4ff"/><path d="M372.7 492.1L368.8 492.5L370.2 497.4L374.1 497.1Z" fill="#0033ff"/><path d="M399.1 488.7L395.2 492.0L396.6 495.1L400.5 491.6Z" fill="#0063ff"/><path d="M382.0 495.0L378.0 496.3L379.5 500.7L383.4 499.3Z" fill="#0002ff"/><path d="M349.0 476.7L345.1 476.7L346.5 480.8L350.4 481.3Z" fill="#37ffc8"/><path d="M447.8 445.8L443.8 447.9L445.3 447.9L449.2 445.7Z" fill="#d00000"/><path d="M339.7 473.2L335.8 473.7L337.2 476.6L341.2 476.7Z" fill="#77ff88"/><path d="M363.5 487.3L359.6 487.0L361.0 492.0L364.9 492.4Z" fill="#0084ff"/><path d="M395.2 492.0L391.2 494.9L392.6 498.3L396.6 495.1Z" fill="#0033ff"/><path d="M460.9 443.0L457.0 443.3L458.5 443.7L462.4 443.5Z" fill="#900000"/><path d="M443.8 447.9L439.9 450.5L441.3 450.7L445.3 447.9Z" fill="#f10000"/><path d="M391.2 494.9L387.3 497.3L388.7 500.9L392.6 498.3Z" fill="#0012ff"/><path d="M354.3 481.7L350.4 481.3L351.8 485.8L355.7 486.5Z" fill="#00e5ff"/><path d="M378.0 496.3L374.1 497.1L375.5 501.5L379.5 500.7Z" fill="#0002ff"/><path d="M470.2 445.1L466.3 444.0L467.7 445.2L471.6 446.4Z" fill="#b00000"/><path d="M368.8 492.5L364.9 492.4L366.3 497.2L370.2 497.4Z" fill="#0043ff"/><path d="M439.9 450.5L436.0 453.7L437.4 454.0L441.3 450.7Z" fill="#ff2200"/><path d="M335.8 473.7L331.9 474.3L333.3 476.5L337.2 476.6Z" fill="#77ff88"/><path d="M345.1 476.7L341.2 476.7L342.6 480.2L346.5 480.8Z" fill="#47ffb8"/><path d="M436.0 453.7L432.0 457.2L433.5 457.8L437.4 454.0Z" fill="#ff5300"/><path d="M387.3 497.3L383.4 499.3L384.8 503.0L388.7 500.9Z" fill="#0000f1"/><path d="M359.6 487.0L355.7 486.5L357.1 491.2L361.0 492.0Z" fill="#00a4ff"/><path d="M457.0 443.3L453.1 444.2L454.5 444.7L458.5 443.7Z" fill="#900000"/><path d="M432.0 457.2L428.1 461.2L429.5 462.0L433.5 457.8Z" fill="#ff8400"/><path d="M428.1 461.2L424.2 465.4L425.6 466.4L429.5 462.0Z" fill="#ffc400"/><path d="M424.2 465.4L420.2 469.9L421.6 471.1L425.6 466.4Z" fill="#e9ff16"/><path d="M420.2 469.9L416.3 474.4L417.7 475.9L421.6 471.1Z" fill="#a8ff57"/><path d="M374.1 497.1L370.2 497.4L371.6 501.8L375.5 501.5Z" fill="#0002ff"/><path d="M416.3 474.4L412.3 478.9L413.7 480.7L417.7 475.9Z" fill="#57ffa8"/><path d="M412.3 478.9L408.4 483.4L409.8 485.4L413.7 480.7Z" fill="#16ffe9"/><path d="M408.4 483.4L404.4 487.6L405.9 489.9L409.8 485.4Z" fill="#00c4ff"/><path d="M350.4 481.3L346.5 480.8L347.9 484.8L351.8 485.8Z" fill="#06fff9"/><path d="M383.4 499.3L379.5 500.7L380.9 504.5L384.8 503.0Z" fill="#0000e1"/><path d="M404.4 487.6L400.5 491.6L401.9 494.1L405.9 489.9Z" fill="#0084ff"/><path d="M364.9 492.4L361.0 492.0L362.4 496.5L366.3 497.2Z" fill="#0053ff"/><path d="M466.3 444.0L462.4 443.5L463.8 444.7L467.7 445.2Z" fill="#900000"/><path d="M331.9 474.3L328.0 474.8L329.4 476.4L333.3 476.5Z" fill="#77ff88"/><path d="M400.5 491.6L396.6 495.1L398.0 497.9L401.9 494.1Z" fill="#0053ff"/><path d="M453.1 444.2L449.2 445.7L450.6 446.2L454.5 444.7Z" fill="#a00000"/><path d="M341.2 476.7L337.2 476.6L338.7 479.5L342.6 480.2Z" fill="#57ffa8"/><path d="M396.6 495.1L392.6 498.3L394.1 501.2L398.0 497.9Z" fill="#0022ff"/><path d="M355.7 486.5L351.8 485.8L353.2 490.0L357.1 491.2Z" fill="#00b4ff"/><path d="M379.5 500.7L375.5 501.5L376.9 505.4L380.9 504.5Z" fill="#0000d0"/><path d="M370.2 497.4L366.3 497.2L367.7 501.5L371.6 501.8Z" fill="#0002ff"/><path d="M449.2 445.7L445.3 447.9L446.7 448.5L450.6 446.2Z" fill="#b00000"/><path d="M392.6 498.3L388.7 500.9L390.1 504.0L394.1 501.2Z" fill="#0000f1"/><path d="M346.5 480.8L342.6 480.2L344.0 483.6L347.9 484.8Z" fill="#16ffe9"/><path d="M462.4 443.5L458.5 443.7L459.9 444.9L463.8 444.7Z" fill="#800000"/><path d="M361.0 492.0L357.1 491.2L358.5 495.4L362.4 496.5Z" fill="#0063ff"/><path d="M445.3 447.9L441.3 450.7L442.8 451.4L446.7 448.5Z" fill="#e10000"/><path d="M388.7 500.9L384.8 503.0L386.2 506.2L390.1 504.0Z" fill="#0000d0"/><path d="M337.2 476.6L333.3 476.5L334.8 478.7L338.7 479.5Z" fill="#67ff98"/><path d="M375.5 501.5L371.6 501.8L373.0 505.6L376.9 505.4Z" fill="#0000d0"/><path d="M441.3 450.7L437.4 454.0L438.8 454.8L442.8 451.4Z" fill="#ff0200"/><path d="M351.8 485.8L347.9 484.8L349.3 488.6L353.2 490.0Z" fill="#00d4ff"/><path d="M366.3 497.2L362.4 496.5L363.8 500.7L367.7 501.5Z" fill="#0022ff"/><path d="M437.4 454.0L433.5 457.8L434.9 458.7L438.8 454.8Z" fill="#ff4300"/><path d="M384.8 503.0L380.9 504.5L382.3 507.7L386.2 506.2Z" fill="#0000b0"/><path d="M458.5 443.7L454.5 444.7L456.0 445.8L459.9 444.9Z" fill="#800000"/><path d="M433.5 457.8L429.5 462.0L431.0 463.0L434.9 458.7Z" fill="#ff8400"/><path d="M429.5 462.0L425.6 466.4L427.0 467.7L431.0 463.0Z" fill="#ffc400"/><path d="M413.7 480.7L409.8 485.4L411.2 487.3L415.2 482.4Z" fill="#06fff9"/><path d="M417.7 475.9L413.7 480.7L415.2 482.4L419.1 477.5Z" fill="#57ffa8"/><path d="M421.6 471.1L417.7 475.9L419.1 477.5L423.1 472.5Z" fill="#a8ff57"/><path d="M425.6 466.4L421.6 471.1L423.1 472.5L427.0 467.7Z" fill="#f9ff06"/><path d="M409.8 485.4L405.9 489.9L407.3 491.9L411.2 487.3Z" fill="#00c4ff"/><path d="M405.9 489.9L401.9 494.1L403.3 496.2L407.3 491.9Z" fill="#0084ff"/><path d="M342.6 480.2L338.7 479.5L340.1 482.3L344.0 483.6Z" fill="#37ffc8"/><path d="M401.9 494.1L398.0 497.9L399.4 500.2L403.3 496.2Z" fill="#0043ff"/><path d="M357.1 491.2L353.2 490.0L354.6 493.9L358.5 495.4Z" fill="#0084ff"/><path d="M333.3 476.5L329.4 476.4L330.8 477.9L334.8 478.7Z" fill="#77ff88"/><path d="M371.6 501.8L367.7 501.5L369.1 505.2L373.0 505.6Z" fill="#0000e1"/><path d="M398.0 497.9L394.1 501.2L395.5 503.6L399.4 500.2Z" fill="#0002ff"/><path d="M380.9 504.5L376.9 505.4L378.4 508.6L382.3 507.7Z" fill="#0000b0"/><path d="M454.5 444.7L450.6 446.2L452.1 447.4L456.0 445.8Z" fill="#900000"/><path d="M394.1 501.2L390.1 504.0L391.5 506.4L395.5 503.6Z" fill="#0000e1"/><path d="M362.4 496.5L358.5 495.4L359.9 499.3L363.8 500.7Z" fill="#0033ff"/><path d="M347.9 484.8L344.0 483.6L345.4 486.9L349.3 488.6Z" fill="#00f5ff"/><path d="M450.6 446.2L446.7 448.5L448.1 449.7L452.1 447.4Z" fill="#b00000"/><path d="M390.1 504.0L386.2 506.2L387.6 508.7L391.5 506.4Z" fill="#0000b0"/><path d="M338.7 479.5L334.8 478.7L336.2 480.9L340.1 482.3Z" fill="#57ffa8"/><path d="M376.9 505.4L373.0 505.6L374.4 508.8L378.4 508.6Z" fill="#0000b0"/><path d="M367.7 501.5L363.8 500.7L365.2 504.3L369.1 505.2Z" fill="#0000f1"/><path d="M353.2 490.0L349.3 488.6L350.7 492.1L354.6 493.9Z" fill="#00a4ff"/><path d="M446.7 448.5L442.8 451.4L444.2 452.6L448.1 449.7Z" fill="#d00000"/><path d="M386.2 506.2L382.3 507.7L383.7 510.3L387.6 508.7Z" fill="#0000a0"/><path d="M442.8 451.4L438.8 454.8L440.3 456.1L444.2 452.6Z" fill="#ff0200"/><path d="M358.5 495.4L354.6 493.9L356.0 497.5L359.9 499.3Z" fill="#0053ff"/><path d="M438.8 454.8L434.9 458.7L436.3 460.0L440.3 456.1Z" fill="#ff3300"/><path d="M344.0 483.6L340.1 482.3L341.5 485.0L345.4 486.9Z" fill="#16ffe9"/><path d="M415.2 482.4L411.2 487.3L412.7 488.9L416.6 484.0Z" fill="#06fff9"/><path d="M411.2 487.3L407.3 491.9L408.7 493.6L412.7 488.9Z" fill="#00c4ff"/><path d="M434.9 458.7L431.0 463.0L432.4 464.4L436.3 460.0Z" fill="#ff7300"/><path d="M419.1 477.5L415.2 482.4L416.6 484.0L420.5 479.0Z" fill="#57ffa8"/><path d="M423.1 472.5L419.1 477.5L420.5 479.0L424.5 474.0Z" fill="#a8ff57"/><path d="M407.3 491.9L403.3 496.2L404.8 498.0L408.7 493.6Z" fill="#0073ff"/><path d="M431.0 463.0L427.0 467.7L428.4 469.1L432.4 464.4Z" fill="#ffc400"/><path d="M427.0 467.7L423.1 472.5L424.5 474.0L428.4 469.1Z" fill="#f9ff06"/><path d="M373.0 505.6L369.1 505.2L370.5 508.4L374.4 508.8Z" fill="#0000b0"/><path d="M403.3 496.2L399.4 500.2L400.8 501.9L404.8 498.0Z" fill="#0033ff"/><path d="M334.8 478.7L330.8 477.9L332.3 479.4L336.2 480.9Z" fill="#77ff88"/><path d="M382.3 507.7L378.4 508.6L379.8 511.2L383.7 510.3Z" fill="#000090"/><path d="M399.4 500.2L395.5 503.6L396.9 505.4L400.8 501.9Z" fill="#0002ff"/><path d="M363.8 500.7L359.9 499.3L361.3 502.7L365.2 504.3Z" fill="#0012ff"/><path d="M349.3 488.6L345.4 486.9L346.8 490.0L350.7 492.1Z" fill="#00d4ff"/><path d="M395.5 503.6L391.5 506.4L393.0 508.3L396.9 505.4Z" fill="#0000d0"/><path d="M378.4 508.6L374.4 508.8L375.9 511.4L379.8 511.2Z" fill="#000090"/><path d="M354.6 493.9L350.7 492.1L352.1 495.3L356.0 497.5Z" fill="#0084ff"/><path d="M391.5 506.4L387.6 508.7L389.0 510.6L393.0 508.3Z" fill="#0000b0"/><path d="M340.1 482.3L336.2 480.9L337.6 483.0L341.5 485.0Z" fill="#47ffb8"/><path d="M369.1 505.2L365.2 504.3L366.6 507.3L370.5 508.4Z" fill="#0000d0"/><path d="M359.9 499.3L356.0 497.5L357.4 500.7L361.3 502.7Z" fill="#0033ff"/><path d="M387.6 508.7L383.7 510.3L385.1 512.2L389.0 510.6Z" fill="#000090"/><path d="M345.4 486.9L341.5 485.0L342.9 487.6L346.8 490.0Z" fill="#06fff9"/><path d="M374.4 508.8L370.5 508.4L372.0 510.9L375.9 511.4Z" fill="#0000a0"/><path d="M365.2 504.3L361.3 502.7L362.7 505.7L366.6 507.3Z" fill="#0000f1"/><path d="M383.7 510.3L379.8 511.2L381.2 513.1L385.1 512.2Z" fill="#000080"/><path d="M336.2 480.9L332.3 479.4L333.7 480.9L337.6 483.0Z" fill="#67ff98"/><path d="M350.7 492.1L346.8 490.0L348.2 492.8L352.1 495.3Z" fill="#00b4ff"/><path d="M356.0 497.5L352.1 495.3L353.5 498.2L357.4 500.7Z" fill="#0063ff"/><path d="M370.5 508.4L366.6 507.3L368.1 509.8L372.0 510.9Z" fill="#0000b0"/><path d="M379.8 511.2L375.9 511.4L377.3 513.3L381.2 513.1Z" fill="#000080"/><path d="M341.5 485.0L337.6 483.0L339.0 485.1L342.9 487.6Z" fill="#37ffc8"/><path d="M361.3 502.7L357.4 500.7L358.8 503.4L362.7 505.7Z" fill="#0022ff"/><path d="M346.8 490.0L342.9 487.6L344.3 490.0L348.2 492.8Z" fill="#00e5ff"/><path d="M375.9 511.4L372.0 510.9L373.4 512.8L377.3 513.3Z" fill="#000090"/><path d="M366.6 507.3L362.7 505.7L364.2 508.0L368.1 509.8Z" fill="#0000e1"/><path d="M352.1 495.3L348.2 492.8L349.6 495.4L353.5 498.2Z" fill="#00a4ff"/><path d="M337.6 483.0L333.7 480.9L335.1 482.5L339.0 485.1Z" fill="#67ff98"/><path d="M357.4 500.7L353.5 498.2L355.0 500.8L358.8 503.4Z" fill="#0053ff"/><path d="M372.0 510.9L368.1 509.8L369.5 511.6L373.4 512.8Z" fill="#0000b0"/><path d="M342.9 487.6L339.0 485.1L340.4 487.1L344.3 490.0Z" fill="#26ffd9"/><path d="M362.7 505.7L358.8 503.4L360.3 505.7L364.2 508.0Z" fill="#0002ff"/><path d="M348.2 492.8L344.3 490.0L345.8 492.3L349.6 495.4Z" fill="#00d4ff"/><path d="M368.1 509.8L364.2 508.0L365.6 509.8L369.5 511.6Z" fill="#0000d0"/><path d="M353.5 498.2L349.6 495.4L351.1 497.7L355.0 500.8Z" fill="#0084ff"/><path d="M339.0 485.1L335.1 482.5L336.6 484.0L340.4 487.1Z" fill="#67ff98"/><path d="M358.8 503.4L355.0 500.8L356.4 502.9L360.3 505.7Z" fill="#0043ff"/><path d="M344.3 490.0L340.4 487.1L341.9 489.0L345.8 492.3Z" fill="#16ffe9"/><path d="M364.2 508.0L360.3 505.7L361.7 507.5L365.6 509.8Z" fill="#0002ff"/><path d="M349.6 495.4L345.8 492.3L347.2 494.3L351.1 497.7Z" fill="#00c4ff"/><path d="M355.0 500.8L351.1 497.7L352.5 499.7L356.4 502.9Z" fill="#0084ff"/><path d="M340.4 487.1L336.6 484.0L338.0 485.5L341.9 489.0Z" fill="#57ffa8"/><path d="M360.3 505.7L356.4 502.9L357.8 504.7L361.7 507.5Z" fill="#0033ff"/><path d="M345.8 492.3L341.9 489.0L343.3 490.7L347.2 494.3Z" fill="#16ffe9"/><path d="M351.1 497.7L347.2 494.3L348.6 496.2L352.5 499.7Z" fill="#00c4ff"/><path d="M356.4 502.9L352.5 499.7L353.9 501.4L357.8 504.7Z" fill="#0073ff"/><path d="M341.9 489.0L338.0 485.5L339.4 487.1L343.3 490.7Z" fill="#57ffa8"/><path d="M347.2 494.3L343.3 490.7L344.7 492.4L348.6 496.2Z" fill="#06fff9"/><path d="M352.5 499.7L348.6 496.2L350.0 497.8L353.9 501.4Z" fill="#00c4ff"/><path d="M343.3 490.7L339.4 487.1L340.8 488.6L344.7 492.4Z" fill="#57ffa8"/><path d="M348.6 496.2L344.7 492.4L346.1 494.0L350.0 497.8Z" fill="#06fff9"/><path d="M344.7 492.4L340.8 488.6L342.3 490.1L346.1 494.0Z" fill="#57ffa8"/></g>
<g stroke="#3a3a3a" stroke-width="1" fill="none"><path d="M255.8 452.1L328.5 530.0"/><path d="M328.5 530.0L527.8 501.7"/><path d="M528.2 444.7L527.8 501.7"/><path d="M527.8 501.7L530.9 505.0"/><path d="M515.4 503.5L517.1 505.3"/><path d="M502.9 505.2L506.0 508.5"/><path d="M490.4 507.0L492.1 508.8"/><path d="M478.0 508.8L481.0 512.1"/><path d="M465.5 510.5L467.2 512.4"/><path d="M453.1 512.3L456.1 515.6"/><path d="M440.6 514.1L442.3 515.9"/><path d="M428.1 515.9L431.2 519.2"/><path d="M415.7 517.6L417.4 519.5"/><path d="M403.2 519.4L406.3 522.7"/><path d="M390.8 521.2L392.5 523.0"/><path d="M378.3 522.9L381.4 526.2"/><path d="M365.8 524.7L367.5 526.5"/><path d="M353.4 526.5L356.5 529.8"/><path d="M340.9 528.3L342.6 530.1"/><path d="M328.5 530.0L331.5 533.3"/><path d="M264.9 461.8L261.9 462.2"/><path d="M274.0 471.6L271.0 472.0"/><path d="M283.1 481.3L280.1 481.7"/><path d="M292.1 491.1L286.6 491.4"/><path d="M301.2 500.8L298.3 501.2"/><path d="M310.3 510.5L307.3 511.0"/><path d="M319.4 520.3L316.4 520.7"/><path d="M527.8 501.7L532.8 501.0"/><path d="M527.9 487.4L530.4 487.1"/><path d="M528.0 473.2L533.0 472.5"/><path d="M528.1 458.9L530.6 458.6"/><path d="M528.2 444.7L533.2 444.0"/></g><g font-family="Liberation Sans" font-size="10.2" fill="#3c3c3c" text-anchor="middle"><text x="338.8" y="543.9">4</text><text x="363.0" y="540.9">3</text><text x="388.3" y="537.4">2</text><text x="412.5" y="532.4">1</text><text x="437.8" y="530.0">0</text><text x="463.8" y="527.9">-1</text><text x="490.0" y="524.2">-2</text><text x="514.6" y="520.5">-3</text><text x="540.0" y="518.3">-4</text><text x="446.0" y="547.9">X</text><text x="268.2" y="497.6">Y</text><text x="280.6" y="497.3">0</text><text x="540.2" y="447.6">1</text><text x="540.8" y="475.2">0</text><text x="542.8" y="504.5">-1</text><text x="555.0" y="474.1">Z</text></g>
</svg></div>
<div class="b" style="left:577px;top:320px;width:190px;height:19px;background:#d6d2cb"></div>
<div class="t" style="left:580.80px;top:324.43px;font-size:10.60px;color:#222;font-family:'Liberation Sans',sans-serif;-webkit-text-stroke:0.12px #222">Historique des commandes</div>
<svg style="left:722px;top:320px" width="42" height="19" viewBox="0 0 42 19"><text x="4.8" y="13.7" font-family="Liberation Sans" font-weight="bold" font-size="10.2" text-anchor="middle" fill="#5a2b8c" stroke="#5a2b8c" stroke-width="0.6">?</text><path d="M17.8 13.2L21.8 9.2" stroke="#5a2b8c" stroke-width="2"/><path d="M18.6 7.4h4.8v4.8z" fill="#5a2b8c"/><path d="M32 7.2L38.6 13.4M38.6 7.2L32 13.4" stroke="#5a2b8c" stroke-width="1.9"/></svg>
<div class="b" style="left:577px;top:339px;width:189px;height:219px;background:#fff;border:1px solid #9a9eaa"></div>
<svg style="left:581px;top:342.5px" width="10" height="10" viewBox="0 0 10 10"><rect x="0.5" y="0.5" width="9" height="9" rx="1.5" fill="#f4f4f4" stroke="#9a9a9a"/><path d="M2.5 5h5" stroke="#2a3a9a" stroke-width="1.2"/><path d="M5 2.5v5" stroke="#2a3a9a" stroke-width="1.2"/></svg>
<svg style="left:581px;top:357px" width="10" height="10" viewBox="0 0 10 10"><rect x="0.5" y="0.5" width="9" height="9" rx="1.5" fill="#f4f4f4" stroke="#9a9a9a"/><path d="M2.5 5h5" stroke="#2a3a9a" stroke-width="1.2"/></svg>
<div class="b" style="left:585.5px;top:352.5px;width:1px;height:4px;border-left:1px dotted #aaa"></div>
<div class="b" style="left:591px;top:347px;width:5px;height:1px;border-top:1px dotted #aaa"></div>
<div class="b" style="left:591px;top:361.5px;width:5px;height:1px;border-top:1px dotted #aaa"></div>
<div class="t" style="left:596.00px;top:342.05px;font-size:11.40px;color:#36c036;font-family:'Liberation Sans',sans-serif;-webkit-text-stroke:0.2px #36c036">// -- 31/12/2015 11:39:02 -- //</div>
<div class="t" style="left:596.00px;top:356.35px;font-size:11.40px;color:#36c036;font-family:'Liberation Sans',sans-serif;-webkit-text-stroke:0.2px #36c036">// -- 31/12/2015 16:23:28 -- //</div>
<div class="b" style="left:604px;top:367px;width:9px;height:8px;border-left:1px dotted #aaa;border-bottom:1px dotted #aaa"></div>
<div class="t" style="left:614.60px;top:368.92px;font-size:11.20px;color:#1a1a3a;font-family:'Liberation Sans',sans-serif;-webkit-text-stroke:0.15px #1a1a3a">plot3d</div>
<div class="b" style="left:0px;top:559px;width:768px;height:2px;background:#cdcdcd"></div>
<div class="b" style="left:0px;top:561px;width:768px;height:18px;background:#f0f0f0"></div>
<div class="b" style="left:0px;top:579px;width:768px;height:1px;background:#9c9c9c"></div>
<div class="b" style="left:0px;top:0px;width:768px;height:1px;background:#2b8ad8"></div>
<div class="b" style="left:0px;top:0px;width:1px;height:580px;background:#2b8ad8"></div>
<div class="b" style="left:767px;top:0px;width:1px;height:580px;background:#2b8ad8"></div>
</body></html>
